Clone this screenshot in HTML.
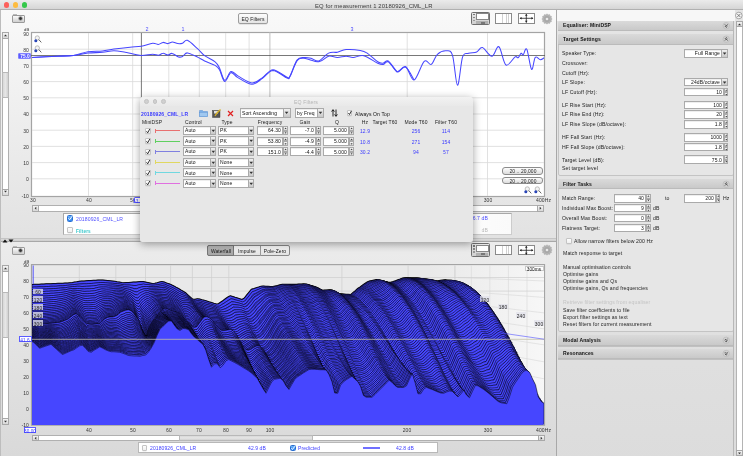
<!DOCTYPE html><html><head><meta charset="utf-8"><style>
*{margin:0;padding:0;box-sizing:border-box}
html,body{width:743px;height:456px;overflow:hidden;background:#e4e4e4;font-family:"Liberation Sans", sans-serif;position:relative}
.a{position:absolute}
.t{position:absolute;white-space:pre;line-height:1;font-family:"Liberation Sans", sans-serif;letter-spacing:0.1px;will-change:transform}
</style></head><body>
<div class="a" style="left:0.0px;top:10.0px;width:557.0px;height:228.0px;background:linear-gradient(#f9f9f9,#e2e2e2)"></div>
<div class="a" style="left:0.0px;top:241.0px;width:557.0px;height:215.0px;background:linear-gradient(#ececec,#d9d9d9)"></div>
<div class="a" style="left:0.0px;top:237.5px;width:557.0px;height:4.5px;background:linear-gradient(#dadada,#cdcdcd);border-top:0.5px solid #c4c4c4;border-bottom:1px solid #a8a8a8"></div>
<svg class="a" style="left:2px;top:238.5px" width="14" height="4"><path d="M0.5,3.6 L3,0.6 L5.5,3.6Z M6.5,0.6 L11.5,0.6 L9,3.6Z" fill="#111"/></svg>
<div class="a" style="left:0.0px;top:10.0px;width:1.0px;height:446.0px;background:#bdbdbd"></div>
<div class="a" style="left:0.0px;top:0.0px;width:743.0px;height:10.0px;background:linear-gradient(#ebebeb,#d5d5d5);border-bottom:1px solid #b0b0b0"></div>
<div class="a" style="left:3.7px;top:2.0px;width:5.6px;height:5.6px;border-radius:50%;background:#fc605b"></div>
<div class="a" style="left:12.7px;top:2.0px;width:5.6px;height:5.6px;border-radius:50%;background:#fdbc40"></div>
<div class="a" style="left:21.5px;top:2.0px;width:5.6px;height:5.6px;border-radius:50%;background:#34c84a"></div>
<div class="t" style="left:314.5px;top:4px;font-size:5.9px;color:#3a3a3a;">EQ for measurement 1 20180926_CML_LR</div>
<div class="a" style="left:12.0px;top:14.5px;width:13.0px;height:8.0px;background:linear-gradient(#fafafa,#d0d0d0);border:1px solid #9a9a9a;border-radius:1px"></div><div class="a" style="left:13.0px;top:13.5px;width:4.0px;height:1.5px;background:#bbb"></div><div class="a" style="left:17.5px;top:16.0px;width:5.0px;height:5.0px;border-radius:50%;background:radial-gradient(#333 25%,#888 45%,#ccc 70%)"></div>
<div class="a" style="left:238.3px;top:12.8px;width:29.4px;height:11.0px;background:linear-gradient(#fdfdfd,#e4e4e4);border:1px solid #9d9d9d;border-radius:2px;box-shadow:0 0.5px 0.5px rgba(0,0,0,.15)"></div><div class="t" style="left:253.0px;top:17px;font-size:5.0px;color:#1a1a1a;transform:translateX(-50%);">EQ Filters</div>
<div class="a" style="left:471.0px;top:11.5px;width:19.0px;height:13.5px;background:linear-gradient(#e8e8e8,#cfcfcf);border:1.3px solid #6e6e6e;border-radius:1.5px"></div><div class="a" style="left:475.5px;top:13.3px;width:13.0px;height:7.0px;background:#fff;border:0.6px solid #888"></div><div class="a" style="left:472.5px;top:13.5px;width:2.2px;height:1.6px;background:#777"></div><div class="a" style="left:472.5px;top:16.5px;width:2.2px;height:1.6px;background:#888"></div><div class="a" style="left:472.5px;top:19.5px;width:2.2px;height:1.6px;background:#999"></div><div class="a" style="left:476.0px;top:21.3px;width:12.0px;height:2.6px;background:#b0b0b0"></div><div class="a" style="left:480.5px;top:21.6px;width:4.0px;height:2.0px;background:#777"></div><div class="a" style="left:495.0px;top:12.9px;width:16.6px;height:10.8px;background:#fff;border:1px solid #8a8a8a"></div><div class="a" style="left:502.0px;top:13.9px;width:0.6px;height:8.8px;background:#d0d0d0"></div><div class="a" style="left:505.5px;top:13.9px;width:0.6px;height:8.8px;background:#d0d0d0"></div><div class="a" style="left:508.0px;top:13.9px;width:0.6px;height:8.8px;background:#d0d0d0"></div><div class="a" style="left:518.0px;top:12.9px;width:16.6px;height:10.8px;background:#fff;border:1px solid #8a8a8a"></div><svg class="a" style="left:518px;top:13.0px" width="17" height="11"><path d="M2,5.3 H15 M8.3,1 V9.6" stroke="#222" stroke-width="0.8"/><path d="M1.6,5.3 L3.6,4 L3.6,6.6Z M15.4,5.3 L13.4,4 L13.4,6.6Z M8.3,0.9 L7,2.8 L9.6,2.8Z M8.3,9.7 L7,7.8 L9.6,7.8Z" fill="#222"/></svg><svg class="a" style="left:541px;top:12.5px" width="12" height="12"><polygon points="11.20,6.00 10.06,7.09 10.50,8.60 8.97,8.97 8.60,10.50 7.09,10.06 6.00,11.20 4.91,10.06 3.40,10.50 3.03,8.97 1.50,8.60 1.94,7.09 0.80,6.00 1.94,4.91 1.50,3.40 3.03,3.03 3.40,1.50 4.91,1.94 6.00,0.80 7.09,1.94 8.60,1.50 8.97,3.03 10.50,3.40 10.06,4.91" fill="#b4b4b4" stroke="#9a9a9a" stroke-width="0.4"/><circle cx="6" cy="6" r="3" fill="#a8a8a8"/><circle cx="6" cy="6" r="1.3" fill="#e8e8e8"/></svg>
<svg class="a" style="left:0;top:0" width="743" height="456" viewBox="0 0 743 456">
<defs><clipPath id="upc"><rect x="32" y="33" width="512" height="163"/></clipPath></defs>
<rect x="31.5" y="32.5" width="513" height="164" fill="#fff" stroke="#a4a4a4" stroke-width="1.2"/>
<g clip-path="url(#upc)" stroke="#d9d9d9" stroke-width="0.8">
<line x1="31" y1="49.2" x2="545" y2="49.2"/>
<line x1="31" y1="65.4" x2="545" y2="65.4"/>
<line x1="31" y1="81.6" x2="545" y2="81.6"/>
<line x1="31" y1="97.8" x2="545" y2="97.8"/>
<line x1="31" y1="114.0" x2="545" y2="114.0"/>
<line x1="31" y1="130.2" x2="545" y2="130.2"/>
<line x1="31" y1="146.4" x2="545" y2="146.4"/>
<line x1="31" y1="162.6" x2="545" y2="162.6"/>
<line x1="31" y1="178.8" x2="545" y2="178.8"/>
<line x1="88.5" y1="32" x2="88.5" y2="197"/>
<line x1="132.7" y1="32" x2="132.7" y2="197"/>
<line x1="168.8" y1="32" x2="168.8" y2="197"/>
<line x1="199.3" y1="32" x2="199.3" y2="197"/>
<line x1="225.7" y1="32" x2="225.7" y2="197"/>
<line x1="249.1" y1="32" x2="249.1" y2="197"/>
<line x1="407.2" y1="32" x2="407.2" y2="197"/>
<line x1="487.5" y1="32" x2="487.5" y2="197"/>
</g>
<line x1="269.9" y1="32" x2="269.9" y2="197" stroke="#b8b8b8" stroke-width="0.9"/>
<line x1="141.4" y1="33" x2="141.4" y2="196" stroke="#6a6a6a" stroke-width="0.9"/>
<line x1="31" y1="55.5" x2="545" y2="55.5" stroke="#555" stroke-width="0.8"/>
<g clip-path="url(#upc)" fill="none" stroke="#4646ff" stroke-width="1.05" stroke-linejoin="round">
<path d="M31.1,57.5 C35.5,57.3 50.2,56.6 57.3,56.3 C64.4,56.0 68.4,56.0 73.5,55.5 C78.6,55.0 83.2,53.6 88.0,53.1 C92.8,52.6 98.2,52.7 102.5,52.3 C106.8,51.9 110.1,50.7 113.9,50.7 C117.7,50.7 122.5,51.9 125.2,52.3 C127.9,52.7 127.3,52.8 130.0,53.3 C132.7,53.8 137.5,55.4 141.3,55.5 C145.1,55.6 149.8,54.2 152.6,54.2 C155.4,54.2 156.6,55.4 158.3,55.3 C160.1,55.1 161.5,53.3 163.1,53.3 C164.7,53.2 166.5,55.0 168.0,55.0 C169.5,55.0 170.2,53.1 172.0,53.4 C173.8,53.7 176.8,56.4 178.5,56.9 C180.2,57.4 181.0,57.2 182.5,56.5 C184.0,55.8 184.9,52.8 187.4,52.9 C189.9,53.0 194.6,55.8 197.5,57.1 C200.4,58.5 201.7,59.6 204.6,61.0 C207.5,62.4 212.6,64.0 215.1,65.4 C217.6,66.9 217.9,67.0 219.5,69.7 C221.1,72.4 222.8,81.0 224.7,81.5 C226.6,82.0 228.7,73.4 230.9,72.7 C233.1,72.0 234.4,75.7 237.9,77.6 C241.4,79.5 247.8,84.2 251.9,84.3 C256.0,84.4 259.0,80.6 262.5,78.3 C266.0,76.0 268.9,70.5 273.0,70.4 C277.1,70.4 284.2,77.0 287.0,78.0 C289.8,79.0 288.3,79.4 290.0,76.6 C291.7,73.8 294.7,64.0 297.0,61.0 C299.3,58.0 300.4,58.2 304.0,58.3 C307.6,58.4 314.8,62.1 318.9,61.8 C323.0,61.4 325.5,56.9 328.6,56.2 C331.7,55.5 334.5,57.5 337.4,57.5 C340.3,57.5 343.5,56.2 346.1,56.2 C348.7,56.2 350.3,57.6 353.2,57.5 C356.1,57.4 359.6,54.8 363.7,55.7 C367.8,56.7 374.5,61.7 377.7,63.2 C380.9,64.7 381.2,64.7 383.0,64.5 C384.8,64.3 386.0,60.7 388.2,61.8 C390.4,62.9 394.3,69.6 396.1,71.2 C397.9,72.8 397.2,72.2 398.8,71.5 C400.4,70.8 403.2,65.8 405.8,67.2 C408.4,68.6 412.7,77.8 414.1,79.9"/>
<path d="M31.1,57.5 C35.5,57.3 50.2,56.6 57.3,56.3 C64.4,56.0 68.4,56.2 73.5,55.5 C78.6,54.8 83.2,52.5 88.0,51.8 C92.8,51.0 98.2,51.5 102.5,51.0 C106.8,50.5 109.3,49.7 113.9,49.1 C118.5,48.5 125.4,47.7 130.0,47.2 C134.6,46.7 137.5,46.9 141.3,46.2 C145.1,45.5 149.8,43.5 152.6,43.2 C155.4,42.9 156.6,44.5 158.3,44.4 C160.1,44.3 161.5,42.5 163.1,42.4 C164.7,42.3 166.4,43.7 168.0,43.6 C169.6,43.5 170.8,42.0 172.4,42.0 C174.0,42.0 176.0,43.4 177.7,43.6 C179.4,43.8 180.9,43.8 182.5,43.2 C184.1,42.7 184.9,39.4 187.4,40.3 C189.9,41.2 194.6,46.1 197.5,48.7 C200.4,51.3 201.7,53.5 204.6,55.7 C207.5,57.9 212.6,59.8 215.1,61.8 C217.6,63.8 217.9,64.9 219.5,68.0 C221.1,71.1 222.8,79.7 224.7,80.3 C226.6,80.9 228.7,72.2 230.9,71.5 C233.1,70.8 234.4,74.0 237.9,75.9 C241.4,77.8 247.8,82.6 251.9,82.9 C256.0,83.2 259.0,79.8 262.5,77.6 C266.0,75.4 268.9,69.8 273.0,69.7 C277.1,69.7 284.2,76.3 287.0,77.3 C289.8,78.3 288.3,78.8 290.0,75.9 C291.7,73.0 294.7,63.2 297.0,60.1 C299.3,57.0 301.7,57.8 304.0,57.5 C306.3,57.2 308.5,57.7 311.0,58.3 C313.5,58.9 316.0,61.9 318.9,61.0 C321.8,60.1 325.5,54.6 328.6,53.1 C331.7,51.6 334.5,52.8 337.4,52.2 C340.3,51.6 342.3,49.9 346.1,49.6 C349.9,49.3 356.7,49.8 360.2,50.4 C363.7,51.0 364.3,51.2 367.2,53.1 C370.1,55.0 375.1,60.1 377.7,61.8 C380.3,63.5 381.2,63.3 383.0,63.2 C384.8,63.1 386.0,59.8 388.2,61.0 C390.4,62.2 394.3,68.9 396.1,70.6 C397.9,72.3 397.2,71.6 398.8,71.0 C400.4,70.4 403.2,65.3 405.8,66.8 C408.4,68.3 411.0,80.8 414.1,79.9 C417.2,79.0 421.3,63.9 424.2,61.3 C427.1,58.7 429.1,65.6 431.3,64.4 C433.5,63.2 434.9,56.6 437.4,54.3 C439.9,52.0 443.9,50.6 446.4,50.8 C448.9,51.0 450.6,49.6 452.5,55.3 C454.4,61.0 455.8,84.9 457.5,85.2 C459.2,85.5 460.8,62.2 462.6,56.9 C464.5,51.6 466.2,54.1 468.6,53.3 C471.0,52.5 474.4,52.8 476.7,51.9 C479.0,51.0 479.9,46.9 482.4,47.6 C484.9,48.3 489.1,56.4 491.9,56.3 C494.6,56.2 496.5,45.3 498.9,46.8 C501.2,48.2 503.3,63.3 506.0,65.0 C508.7,66.7 513.1,58.1 515.1,56.9 C517.1,55.7 517.1,58.3 518.1,57.7 C519.1,57.1 520.2,53.8 521.1,53.3 C522.0,52.8 522.2,55.6 523.2,54.9 C524.2,54.2 525.4,46.8 526.8,49.2 C528.2,51.6 530.2,68.1 531.6,69.4 C533.0,70.8 533.8,58.9 535.3,57.3 C536.8,55.7 538.8,59.6 540.3,59.7 C541.8,59.8 543.7,58.0 544.4,57.7"/>
</g>
</svg>
<div class="t" style="left:29.3px;top:48px;font-size:5.0px;color:#333;transform:translateX(-100%);">80</div>
<div class="t" style="left:29.3px;top:64px;font-size:5.0px;color:#333;transform:translateX(-100%);">70</div>
<div class="t" style="left:29.3px;top:80px;font-size:5.0px;color:#333;transform:translateX(-100%);">60</div>
<div class="t" style="left:29.3px;top:96px;font-size:5.0px;color:#333;transform:translateX(-100%);">50</div>
<div class="t" style="left:29.3px;top:112px;font-size:5.0px;color:#333;transform:translateX(-100%);">40</div>
<div class="t" style="left:29.3px;top:129px;font-size:5.0px;color:#333;transform:translateX(-100%);">30</div>
<div class="t" style="left:29.3px;top:145px;font-size:5.0px;color:#333;transform:translateX(-100%);">20</div>
<div class="t" style="left:29.3px;top:161px;font-size:5.0px;color:#333;transform:translateX(-100%);">10</div>
<div class="t" style="left:29.3px;top:177px;font-size:5.0px;color:#333;transform:translateX(-100%);">0</div>
<div class="t" style="left:29.3px;top:194px;font-size:5.0px;color:#333;transform:translateX(-100%);">-10</div>
<div class="t" style="left:29.3px;top:32px;font-size:5.0px;color:#333;transform:translateX(-100%);">90</div>
<div class="t" style="left:24.0px;top:28px;font-size:4.2px;color:#333;">dB</div>
<div class="t" style="left:29.5px;top:198px;font-size:5.0px;color:#333;">30</div>
<div class="t" style="left:88.5px;top:198px;font-size:5.0px;color:#333;transform:translateX(-50%);">40</div>
<div class="t" style="left:132.7px;top:198px;font-size:5.0px;color:#333;transform:translateX(-50%);">50</div>
<div class="t" style="left:168.8px;top:198px;font-size:5.0px;color:#333;transform:translateX(-50%);">60</div>
<div class="t" style="left:199.3px;top:198px;font-size:5.0px;color:#333;transform:translateX(-50%);">70</div>
<div class="t" style="left:225.7px;top:198px;font-size:5.0px;color:#333;transform:translateX(-50%);">80</div>
<div class="t" style="left:249.1px;top:198px;font-size:5.0px;color:#333;transform:translateX(-50%);">90</div>
<div class="t" style="left:269.9px;top:198px;font-size:5.0px;color:#333;transform:translateX(-50%);">100</div>
<div class="t" style="left:407.2px;top:198px;font-size:5.0px;color:#333;transform:translateX(-50%);">200</div>
<div class="t" style="left:487.5px;top:198px;font-size:5.0px;color:#333;transform:translateX(-50%);">300</div>
<div class="t" style="left:551.0px;top:198px;font-size:5.0px;color:#333;transform:translateX(-100%);">400Hz</div>
<div class="a" style="left:133.5px;top:197.2px;width:10.0px;height:5.8px;background:#fff;border:0.6px solid #5b5bff;border-radius:1px"></div>
<div class="t" style="left:138.8px;top:200px;font-size:4.6px;color:#3a3aff;transform:translateX(-50%);">53.80</div>
<div class="a" style="left:18.2px;top:52.6px;width:13.2px;height:6.0px;background:#5b5bff;border:0.6px solid #8080ff;border-radius:1px"></div>
<div class="t" style="left:24.8px;top:55px;font-size:4.8px;color:#fff;font-weight:bold;transform:translateX(-50%);">75.0</div>
<div class="t" style="left:147.3px;top:27px;font-size:5.4px;color:#4a4aff;transform:translateX(-50%);">2</div>
<div class="t" style="left:182.5px;top:27px;font-size:5.4px;color:#4a4aff;transform:translateX(-50%);">1</div>
<div class="t" style="left:351.5px;top:27px;font-size:5.4px;color:#4a4aff;transform:translateX(-50%);">3</div>
<div class="a" style="left:2.0px;top:32.4px;width:7.0px;height:163.1px;background:#fff;border:1px solid #b0b0b0"></div><div class="a" style="left:2.0px;top:72.3px;width:7.0px;height:26.1px;background:linear-gradient(90deg,#d8d8d8,#e6e6e6,#d0d0d0);border:1px solid #b8b8b8"></div><div class="a" style="left:2.0px;top:32.4px;width:7.0px;height:7.0px;background:linear-gradient(#f4f4f4,#d8d8d8);border:1px solid #a8a8a8"></div><div class="a" style="left:2.0px;top:188.5px;width:7.0px;height:7.0px;background:linear-gradient(#f4f4f4,#d8d8d8);border:1px solid #a8a8a8"></div><svg class="a" style="left:2px;top:32.4px" width="7" height="163.1"><path d="M2.0,4.3 L5.0,4.3 L3.5,2.6Z M2.0,158.79999999999998 L5.0,158.79999999999998 L3.5,160.5Z" fill="#333"/></svg>
<div class="a" style="left:31.5px;top:205.2px;width:512.0px;height:6.6px;background:#fff;border:1px solid #b0b0b0"></div><div class="a" style="left:31.5px;top:205.2px;width:7.0px;height:6.6px;background:linear-gradient(#f4f4f4,#d8d8d8);border:1px solid #a8a8a8"></div><svg class="a" style="left:31.5px;top:205.2px" width="7" height="6.6"><path d="M4.3,1.7999999999999998 L4.3,4.8 L2.6,3.3Z" fill="#333"/></svg><div class="a" style="left:536.5px;top:205.2px;width:7.0px;height:6.6px;background:linear-gradient(#f4f4f4,#d8d8d8);border:1px solid #a8a8a8"></div><svg class="a" style="left:536.5px;top:205.2px" width="7" height="6.6"><path d="M2.7,1.7999999999999998 L2.7,4.8 L4.4,3.3Z" fill="#333"/></svg>
<div class="a" style="left:63.2px;top:212.9px;width:448.7px;height:22.3px;background:linear-gradient(90deg,#fff 0%,#fff 80%,#fafafa);border:1px solid #a8a8a8;border-right-color:#ccc;border-bottom-color:#ccc"></div>
<div class="a" style="left:67.1px;top:215.3px;width:6.3px;height:6.3px;background:linear-gradient(#6cb3fa,#2f86f0);border:0.5px solid #2a6fd0;border-radius:1.5px"></div><svg class="a" style="left:67.1px;top:215.3px" width="6.3" height="6.3"><path d="M1.386,3.276 L2.646,4.725 L5.04,1.386" fill="none" stroke="#fff" stroke-width="0.9"/></svg>
<div class="t" style="left:76.2px;top:217px;font-size:5.1px;color:#5050ff;">20180926_CML_LR</div>
<div class="a" style="left:67.1px;top:227.2px;width:5.8px;height:5.8px;background:linear-gradient(#fdfdfd,#f0f0f0);border:0.5px solid #c4c4c4;border-radius:1px;box-shadow:0 0.3px 0.6px rgba(0,0,0,.18)"></div>
<div class="t" style="left:76.2px;top:230px;font-size:4.7px;color:#3cc8cc;font-weight:bold;">Filters</div>
<div class="t" style="left:487.5px;top:216px;font-size:5.1px;color:#4a4aff;transform:translateX(-100%);">6.7 dB</div>
<div class="t" style="left:487.5px;top:228px;font-size:5.1px;color:#b8b8b8;transform:translateX(-100%);">dB</div>
<div class="a" style="left:502.3px;top:167.4px;width:40.3px;height:7.3px;background:linear-gradient(#fdfdfd,#dcdcdc);border:0.8px solid #8c8c8c;border-radius:3px"></div>
<div class="t" style="left:522.5px;top:170px;font-size:4.9px;color:#222;transform:translateX(-50%);">20 .. 20,000</div>
<div class="a" style="left:502.3px;top:177.0px;width:40.3px;height:7.3px;background:linear-gradient(#fdfdfd,#dcdcdc);border:0.8px solid #8c8c8c;border-radius:3px"></div>
<div class="t" style="left:522.5px;top:180px;font-size:4.9px;color:#222;transform:translateX(-50%);">20 .. 20,000</div>
<svg class="a" style="left:524.2px;top:186.0px" width="8" height="8"><circle cx="3.3" cy="3" r="2.2" fill="#f4f4f4" stroke="#999" stroke-width="0.6"/><path d="M4.8,4.6 L7.3,7.4" stroke="#555" stroke-width="0.9"/><circle cx="1.8" cy="5.8" r="1.5" fill="#2844b8"/></svg>
<svg class="a" style="left:533.9px;top:186.0px" width="8" height="8"><circle cx="3.3" cy="3" r="2.2" fill="#f4f4f4" stroke="#999" stroke-width="0.6"/><path d="M4.8,4.6 L7.3,7.4" stroke="#555" stroke-width="0.9"/><circle cx="1.8" cy="5.8" r="1.5" fill="#2844b8"/></svg>
<svg class="a" style="left:33.5px;top:35.3px" width="8" height="8"><circle cx="3.3" cy="3" r="2.2" fill="#f4f4f4" stroke="#999" stroke-width="0.6"/><path d="M4.8,4.6 L7.3,7.4" stroke="#555" stroke-width="0.9"/><circle cx="1.8" cy="5.8" r="1.5" fill="#2844b8"/></svg>
<svg class="a" style="left:33.5px;top:45.2px" width="8" height="8"><circle cx="3.3" cy="3" r="2.2" fill="#f4f4f4" stroke="#999" stroke-width="0.6"/><path d="M4.8,4.6 L7.3,7.4" stroke="#555" stroke-width="0.9"/><circle cx="1.8" cy="5.8" r="1.5" fill="#2844b8"/></svg>
<div class="a" style="left:12.0px;top:246.5px;width:13.0px;height:8.0px;background:linear-gradient(#fafafa,#d0d0d0);border:1px solid #9a9a9a;border-radius:1px"></div><div class="a" style="left:13.0px;top:245.5px;width:4.0px;height:1.5px;background:#bbb"></div><div class="a" style="left:17.5px;top:248.0px;width:5.0px;height:5.0px;border-radius:50%;background:radial-gradient(#333 25%,#888 45%,#ccc 70%)"></div>
<div class="a" style="left:207.0px;top:245.4px;width:83.0px;height:10.8px;background:linear-gradient(#fcfcfc,#e2e2e2);border:1px solid #8a8a8a;border-radius:2px"></div>
<div class="a" style="left:207.0px;top:245.4px;width:27.3px;height:10.8px;background:linear-gradient(#b9b9b9,#a6a6a6);border:1px solid #777;border-radius:2px 0 0 2px"></div>
<div class="a" style="left:260.3px;top:246.0px;width:0.7px;height:9.8px;background:#9a9a9a"></div>
<div class="t" style="left:220.7px;top:250px;font-size:4.9px;color:#111;transform:translateX(-50%);">Waterfall</div>
<div class="t" style="left:247.3px;top:250px;font-size:4.9px;color:#111;transform:translateX(-50%);">Impulse</div>
<div class="t" style="left:275.2px;top:250px;font-size:4.9px;color:#111;transform:translateX(-50%);">Pole-Zero</div>
<div class="a" style="left:471.0px;top:243.3px;width:19.0px;height:13.5px;background:linear-gradient(#e8e8e8,#cfcfcf);border:1.3px solid #6e6e6e;border-radius:1.5px"></div><div class="a" style="left:475.5px;top:245.1px;width:13.0px;height:7.0px;background:#fff;border:0.6px solid #888"></div><div class="a" style="left:472.5px;top:245.3px;width:2.2px;height:1.6px;background:#777"></div><div class="a" style="left:472.5px;top:248.3px;width:2.2px;height:1.6px;background:#888"></div><div class="a" style="left:472.5px;top:251.3px;width:2.2px;height:1.6px;background:#999"></div><div class="a" style="left:476.0px;top:253.1px;width:12.0px;height:2.6px;background:#b0b0b0"></div><div class="a" style="left:480.5px;top:253.4px;width:4.0px;height:2.0px;background:#777"></div><div class="a" style="left:495.0px;top:244.7px;width:16.6px;height:10.8px;background:#fff;border:1px solid #8a8a8a"></div><div class="a" style="left:502.0px;top:245.7px;width:0.6px;height:8.8px;background:#d0d0d0"></div><div class="a" style="left:505.5px;top:245.7px;width:0.6px;height:8.8px;background:#d0d0d0"></div><div class="a" style="left:508.0px;top:245.7px;width:0.6px;height:8.8px;background:#d0d0d0"></div><div class="a" style="left:518.0px;top:244.7px;width:16.6px;height:10.8px;background:#fff;border:1px solid #8a8a8a"></div><svg class="a" style="left:518px;top:244.8px" width="17" height="11"><path d="M2,5.3 H15 M8.3,1 V9.6" stroke="#222" stroke-width="0.8"/><path d="M1.6,5.3 L3.6,4 L3.6,6.6Z M15.4,5.3 L13.4,4 L13.4,6.6Z M8.3,0.9 L7,2.8 L9.6,2.8Z M8.3,9.7 L7,7.8 L9.6,7.8Z" fill="#222"/></svg><svg class="a" style="left:541px;top:244.3px" width="12" height="12"><polygon points="11.20,6.00 10.06,7.09 10.50,8.60 8.97,8.97 8.60,10.50 7.09,10.06 6.00,11.20 4.91,10.06 3.40,10.50 3.03,8.97 1.50,8.60 1.94,7.09 0.80,6.00 1.94,4.91 1.50,3.40 3.03,3.03 3.40,1.50 4.91,1.94 6.00,0.80 7.09,1.94 8.60,1.50 8.97,3.03 10.50,3.40 10.06,4.91" fill="#b4b4b4" stroke="#9a9a9a" stroke-width="0.4"/><circle cx="6" cy="6" r="3" fill="#a8a8a8"/><circle cx="6" cy="6" r="1.3" fill="#e8e8e8"/></svg>
<svg class="a" style="left:0;top:0" width="743" height="456" viewBox="0 0 743 456"><defs><clipPath id="wfc"><rect x="32" y="265.5" width="512" height="159"/></clipPath></defs><rect x="31.5" y="264.6" width="513" height="160.6" fill="#e9e9e9" stroke="#a4a4a4" stroke-width="1.2"/><g clip-path="url(#wfc)"><defs><linearGradient id="bgr" x1="0" x2="1" y1="0" y2="0"><stop offset="0" stop-color="#e9e9e9"/><stop offset="1" stop-color="#f7f7f7"/></linearGradient></defs>
<rect x="430" y="265" width="115" height="160" fill="url(#bgr)"/>
<g stroke="#d6d6d6" stroke-width="0.6" fill="none">
<line x1="454.7" y1="265" x2="454.7" y2="425"/>
<line x1="471.3" y1="265" x2="471.3" y2="425"/>
<line x1="489.8" y1="265" x2="489.8" y2="425"/>
<line x1="508.4" y1="265" x2="508.4" y2="425"/>
<line x1="527" y1="265" x2="527" y2="425"/>
<line x1="458" y1="277.6" x2="545" y2="281"/>
<line x1="458" y1="291" x2="545" y2="297.5"/>
<line x1="460" y1="303" x2="545" y2="313"/>
<line x1="470" y1="318" x2="545" y2="329"/>
<line x1="480" y1="335" x2="545" y2="345"/>
<line x1="490" y1="352" x2="545" y2="362"/>
<line x1="500" y1="370" x2="545" y2="379"/>
</g><g stroke="#cfcfcf" stroke-width="0.7" fill="none">
<line x1="79.3" y1="264" x2="79.3" y2="426"/>
<line x1="115.8" y1="264" x2="115.8" y2="426"/>
<line x1="145.5" y1="264" x2="145.5" y2="426"/>
<line x1="170.6" y1="264" x2="170.6" y2="426"/>
<line x1="192.4" y1="264" x2="192.4" y2="426"/>
<line x1="211.6" y1="264" x2="211.6" y2="426"/>
<line x1="228.8" y1="264" x2="228.8" y2="426"/>
<line x1="341.9" y1="264" x2="341.9" y2="426"/>
<line x1="408.1" y1="264" x2="408.1" y2="426"/>
<line x1="455.0" y1="264" x2="455.0" y2="426"/>
<line x1="31" y1="277.5" x2="545" y2="277.5"/>
<line x1="31" y1="291.1" x2="545" y2="291.1"/>
</g><g transform="scale(0.25)" fill="#4646ff" stroke="#000" stroke-width="2.0"><path d="M128,1139l9,-1 10,0 9,0 10,-1 9,0 10,-1 9,0 10,0 9,-1 9,0 10,-1 9,0 10,0 9,-1 10,0 9,-1 10,-1 9,-2 9,-1 10,-2 9,-1 10,0 9,-1 10,-1 9,0 10,-1 9,0 9,-1 10,0 9,0 10,1 9,1 10,1 9,1 10,1 9,2 9,1 10,2 9,1 10,-1 9,0 10,-1 9,-1 10,0 9,-1 9,-1 10,0 9,2 10,2 9,2 10,2 9,-1 10,-2 9,-3 9,-2 10,2 9,4 10,3 9,4 10,5 9,5 10,5 9,6 9,5 10,6 9,8 10,9 9,8 10,1 9,-2 10,1 9,3 9,2 10,3 9,3 10,3 9,3 10,3 9,-1 10,-7 9,-6 9,-7 10,-7 9,-5 10,3 9,3 10,3 9,3 9,3 10,-6 9,-12 10,-12 9,-11 10,-3 9,-3 10,-3 9,-3 9,-1 10,1 9,0 10,1 9,0 10,-2 9,-2 10,-3 9,-2 9,0 10,0 9,0 10,0 9,0 10,0 9,-1 10,0 9,-1 9,1 10,2 9,3 10,3 9,3 10,4 9,5 10,5 9,-1 9,0 10,-1 9,1 10,5 9,6 10,3 9,1 10,1 9,1 9,0 10,1 9,-8 10,-8 9,-8 10,-6 9,-7 10,-7 9,-6 9,-4 10,-2 9,-2 10,-2 9,2 10,3 9,2 10,2 9,2 9,0 10,-3 9,-3 10,-4 9,-3 10,-4 9,-1 10,0 9,0 9,0 10,0 9,0 10,1 9,2 10,2 9,1 10,2 9,3 9,3 10,0 9,-2 10,-2 9,-1 10,-1 9,3 10,2 9,3 9,4" fill="none" stroke-width="6.4"/><path d="M128,1139l9,-1 10,0 9,0 10,-1 9,0 10,-1 9,0 10,0 9,-1 9,0 10,-1 9,0 10,0 9,-1 10,0 9,-1 10,-1 9,-2 9,-1 10,-2 9,-1 10,0 9,-1 10,-1 9,0 10,-1 9,0 9,-1 10,0 9,0 10,1 9,1 10,1 9,1 10,1 9,2 9,1 10,2 9,1 10,-1 9,0 10,-1 9,-1 10,0 9,-1 9,-1 10,0 9,2 10,2 9,2 10,2 9,-1 10,-2 9,-3 9,-2 10,2 9,4 10,3 9,4 10,5 9,5 10,5 9,6 9,5 10,6 9,8 10,9 9,8 10,1 9,-2 10,1 9,3 9,2 10,3 9,3 10,3 9,3 10,3 9,-1 10,-7 9,-6 9,-7 10,-7 9,-5 10,3 9,3 10,3 9,3 9,3 10,-6 9,-12 10,-12 9,-11 10,-3 9,-3 10,-3 9,-3 9,-1 10,1 9,0 10,1 9,0 10,-2 9,-2 10,-3 9,-2 9,0 10,0 9,0 10,0 9,0 10,0 9,-1 10,0 9,-1 9,1 10,2 9,3 10,3 9,3 10,4 9,5 10,5 9,-1 9,0 10,-1 9,1 10,5 9,6 10,3 9,1 10,1 9,1 9,0 10,1 9,-8 10,-8 9,-8 10,-6 9,-7 10,-7 9,-6 9,-4 10,-2 9,-2 10,-2 9,2 10,3 9,2 10,2 9,2 9,0 10,-3 9,-3 10,-4 9,-3 10,-4 9,-1 10,0 9,0 9,0 10,0 9,0 10,1 9,2 10,2 9,1 10,2 9,3 9,3 10,0 9,-2 10,-2 9,-1 10,-1 9,3 10,2 9,3 9,4V1704H128Z"/><path d="M128,1149l9,-1 10,0 9,-1 10,0 9,0 10,-1 9,0 10,-1 9,0 10,0 9,-1 10,-1 9,0 10,-1 9,-1 10,-1 9,-1 10,-1 9,-1 10,-1 9,-1 10,0 9,0 9,-1 10,0 9,-1 10,-1 9,-1 10,-1 9,0 10,1 9,1 10,0 9,1 10,1 9,1 10,1 9,2 10,2 9,0 10,0 9,1 10,1 9,0 10,-2 9,-2 10,-1 9,1 10,1 9,1 9,1 10,-1 9,-2 10,-1 9,-2 10,2 9,4 10,4 9,4 10,5 9,5 10,5 9,5 10,5 9,5 10,7 9,8 10,8 9,2 10,-2 9,1 10,4 9,2 10,3 9,3 9,3 10,4 9,3 10,0 9,-6 10,-6 9,-6 10,-7 9,-5 10,2 9,3 10,3 9,3 9,3 10,-6 9,-12 10,-12 9,-12 10,-3 9,-4 10,-4 9,-4 9,-2 10,0 9,0 10,0 9,0 10,-3 9,-3 10,-2 9,-2 9,0 10,0 9,0 10,0 9,0 10,0 9,-1 10,-1 9,0 10,-1 9,3 10,3 9,3 10,3 9,4 10,5 9,5 9,-1 10,-1 9,-1 10,1 9,6 10,6 9,3 10,1 9,1 10,0 9,1 10,0 9,-8 10,-8 9,-7 10,-7 9,-6 9,-7 10,-6 9,-4 10,-2 9,-3 10,-2 9,2 10,3 9,2 10,3 9,2 10,0 9,-3 10,-4 9,-4 10,-3 9,-4 10,-1 9,1 9,0 10,0 9,0 10,0 9,1 10,1 9,1 10,2 9,2 10,3 9,4 10,-1 9,-2 10,-1 9,-2 10,-1 9,2 9,3 10,3 9,4V1704H128Z"/><path d="M128,1149l9,-1 10,0 9,-1 10,0 9,0 10,-1 9,0 10,-1 9,0 10,0 9,-1 10,-1 9,0 10,-1 9,-1 10,-1 9,-1 10,-1 9,-1 10,-1 9,0 9,-1 10,0 9,-1 10,0 9,-1 10,-1 9,-1 10,-1 9,0 10,1 9,1 10,1 9,0 10,1 9,1 10,1 9,2 10,1 9,1 10,0 9,1 10,1 9,0 10,-3 9,-1 10,-2 9,2 9,0 10,2 9,1 10,-1 9,-1 10,-2 9,-2 10,2 9,4 10,4 9,4 10,5 9,5 10,6 9,5 10,4 9,4 10,8 9,8 10,8 9,2 10,-2 9,2 10,3 9,3 9,2 10,3 9,3 10,3 9,4 10,0 9,-6 10,-6 9,-6 10,-6 9,-6 10,2 9,3 10,2 9,3 9,3 10,-5 9,-12 10,-12 9,-12 10,-3 9,-4 9,-4 10,-4 9,-2 10,0 9,0 10,0 9,0 10,-3 9,-3 9,-3 10,-2 9,0 10,0 9,1 10,0 9,0 10,0 9,-1 10,-1 9,-1 10,0 9,3 10,3 9,3 10,3 9,5 9,5 10,4 9,-1 10,-1 9,-1 10,1 9,6 10,6 9,3 10,2 9,0 10,1 9,0 10,0 9,-8 10,-8 9,-8 10,-6 9,-6 9,-6 10,-7 9,-3 10,-3 9,-3 10,-2 9,2 10,2 9,3 10,3 9,2 10,1 9,-4 10,-4 9,-4 10,-4 9,-3 9,-1 10,1 9,0 10,1 9,0 10,-1 9,1 10,1 9,1 10,1 9,3 10,3 9,4 10,0 9,-2 10,-2 9,-2 9,-1 10,2 9,2 10,4 9,4V1704H128Z"/><path d="M128,1158l9,0 10,-1 9,0 10,0 9,-1 10,0 10,-1 9,0 10,-1 9,0 10,-1 9,-1 10,-1 9,0 10,-2 9,-1 10,-2 9,0 10,-1 9,0 10,1 9,-1 10,0 9,-1 10,0 9,0 10,-2 9,-2 10,-1 9,0 10,1 9,0 10,0 9,0 10,1 10,1 9,1 10,2 9,2 10,1 9,1 10,3 9,2 10,1 9,-4 10,-3 9,-2 10,1 9,-1 10,0 9,1 10,-1 9,-1 10,-1 9,-1 10,2 9,4 10,5 9,4 10,5 9,5 10,6 9,4 10,4 10,3 9,6 10,8 9,8 10,2 9,-1 10,2 9,4 10,3 9,2 10,3 9,3 10,3 9,4 10,1 9,-4 10,-5 9,-6 10,-6 9,-6 10,2 9,2 9,2 10,3 9,3 10,-5 9,-12 10,-11 9,-13 10,-4 9,-5 9,-5 10,-5 9,-2 10,-1 9,0 10,0 9,-1 9,-4 10,-3 9,-3 10,-2 9,-1 10,0 9,1 10,0 9,1 10,0 9,-1 10,-1 9,-2 10,0 9,3 10,3 9,3 10,4 9,4 10,5 9,4 10,-1 9,-2 10,-1 9,1 10,6 9,6 10,4 9,1 10,1 9,0 10,0 9,0 10,-9 9,-8 10,-7 9,-6 10,-6 9,-6 10,-6 9,-4 10,-3 9,-3 10,-3 9,2 10,3 9,3 10,3 9,3 10,0 9,-4 10,-4 9,-4 10,-4 9,-4 10,-1 9,1 10,1 9,1 10,0 9,-1 10,0 9,1 10,1 9,2 10,2 9,4 10,4 9,-1 10,-1 9,-2 10,-3 9,-1 10,2 9,2 10,4 9,5V1704H128Z"/><path d="M128,1158l9,0 10,-1 9,0 10,0 9,-1 10,0 9,-1 10,0 10,-1 9,0 10,-1 9,-1 10,0 9,-1 10,-2 9,-1 10,-2 9,0 10,-1 9,0 10,1 9,0 10,-1 9,0 10,-1 9,-1 10,-1 9,-2 10,-1 9,0 10,1 9,1 10,0 9,-1 10,1 9,1 10,1 10,1 9,3 10,1 9,1 10,3 9,3 10,0 9,-4 10,-3 9,-2 10,0 9,0 10,0 9,1 10,0 9,-1 10,-2 9,-1 10,2 9,4 10,4 9,4 10,6 9,6 10,5 9,4 10,4 9,3 10,6 10,8 9,8 10,2 9,0 10,2 9,3 10,3 9,2 10,3 9,2 10,4 9,4 10,1 9,-4 10,-5 9,-5 10,-6 9,-6 10,1 10,2 9,2 10,3 9,4 10,-5 9,-11 10,-11 10,-12 9,-5 10,-5 9,-5 10,-5 9,-3 10,0 10,1 9,-1 10,0 9,-4 10,-3 9,-3 10,-2 9,-1 10,0 9,0 10,1 9,1 10,0 10,-1 9,-2 10,-1 9,-1 10,3 9,3 10,4 9,3 10,5 9,5 10,4 9,-2 10,-2 9,-2 10,1 9,6 10,7 9,4 10,1 10,1 9,0 10,0 9,-1 10,-8 9,-9 10,-7 9,-5 10,-6 9,-6 10,-6 9,-4 10,-4 9,-3 10,-3 9,2 10,3 10,3 9,3 10,3 9,1 10,-4 9,-5 10,-5 9,-4 10,-3 9,-1 10,1 9,1 10,1 9,0 10,-1 9,0 10,1 9,1 10,1 10,2 9,4 10,4 9,0 10,-1 9,-3 10,-2 9,-2 10,2 9,2 10,5 9,4V1704H128Z"/><path d="M128,1168l9,-1 10,0 9,0 10,-1 10,0 9,-1 10,0 9,-1 10,0 9,-1 10,-1 9,-1 10,-1 10,-1 9,-2 10,-2 9,-1 10,0 9,0 10,0 9,1 10,1 10,-1 9,0 10,-1 9,0 10,-3 9,-2 10,-1 9,0 10,0 10,1 9,-1 10,0 9,0 10,0 9,2 10,1 9,3 10,2 10,2 9,4 10,4 9,2 10,-6 9,-4 10,-3 9,0 10,-2 10,0 9,0 10,0 9,-1 10,-1 9,-1 10,2 9,5 10,5 10,4 9,5 10,6 9,6 10,4 9,2 10,3 9,5 10,7 9,8 10,2 10,1 9,2 10,4 9,3 10,2 9,3 10,2 9,4 10,4 10,2 9,-3 10,-4 9,-5 10,-6 9,-6 9,1 10,1 9,2 10,3 9,3 10,-4 9,-11 10,-12 9,-12 9,-6 10,-6 9,-6 10,-6 9,-3 10,-1 9,0 9,-1 10,-1 9,-5 10,-3 9,-4 10,-2 9,0 10,-1 9,1 10,1 9,1 10,0 9,-1 10,-2 10,-2 9,0 10,2 9,4 10,3 9,4 10,5 9,5 10,4 9,-2 10,-2 9,-2 10,1 9,6 10,7 9,4 10,2 10,0 9,0 10,0 9,-1 10,-9 9,-8 10,-7 9,-5 10,-6 9,-5 10,-7 9,-4 10,-3 9,-4 10,-3 9,2 10,3 9,3 10,4 10,3 9,0 10,-4 9,-5 10,-5 9,-4 10,-4 9,0 10,1 9,2 10,0 9,1 10,-1 9,-1 10,1 9,0 10,2 10,2 9,4 10,5 9,0 10,-2 9,-2 10,-3 9,-2 10,1 9,3 10,4 9,5V1704H128Z"/><path d="M128,1168l9,-1 10,0 9,0 10,-1 10,0 9,-1 10,0 9,-1 10,0 9,-1 10,-1 9,-1 10,-1 10,-1 9,-2 10,-2 9,-1 10,0 9,0 10,0 9,2 10,0 10,-1 9,0 10,-1 9,0 10,-3 9,-2 10,-1 9,0 10,0 10,1 9,0 10,-1 9,0 10,0 9,1 10,2 9,3 10,2 9,2 10,5 10,4 9,1 10,-6 9,-4 10,-3 9,0 10,-2 9,0 10,0 10,0 9,-1 10,-1 9,-1 10,2 9,4 10,5 9,5 10,6 10,6 9,5 10,4 9,2 10,3 9,4 10,7 9,8 10,3 10,1 9,2 10,4 9,3 10,2 9,2 10,3 9,3 10,5 10,2 9,-3 10,-3 9,-5 10,-6 9,-6 10,1 9,1 10,1 10,3 9,4 10,-4 9,-10 10,-11 9,-13 10,-6 10,-6 9,-6 10,-6 9,-3 10,0 9,0 10,0 9,-2 10,-5 10,-3 9,-3 10,-3 9,0 10,-1 9,1 10,2 9,1 10,-1 10,-1 9,-2 10,-2 9,0 10,2 9,3 10,4 10,4 9,5 10,5 9,4 10,-2 9,-3 10,-2 9,0 10,7 10,7 9,4 10,2 9,1 10,-1 9,0 10,-1 9,-9 10,-9 10,-7 9,-5 10,-5 9,-5 10,-6 9,-5 10,-4 9,-4 10,-3 10,2 9,3 10,4 9,4 10,3 9,0 10,-4 9,-5 10,-6 10,-4 9,-4 10,0 9,2 10,1 9,1 10,0 9,-1 10,0 10,0 9,0 10,1 9,3 10,4 9,5 10,0 9,-2 10,-2 10,-3 9,-3 10,2 9,2 10,5 9,5V1704H128Z"/><path d="M128,1177l9,-1 10,0 10,0 9,-1 10,0 9,0 10,-1 9,-1 10,0 10,-1 9,-1 10,-1 9,-1 10,-2 10,-2 9,-2 10,-2 9,0 10,1 10,1 9,2 10,0 9,0 10,0 10,-1 9,0 10,-3 9,-3 10,-2 9,0 10,1 10,0 9,-1 10,-1 9,0 10,0 10,1 9,2 10,3 9,3 10,3 10,6 9,5 10,2 9,-8 10,-4 10,-4 9,-1 10,-3 9,-1 10,0 9,0 10,-1 10,0 9,-1 10,3 9,4 10,5 10,5 9,6 10,6 9,6 10,3 10,2 9,1 10,4 9,6 10,8 10,3 9,1 10,3 9,5 10,3 9,2 10,2 10,2 9,4 10,5 9,2 10,-1 10,-3 9,-4 10,-5 9,-7 10,1 9,0 10,2 10,3 9,4 10,-4 9,-10 10,-11 9,-13 10,-6 9,-7 10,-7 10,-7 9,-4 10,0 9,-1 10,-1 9,-1 10,-6 9,-4 10,-3 10,-2 9,-1 10,0 9,1 10,1 10,1 9,0 10,-1 9,-2 10,-3 9,0 10,2 10,3 9,5 10,4 9,5 10,4 10,4 9,-3 10,-3 9,-2 10,1 10,6 9,7 10,5 9,2 10,0 9,-1 10,0 10,-1 9,-9 10,-9 9,-7 10,-4 10,-5 9,-5 10,-7 9,-4 10,-4 9,-5 10,-3 10,2 9,3 10,4 9,4 10,3 10,0 9,-4 10,-6 9,-5 10,-5 9,-4 10,0 10,2 9,2 10,1 9,0 10,-1 10,-1 9,0 10,0 9,1 10,3 9,4 10,5 10,0 9,-1 10,-3 9,-4 10,-2 10,1 9,3 10,5 9,5V1704H128Z"/><path d="M128,1177l9,-1 10,0 9,0 10,-1 10,0 9,0 10,-1 9,-1 10,0 10,-1 9,-1 10,-1 9,-1 10,-2 10,-2 9,-2 10,-2 9,0 10,1 10,1 9,2 10,1 9,-1 10,0 9,-1 10,-1 10,-2 9,-3 10,-2 9,0 10,1 10,0 9,-1 10,-1 9,0 10,0 10,1 9,1 10,4 9,3 10,3 10,6 9,6 10,1 9,-8 10,-5 9,-4 10,0 10,-3 9,0 10,-1 9,0 10,0 10,-1 9,-1 10,2 9,5 10,5 10,5 9,6 10,7 9,5 10,3 10,2 9,1 10,3 9,7 10,8 9,3 10,1 10,4 9,4 10,3 9,2 10,2 10,2 9,4 10,4 9,3 10,-1 10,-2 9,-4 10,-6 9,-6 10,0 9,0 10,1 9,3 10,5 10,-4 9,-9 10,-12 9,-13 10,-6 9,-8 10,-7 10,-6 9,-4 10,0 9,-1 10,0 9,-2 10,-6 9,-3 10,-4 10,-2 9,-1 10,-1 9,2 10,1 10,2 9,-1 10,-1 9,-2 10,-3 9,-1 10,3 10,3 9,5 10,4 9,5 10,5 10,3 9,-3 10,-3 9,-3 10,1 9,7 10,7 10,5 9,2 10,1 9,-1 10,-1 10,-1 9,-10 10,-8 9,-7 10,-5 9,-4 10,-5 10,-6 9,-5 10,-4 9,-5 10,-3 10,1 9,4 10,4 9,4 10,3 9,1 10,-5 10,-6 9,-6 10,-4 9,-4 10,0 10,2 9,2 10,2 9,0 10,-1 9,-2 10,0 10,0 9,1 10,3 9,4 10,5 10,1 9,-2 10,-3 9,-4 10,-2 10,1 9,3 10,4 9,6V1704H128Z"/><path d="M128,1186l9,-1 10,0 10,0 9,-1 10,0 9,0 10,-1 10,-1 9,0 10,-1 10,-1 9,-2 10,-1 9,-2 10,-2 10,-3 9,-2 10,1 10,1 9,2 10,2 9,1 10,0 10,-1 9,0 10,-1 10,-3 9,-3 10,-2 9,-1 10,1 10,0 9,-1 10,-2 10,-1 9,0 10,1 10,2 9,4 10,4 9,3 10,8 10,7 9,2 10,-9 10,-6 9,-5 10,-1 9,-4 10,-1 10,-1 9,0 10,0 10,0 9,-1 10,3 9,5 10,5 10,5 9,6 10,7 10,5 9,3 10,1 9,0 10,3 10,6 9,8 10,3 10,2 9,4 10,5 9,3 10,2 10,1 9,2 10,4 10,5 9,4 10,0 9,-2 10,-3 10,-6 9,-6 10,0 9,0 10,1 9,3 10,4 10,-3 9,-9 10,-12 9,-13 10,-7 9,-8 10,-8 9,-8 10,-4 10,-1 9,0 10,-1 9,-3 10,-6 9,-4 10,-4 10,-2 9,0 10,-1 9,1 10,2 10,1 9,0 10,-1 9,-3 10,-2 10,-1 9,2 10,4 10,4 9,5 10,5 9,4 10,3 10,-3 9,-4 10,-2 9,0 10,7 10,8 9,5 10,2 9,0 10,-1 10,-1 9,-1 10,-9 10,-9 9,-7 10,-4 9,-4 10,-5 10,-6 9,-5 10,-5 9,-5 10,-3 10,1 9,4 10,4 9,4 10,4 10,0 9,-4 10,-6 10,-7 9,-5 10,-4 9,1 10,2 10,2 9,2 10,0 9,-1 10,-2 10,-1 9,0 10,1 10,3 9,5 10,5 9,1 10,-2 10,-3 9,-4 10,-3 9,1 10,2 10,5 9,7V1704H128Z"/><path d="M128,1186l9,-1 10,0 10,0 9,-1 10,0 9,0 10,-1 10,-1 9,0 10,-1 10,-1 9,-2 10,-1 9,-2 10,-2 10,-3 9,-2 10,1 10,1 9,2 10,3 9,0 10,0 10,-1 9,0 10,-1 10,-3 9,-3 10,-2 9,-1 10,1 10,0 9,-1 10,-2 10,-1 9,0 10,1 9,2 10,4 10,4 9,4 10,8 10,6 9,3 10,-11 9,-5 10,-5 10,-1 9,-4 10,-1 10,-1 9,0 10,0 10,0 9,-1 10,2 9,5 10,6 10,5 9,6 10,7 10,6 9,3 10,0 9,0 10,2 10,6 9,8 10,4 10,2 9,4 10,5 9,3 10,2 10,1 9,2 10,4 10,5 9,4 10,0 9,-1 10,-3 10,-6 10,-6 9,-1 10,0 10,1 9,4 10,5 10,-3 9,-9 10,-11 10,-13 9,-7 10,-9 10,-8 9,-7 10,-4 10,-1 9,0 10,0 10,-3 10,-6 9,-4 10,-4 9,-1 10,-1 10,-1 9,1 10,2 10,1 9,0 10,-1 10,-3 9,-3 10,0 10,2 9,3 10,5 9,5 10,5 10,4 9,3 10,-4 10,-4 9,-3 10,1 10,7 9,7 10,6 9,2 10,0 10,-1 9,-1 10,-1 10,-10 9,-9 10,-6 10,-4 9,-4 10,-5 10,-6 9,-5 10,-5 9,-5 10,-4 10,1 9,4 10,5 10,4 9,4 10,0 10,-4 9,-7 10,-7 9,-5 10,-4 10,1 9,2 10,3 10,2 9,0 10,-2 10,-1 9,-2 10,0 10,1 9,2 10,5 9,6 10,0 10,-1 9,-4 10,-4 10,-3 9,1 10,3 10,5 9,6V1704H128Z"/><path d="M128,1195l9,-1 10,0 10,0 9,-1 10,0 10,-1 9,0 10,-1 10,-1 9,-1 10,-1 10,-1 9,-2 10,-2 10,-3 9,-3 10,-2 10,1 9,2 10,3 10,3 9,0 10,0 10,0 9,-1 10,0 10,-4 9,-4 10,-2 10,-1 9,1 10,-1 10,-1 9,-3 10,0 10,-1 9,1 10,2 9,5 10,4 10,5 9,9 10,8 10,3 9,-11 10,-7 10,-5 9,-2 10,-5 10,-2 9,-1 10,0 10,0 9,1 10,-1 10,3 9,5 10,5 10,6 9,6 10,7 10,6 9,2 10,0 10,-1 9,1 10,6 10,8 9,4 10,3 10,4 9,5 10,4 10,1 9,1 10,2 10,4 9,6 10,4 10,2 9,-1 10,-3 9,-5 10,-7 10,-1 9,0 10,0 9,3 10,5 9,-2 10,-9 10,-11 9,-13 10,-8 9,-10 10,-9 9,-8 10,-5 9,-1 10,0 9,-2 10,-3 10,-7 9,-4 10,-4 9,-2 10,-1 10,-1 9,2 10,2 10,2 9,-1 10,-1 10,-3 9,-3 10,-1 9,2 10,4 10,5 9,5 10,5 10,5 9,2 10,-3 10,-5 9,-3 10,1 10,6 9,8 10,6 9,3 10,0 10,-2 9,-1 10,-1 10,-10 9,-9 10,-7 10,-4 9,-3 10,-4 9,-7 10,-4 10,-6 9,-5 10,-5 10,2 9,4 10,5 10,4 9,4 10,1 10,-5 9,-7 10,-7 9,-6 10,-3 10,0 9,3 10,3 10,2 9,0 10,-1 10,-2 9,-2 10,-1 10,1 9,3 10,5 9,6 10,1 10,-2 9,-4 10,-4 10,-3 9,0 10,3 10,6 9,6V1704H128Z"/><path d="M128,1195l9,-1 10,0 10,0 9,-1 10,0 10,-1 9,0 10,-1 10,-1 9,-1 10,-1 10,-1 9,-2 10,-2 10,-3 9,-3 10,-2 10,1 9,2 10,3 10,3 9,1 10,0 9,-1 10,-1 10,0 9,-5 10,-3 10,-2 9,-1 10,1 10,0 9,-2 10,-2 10,-1 9,-1 10,1 10,2 9,4 10,5 10,5 9,9 10,9 10,2 9,-11 10,-7 10,-6 9,-2 10,-4 10,-2 9,-1 10,0 10,1 9,0 10,-1 10,2 9,5 10,6 10,5 9,8 10,7 10,5 9,3 10,-1 10,-1 9,1 10,6 10,7 9,5 10,3 10,4 9,6 10,3 10,1 9,1 10,2 10,4 9,5 10,5 10,2 9,0 10,-3 10,-5 9,-7 10,-1 10,-1 9,1 10,3 10,6 9,-2 10,-9 10,-10 10,-14 9,-8 10,-9 10,-9 9,-9 10,-4 10,-1 9,0 10,-1 10,-3 9,-7 10,-4 10,-4 9,-1 10,-2 10,-1 9,2 10,2 10,2 9,0 10,-2 10,-3 9,-3 10,-1 10,2 9,4 10,5 10,5 9,6 10,4 10,2 9,-4 10,-5 10,-3 9,0 10,7 10,8 9,7 10,2 10,0 9,-2 10,-1 10,-1 9,-11 10,-9 10,-6 9,-4 10,-3 10,-4 9,-6 10,-5 10,-6 9,-6 10,-4 10,2 9,3 10,6 10,4 9,4 10,1 10,-5 9,-7 10,-8 10,-6 9,-3 10,0 10,4 9,3 10,2 10,0 9,-2 10,-2 10,-2 9,-1 10,1 10,3 9,5 10,6 10,1 9,-2 10,-4 10,-4 9,-4 10,1 10,3 10,5 9,7V1704H128Z"/><path d="M128,1203l9,0 10,-1 10,0 9,0 10,-1 10,0 9,-1 10,-1 10,-1 10,0 9,-2 10,-1 10,-2 9,-2 10,-4 10,-3 9,-2 10,1 10,3 10,3 9,3 10,2 10,0 9,-1 10,-1 10,0 9,-5 10,-4 10,-2 10,-1 9,0 10,0 10,-2 9,-3 10,-1 10,-1 9,1 10,2 10,5 10,5 9,6 10,11 10,9 9,4 10,-14 10,-7 9,-6 10,-3 10,-5 10,-3 9,-2 10,1 10,0 9,1 10,0 10,2 9,6 10,5 10,6 10,7 9,7 10,6 10,2 9,-1 10,-2 10,0 9,5 10,8 10,5 10,3 9,5 10,6 10,3 9,2 10,0 10,2 9,4 10,6 10,5 10,3 9,1 10,-2 10,-5 9,-7 10,-1 10,-1 9,0 10,3 10,6 9,-2 10,-8 10,-11 9,-13 10,-8 10,-11 9,-10 10,-9 10,-4 10,-2 9,0 10,-1 10,-4 9,-7 10,-4 10,-4 9,-2 10,-1 10,-2 9,2 10,3 10,1 10,0 9,-1 10,-4 10,-3 9,-1 10,2 10,4 9,5 10,6 10,5 9,4 10,2 10,-5 10,-5 9,-3 10,1 10,7 9,8 10,6 10,3 9,-1 10,-2 10,-1 10,-1 9,-11 10,-9 10,-6 9,-3 10,-3 10,-4 9,-6 10,-5 10,-6 9,-7 10,-4 10,1 10,4 9,6 10,5 10,3 9,1 10,-5 10,-8 9,-7 10,-6 10,-4 10,1 9,3 10,4 10,2 9,0 10,-2 10,-2 9,-2 10,-1 10,0 9,3 10,5 10,6 10,1 9,-2 10,-4 10,-5 9,-3 10,0 10,3 9,6 10,7V1704H128Z"/><path d="M127,1203l10,0 10,-1 10,0 9,0 10,-1 10,0 9,-1 10,-1 10,-1 9,0 10,-2 10,-1 10,-2 9,-2 10,-4 10,-3 9,-2 10,1 10,3 10,3 9,4 10,1 10,0 9,-1 10,-1 10,0 9,-5 10,-4 10,-2 10,-1 9,1 10,-1 10,-2 9,-3 10,-1 10,-1 9,1 10,2 10,5 10,6 9,5 10,11 10,10 9,3 10,-14 10,-8 9,-6 10,-2 10,-6 10,-2 9,-2 10,1 10,1 9,0 10,0 10,2 9,5 10,6 10,6 10,7 9,8 10,5 10,2 9,-1 10,-2 10,0 9,5 10,7 10,5 10,4 9,5 10,6 10,3 9,2 10,0 10,2 9,3 10,7 10,5 10,3 9,1 10,-2 10,-5 9,-6 10,-2 10,-2 9,1 10,3 10,6 9,-1 10,-8 10,-11 9,-13 10,-9 10,-11 9,-10 10,-9 10,-5 9,-1 10,0 10,-1 10,-3 9,-8 10,-4 10,-5 9,-1 10,-2 10,-1 9,2 10,3 10,2 9,-1 10,-1 10,-4 10,-3 9,-1 10,2 10,4 9,5 10,6 10,5 9,5 10,1 10,-4 10,-6 9,-3 10,0 10,7 9,9 10,6 10,3 9,0 10,-3 10,-1 9,-2 10,-10 10,-10 10,-6 9,-3 10,-2 10,-4 9,-6 10,-5 10,-6 9,-7 10,-5 10,2 10,4 9,6 10,5 10,4 9,1 10,-5 10,-8 9,-9 10,-6 10,-3 9,1 10,3 10,4 10,2 9,1 10,-2 10,-3 9,-3 10,-1 10,0 9,3 10,6 10,6 10,1 9,-2 10,-4 10,-5 9,-4 10,1 10,3 9,6 10,7V1704H127Z"/><path d="M127,1211l10,0 10,0 10,-1 9,0 10,0 10,-1 10,-1 9,-1 10,-1 10,0 10,-2 9,-2 10,-2 10,-2 10,-4 9,-3 10,-3 10,2 9,3 10,4 10,4 10,1 9,1 10,-1 10,-1 10,0 9,-5 10,-5 10,-3 10,-1 9,1 10,-1 10,-2 10,-4 9,-1 10,-1 10,1 9,2 10,5 10,7 10,6 9,12 10,11 10,4 10,-15 9,-9 10,-7 10,-2 10,-7 9,-3 10,-2 10,0 10,1 9,1 10,0 10,3 9,5 10,6 10,6 10,8 9,7 10,6 10,2 10,-3 9,-3 10,0 10,4 10,8 9,5 10,4 10,6 10,6 9,3 10,2 10,0 10,1 9,4 10,7 10,6 9,4 10,2 10,-1 10,-5 9,-7 10,-2 10,-2 9,0 10,4 10,6 9,-1 10,-8 10,-10 9,-14 10,-9 10,-12 9,-10 10,-10 10,-5 9,-2 10,0 10,-2 9,-3 10,-9 10,-4 10,-4 9,-2 10,-1 10,-2 9,2 10,3 10,2 10,0 9,-2 10,-3 10,-4 9,0 10,1 10,4 10,6 9,5 10,6 10,4 10,1 9,-5 10,-6 10,-3 9,0 10,8 10,8 10,7 9,3 10,-1 10,-3 10,-1 9,-1 10,-11 10,-10 9,-5 10,-3 10,-2 10,-4 9,-6 10,-5 10,-7 9,-6 10,-6 10,2 10,4 9,6 10,5 10,4 10,1 9,-5 10,-8 10,-9 9,-6 10,-4 10,1 10,4 9,4 10,3 10,0 10,-2 9,-3 10,-3 10,-1 9,0 10,3 10,6 10,6 9,1 10,-2 10,-4 9,-6 10,-4 10,0 10,4 9,6 10,7V1704H127Z"/><path d="M127,1211l10,0 10,0 10,-1 9,0 10,0 10,-1 10,-1 9,-1 10,-1 10,0 10,-2 9,-2 10,-2 10,-2 9,-4 10,-3 10,-3 10,2 9,3 10,4 10,4 10,2 9,0 10,-1 10,-1 10,0 9,-6 10,-4 10,-3 10,0 9,0 10,0 10,-3 9,-3 10,-2 10,-1 10,0 9,2 10,6 10,7 10,6 9,13 10,10 10,4 10,-15 9,-9 10,-7 10,-3 10,-6 9,-3 10,-2 10,1 10,1 9,0 10,0 10,2 9,6 10,6 10,6 10,8 9,8 10,5 10,2 10,-2 9,-4 10,-1 10,5 10,7 9,6 10,5 10,5 10,6 9,4 10,1 10,0 9,1 10,4 10,7 10,6 9,4 10,2 10,0 10,-5 10,-7 9,-2 10,-2 10,0 10,4 10,6 9,0 10,-7 10,-10 10,-14 10,-9 9,-12 10,-11 10,-9 10,-5 10,-1 9,0 10,-1 10,-4 10,-8 10,-5 9,-4 10,-1 10,-1 10,-2 9,2 10,3 10,2 10,0 9,-2 10,-4 10,-3 10,-1 9,2 10,4 10,6 10,5 9,6 10,4 10,1 10,-6 9,-6 10,-4 10,1 10,7 9,9 10,7 10,3 10,-1 9,-3 10,-1 10,-2 10,-11 9,-9 10,-6 10,-3 10,-2 9,-3 10,-6 10,-5 10,-7 10,-7 9,-5 10,1 10,4 10,7 9,5 10,4 10,1 10,-5 9,-9 10,-9 10,-7 10,-3 9,1 10,4 10,5 10,2 9,1 10,-3 10,-3 10,-3 9,-2 10,0 10,3 10,6 9,6 10,1 10,-2 10,-4 9,-6 10,-4 10,0 10,4 9,6 10,8V1704H127Z"/><path d="M127,1219l10,0 10,0 10,-1 9,0 10,0 10,-1 10,-1 10,-1 9,-1 10,-1 10,-1 10,-2 9,-2 10,-3 10,-4 10,-4 10,-3 9,3 10,4 10,4 10,5 9,1 10,0 10,0 10,-1 10,-1 9,-5 10,-5 10,-3 10,-1 9,0 10,-1 10,-2 10,-4 9,-2 10,-1 10,0 10,2 10,6 9,7 10,8 10,13 10,12 9,5 10,-17 10,-9 10,-8 10,-3 9,-8 10,-4 10,-2 10,1 9,1 10,1 10,0 10,3 10,6 9,6 10,6 10,8 10,8 9,6 10,1 10,-3 10,-4 9,-2 10,4 10,8 10,5 10,6 9,6 10,6 10,4 10,1 9,0 10,1 10,4 10,7 10,7 9,5 10,3 10,-1 9,-4 10,-7 10,-3 9,-2 10,0 10,3 10,6 9,0 10,-7 10,-10 9,-14 10,-10 10,-12 9,-12 10,-11 10,-5 9,-2 10,0 10,-2 9,-4 10,-9 10,-4 9,-5 10,-1 10,-1 10,-3 9,3 10,3 10,2 10,0 9,-2 10,-4 10,-4 10,0 9,1 10,4 10,6 10,6 9,6 10,4 10,1 10,-6 9,-6 10,-4 10,0 10,8 9,9 10,7 10,3 10,-1 9,-3 10,-1 10,-2 10,-11 9,-10 10,-6 10,-2 10,-1 9,-4 10,-5 10,-6 10,-7 9,-7 10,-6 10,2 10,4 9,7 10,5 10,4 10,2 9,-6 10,-9 10,-9 10,-7 10,-4 9,2 10,4 10,5 10,3 9,0 10,-2 10,-4 10,-3 9,-2 10,0 10,3 10,6 9,7 10,1 10,-2 10,-5 9,-6 10,-4 10,0 10,3 9,7 10,8V1704H127Z"/><path d="M127,1219l10,0 10,0 10,-1 9,0 10,0 10,-1 10,-1 10,-1 9,-1 10,-1 10,-1 10,-2 9,-2 10,-3 10,-4 10,-4 10,-3 9,3 10,4 10,4 10,5 9,1 10,0 10,0 10,-1 9,-1 10,-5 10,-5 10,-3 10,-1 9,0 10,0 10,-3 10,-4 9,-2 10,-1 10,0 10,2 10,6 9,8 10,7 10,14 10,12 9,4 10,-17 10,-10 10,-7 10,-4 9,-7 10,-4 10,-2 10,1 9,1 10,2 10,-1 10,3 9,5 10,7 10,6 10,9 10,7 9,6 10,1 10,-3 10,-4 9,-2 10,4 10,7 10,6 10,6 9,6 10,6 10,4 10,1 9,0 10,1 10,4 10,7 10,7 9,5 10,3 10,0 10,-4 9,-7 10,-3 10,-2 10,-1 10,4 9,7 10,1 10,-7 10,-10 10,-14 9,-10 10,-13 10,-11 10,-11 10,-5 9,-1 10,0 10,-1 10,-4 10,-9 10,-5 9,-4 10,-1 10,-1 10,-3 9,2 10,4 10,2 10,0 10,-2 9,-4 10,-4 10,0 10,1 9,4 10,6 10,6 10,6 10,4 9,1 10,-7 10,-7 10,-4 9,1 10,8 10,9 10,7 10,3 9,-1 10,-3 10,-2 10,-1 9,-11 10,-10 10,-6 10,-2 10,-1 9,-3 10,-6 10,-6 10,-7 10,-7 9,-6 10,1 10,5 10,7 9,5 10,4 10,2 10,-6 10,-9 9,-10 10,-7 10,-4 10,2 9,5 10,4 10,4 10,0 10,-3 9,-3 10,-4 10,-2 10,0 9,2 10,7 10,6 10,2 10,-3 9,-4 10,-6 10,-5 10,0 9,4 10,6 10,9V1704H127Z"/><path d="M127,1227l10,0 10,-1 10,0 10,0 9,0 10,-1 10,-1 10,-1 10,-1 9,-1 10,-2 10,-2 10,-2 10,-3 9,-4 10,-5 10,-2 10,3 10,4 10,4 9,6 10,1 10,1 10,-1 10,-1 9,0 10,-6 10,-6 10,-3 10,-1 9,0 10,-1 10,-2 10,-5 10,-2 10,-2 9,0 10,3 10,6 10,8 10,8 9,15 10,14 10,4 10,-18 10,-10 9,-9 10,-3 10,-9 10,-4 10,-3 9,1 10,2 10,1 10,0 10,3 10,6 9,7 10,6 10,9 10,8 10,5 9,1 10,-4 10,-5 10,-3 10,4 9,7 10,7 10,6 10,6 10,7 10,4 9,0 10,0 10,1 10,4 10,8 9,8 10,6 10,4 10,0 10,-4 9,-7 10,-3 10,-3 10,0 10,4 9,6 10,2 10,-7 10,-10 10,-13 9,-11 10,-13 10,-13 10,-11 10,-6 9,-1 10,0 10,-2 10,-4 10,-10 9,-4 10,-4 10,-1 10,-1 10,-3 9,2 10,4 10,2 10,0 10,-2 9,-4 10,-4 10,0 10,1 10,4 10,7 9,5 10,6 10,4 10,0 10,-6 9,-8 10,-4 10,1 10,7 10,10 9,7 10,3 10,-1 10,-4 10,-1 9,-1 10,-12 10,-10 10,-5 10,-2 9,-1 10,-3 10,-5 10,-6 10,-7 10,-8 9,-6 10,1 10,5 10,7 10,5 9,5 10,1 10,-6 10,-10 10,-10 9,-7 10,-3 10,1 10,5 10,5 9,4 10,0 10,-3 10,-4 10,-3 10,-3 9,0 10,2 10,7 10,6 10,2 9,-3 10,-5 10,-6 10,-5 10,0 9,4 10,7 10,9V1704H127Z"/><path d="M127,1227l10,0 10,-1 10,0 10,0 9,0 10,-1 10,-1 10,-1 10,-1 9,-1 10,-2 10,-2 10,-2 10,-3 9,-4 10,-5 10,-3 10,4 10,4 9,4 10,6 10,1 10,1 10,-1 10,-1 9,-1 10,-6 10,-5 10,-3 10,-1 9,0 10,0 10,-3 10,-5 10,-2 9,-2 10,0 10,2 10,7 10,8 10,8 9,15 10,14 10,4 10,-18 10,-11 9,-8 10,-4 10,-8 10,-4 10,-3 9,1 10,2 10,1 10,0 10,3 9,5 10,7 10,7 10,9 10,8 10,6 9,0 10,-4 10,-5 10,-3 10,4 9,7 10,7 10,6 10,6 10,7 9,4 10,1 10,-1 10,1 10,4 10,7 9,8 10,7 10,4 10,0 10,-4 9,-7 10,-3 10,-3 10,-1 10,4 9,7 10,2 10,-6 10,-11 10,-13 9,-11 10,-13 10,-13 10,-11 10,-6 9,-1 10,0 10,-2 10,-4 10,-9 9,-5 10,-4 10,-1 10,-2 10,-2 9,2 10,4 10,3 10,-1 10,-2 9,-4 10,-4 10,-1 10,2 10,4 9,6 10,7 10,6 10,3 10,0 10,-6 9,-8 10,-4 10,0 10,8 10,10 9,7 10,4 10,-1 10,-5 10,-1 9,-1 10,-12 10,-10 10,-6 10,-1 9,-1 10,-2 10,-6 10,-6 10,-7 9,-9 10,-6 10,1 10,5 10,8 10,6 9,4 10,1 10,-5 10,-11 10,-10 9,-7 10,-4 10,2 10,5 10,6 9,3 10,1 10,-3 10,-5 10,-4 9,-2 10,-1 10,3 10,7 10,6 10,2 9,-2 10,-5 10,-7 10,-5 10,0 9,4 10,7 10,9V1704H127Z"/><path d="M127,1234l10,0 10,0 10,0 10,-1 9,0 10,-1 10,-1 10,-1 10,-1 10,-1 10,-2 9,-2 10,-2 10,-3 10,-5 10,-5 10,-3 9,4 10,4 10,6 10,5 10,2 10,1 10,-1 9,-1 10,0 10,-7 10,-5 10,-4 10,-1 10,0 9,-1 10,-3 10,-6 10,-2 10,-1 10,-1 9,3 10,7 10,9 10,8 10,17 10,14 10,5 9,-19 10,-12 10,-9 10,-4 10,-9 10,-5 9,-3 10,1 10,2 10,2 10,0 10,3 10,6 9,7 10,7 10,9 10,8 10,6 10,0 9,-5 10,-6 10,-4 10,4 10,7 10,7 10,6 9,7 10,8 10,3 10,1 10,0 10,0 10,4 9,8 10,9 10,7 10,5 10,1 9,-4 10,-7 10,-4 10,-3 10,0 9,4 10,7 10,2 10,-6 10,-10 9,-14 10,-11 10,-14 10,-13 10,-12 9,-6 10,-2 10,0 10,-2 10,-4 9,-11 10,-4 10,-4 10,-1 10,-1 10,-4 9,3 10,4 10,3 10,-1 10,-2 10,-4 9,-4 10,-1 10,2 10,4 10,7 10,6 9,6 10,3 10,0 10,-7 10,-8 10,-4 9,0 10,8 10,10 10,8 10,3 10,-1 9,-5 10,-1 10,-1 10,-12 10,-11 10,-5 10,-1 9,0 10,-3 10,-5 10,-6 10,-8 10,-8 9,-7 10,1 10,5 10,8 10,6 10,4 9,2 10,-6 10,-11 10,-11 10,-7 10,-3 9,2 10,5 10,6 10,3 10,1 10,-3 9,-5 10,-4 10,-2 10,-1 10,2 10,7 9,7 10,1 10,-2 10,-6 10,-6 10,-5 9,0 10,4 10,7 10,9V1704H127Z"/><path d="M127,1234l10,0 10,0 10,0 10,-1 9,0 10,-1 10,-1 10,-1 10,-1 10,-1 10,-2 9,-2 10,-2 10,-3 10,-5 10,-5 10,-3 9,4 10,4 10,6 10,6 10,1 10,1 10,-1 9,-1 10,0 10,-7 10,-6 10,-3 10,-1 9,0 10,-1 10,-3 10,-5 10,-3 10,-2 10,0 9,3 10,7 10,9 10,8 10,17 10,15 9,5 10,-20 10,-12 10,-9 10,-4 10,-9 10,-5 9,-3 10,1 10,2 10,2 10,0 10,3 10,6 9,7 10,7 10,9 10,8 10,6 10,0 9,-5 10,-6 10,-4 10,4 10,7 10,7 10,6 9,8 10,7 10,4 10,0 10,-1 10,1 9,4 10,8 10,9 10,7 10,6 10,1 10,-4 10,-7 10,-4 9,-3 10,0 10,4 10,7 10,3 10,-6 10,-9 10,-14 10,-11 10,-14 10,-13 10,-12 10,-6 10,-1 9,0 10,-1 10,-5 10,-10 10,-4 10,-4 10,0 10,-2 10,-3 9,2 10,4 10,3 10,-1 10,-1 10,-5 10,-4 9,0 10,1 10,4 10,7 10,6 10,6 10,3 10,0 9,-7 10,-9 10,-4 10,1 10,7 10,10 10,8 9,4 10,-2 10,-5 10,-1 10,-1 10,-12 10,-11 10,-5 9,-1 10,0 10,-2 10,-5 10,-6 10,-8 10,-9 9,-7 10,1 10,6 10,8 10,6 10,4 10,1 9,-5 10,-11 10,-12 10,-7 10,-4 10,3 10,5 10,6 9,4 10,0 10,-3 10,-4 10,-5 10,-3 10,-1 9,2 10,7 10,7 10,1 10,-2 10,-6 10,-7 9,-5 10,0 10,5 10,7 10,9V1704H127Z"/><path d="M127,1242l10,-1 10,0 10,0 10,0 10,-1 9,-1 10,-1 10,-1 10,-1 10,-1 10,-2 10,-2 10,-2 10,-4 9,-5 10,-5 10,-3 10,4 10,5 10,6 10,6 10,2 9,1 10,-1 10,-1 10,-1 10,-7 10,-5 10,-4 10,-2 10,1 9,-2 10,-3 10,-6 10,-2 10,-2 10,-1 10,3 10,7 10,10 9,9 10,18 10,16 10,5 10,-21 10,-12 10,-10 10,-4 9,-11 10,-5 10,-4 10,2 10,2 10,2 10,1 10,3 10,6 9,7 10,7 10,9 10,9 10,6 10,0 10,-6 10,-7 10,-5 9,3 10,7 10,8 10,7 10,8 10,7 10,4 10,0 9,0 10,0 10,4 10,8 10,10 10,8 10,6 10,2 9,-4 10,-7 10,-4 10,-4 10,-1 9,4 10,8 10,2 10,-5 10,-10 9,-14 10,-12 10,-14 10,-14 10,-13 9,-6 10,-2 10,0 10,-2 9,-5 10,-10 10,-5 10,-4 10,0 10,-2 10,-4 9,3 10,4 10,3 10,0 10,-2 10,-5 10,-4 9,-1 10,2 10,4 10,7 10,7 10,6 10,3 10,-1 9,-7 10,-9 10,-5 10,1 10,8 10,10 10,8 9,4 10,-2 10,-5 10,-1 10,-1 10,-12 10,-11 9,-5 10,-1 10,0 10,-2 10,-5 10,-6 10,-8 10,-9 9,-7 10,1 10,5 10,8 10,7 10,4 10,2 9,-6 10,-11 10,-12 10,-8 10,-3 10,2 10,6 9,6 10,4 10,1 10,-3 10,-5 10,-5 10,-3 10,-1 9,2 10,7 10,7 10,2 10,-3 10,-5 10,-8 9,-5 10,0 10,4 10,8 10,9V1704H127Z"/><path d="M127,1242l10,-1 10,0 10,0 10,0 10,-1 9,-1 10,-1 10,-1 10,-1 10,-1 10,-2 10,-2 10,-2 10,-4 9,-5 10,-5 10,-3 10,4 10,5 10,6 10,6 10,2 9,1 10,-1 10,-1 10,-1 10,-7 10,-6 10,-3 10,-2 10,1 9,-1 10,-4 10,-6 10,-2 10,-3 10,0 10,3 10,7 9,10 10,9 10,18 10,16 10,5 10,-21 10,-12 10,-10 10,-5 9,-10 10,-5 10,-3 10,1 10,3 10,2 10,0 10,2 10,6 9,8 10,7 10,9 10,9 10,6 10,0 10,-6 10,-7 9,-5 10,3 10,7 10,8 10,7 10,8 10,7 10,4 10,0 9,0 10,0 10,4 10,8 10,10 10,8 10,7 10,2 10,-4 10,-7 9,-4 10,-4 10,-1 10,5 10,8 10,3 10,-5 10,-10 10,-13 10,-13 10,-14 10,-14 10,-13 9,-6 10,-1 10,0 10,-1 10,-5 10,-10 10,-5 10,-4 10,0 10,-2 10,-4 9,3 10,4 10,3 10,0 10,-2 10,-5 10,-4 10,0 10,1 9,5 10,7 10,6 10,6 10,3 10,-1 10,-8 10,-9 10,-4 9,0 10,9 10,9 10,9 10,4 10,-2 10,-6 10,-1 10,-1 10,-12 9,-11 10,-5 10,0 10,0 10,-1 10,-6 10,-6 10,-8 10,-10 9,-7 10,1 10,6 10,8 10,7 10,4 10,2 10,-6 10,-12 9,-12 10,-8 10,-3 10,2 10,6 10,7 10,4 10,1 10,-4 10,-5 9,-5 10,-3 10,-2 10,2 10,7 10,8 10,1 10,-3 10,-5 9,-8 10,-5 10,0 10,5 10,7 10,10V1704H127Z"/><path d="M127,1249l10,-1 10,0 10,0 10,0 10,-1 10,-1 10,-1 9,-1 10,-1 10,-1 10,-2 10,-2 10,-3 10,-3 10,-6 10,-5 10,-3 10,4 10,5 10,6 9,7 10,3 10,0 10,-1 10,0 10,-1 10,-7 10,-7 10,-4 10,-1 10,0 10,-1 9,-4 10,-7 10,-2 10,-2 10,-1 10,3 10,7 10,11 10,10 10,19 10,17 10,6 10,-23 9,-13 10,-10 10,-5 10,-11 10,-6 10,-4 10,2 10,2 10,3 10,0 10,3 10,6 10,8 9,7 10,10 10,8 10,6 10,0 10,-6 10,-8 10,-6 10,3 10,7 10,7 10,8 9,8 10,8 10,4 10,1 10,-2 10,1 10,4 10,8 10,11 10,9 10,7 10,3 10,-3 9,-7 10,-5 10,-4 10,-1 10,4 10,9 10,3 10,-4 10,-10 10,-13 10,-13 10,-15 9,-15 10,-13 10,-6 10,-2 10,0 10,-1 10,-6 10,-10 10,-5 10,-4 10,1 10,-2 10,-4 9,2 10,5 10,3 10,-1 10,-2 10,-5 10,-4 10,1 10,1 10,4 10,7 10,7 9,6 10,3 10,-1 10,-9 10,-9 10,-5 10,1 10,8 10,10 10,9 10,3 10,-2 10,-6 9,-1 10,0 10,-13 10,-11 10,-5 10,0 10,1 10,-1 10,-5 10,-7 10,-8 10,-10 10,-7 9,1 10,6 10,8 10,6 10,5 10,2 10,-6 10,-12 10,-13 10,-8 10,-3 10,3 9,6 10,6 10,5 10,1 10,-4 10,-5 10,-5 10,-4 10,-2 10,2 10,7 10,7 10,2 9,-3 10,-6 10,-7 10,-6 10,0 10,5 10,8 10,10V1704H127Z"/><path d="M127,1249l10,-1 10,0 10,0 10,0 10,-1 10,-1 9,-1 10,-1 10,-1 10,-1 10,-2 10,-2 10,-3 10,-3 10,-6 10,-5 10,-4 10,5 10,5 9,6 10,7 10,3 10,0 10,-1 10,0 10,-1 10,-8 10,-6 10,-4 10,-1 10,0 10,-1 9,-4 10,-6 10,-3 10,-3 10,0 10,3 10,7 10,11 10,10 10,19 10,17 10,6 10,-23 9,-13 10,-10 10,-6 10,-11 10,-5 10,-4 10,2 10,3 10,2 10,0 10,3 10,6 9,8 10,7 10,10 10,9 10,6 10,-1 10,-6 10,-8 10,-6 10,3 10,6 10,8 10,8 9,9 10,8 10,3 10,1 10,-2 10,0 10,5 10,8 10,11 10,9 10,7 10,3 10,-3 9,-7 10,-5 10,-4 10,-1 10,4 10,8 10,4 10,-4 10,-9 10,-14 10,-13 10,-16 9,-14 10,-13 10,-7 10,-1 10,0 10,-1 10,-5 10,-11 10,-5 10,-4 10,1 10,-2 9,-5 10,3 10,5 10,3 10,0 10,-2 10,-5 10,-5 10,0 10,2 10,4 10,7 10,7 9,6 10,3 10,-1 10,-9 10,-9 10,-5 10,0 10,9 10,10 10,9 10,4 10,-2 9,-7 10,-1 10,-1 10,-12 10,-11 10,-5 10,0 10,1 10,-1 10,-5 10,-6 10,-9 10,-10 9,-7 10,0 10,6 10,9 10,7 10,4 10,2 10,-6 10,-12 10,-13 10,-8 10,-3 10,2 9,7 10,7 10,4 10,1 10,-3 10,-6 10,-6 10,-3 10,-2 10,2 10,7 10,7 9,2 10,-3 10,-6 10,-7 10,-6 10,0 10,5 10,8 10,10V1704H127Z"/><path d="M127,1255l10,0 10,0 10,-1 10,0 10,0 10,-1 10,-1 10,-1 10,-1 10,-2 10,-2 10,-2 9,-3 10,-4 10,-5 10,-6 10,-3 10,4 10,6 10,7 10,7 10,3 10,0 10,0 10,-1 10,-1 10,-8 10,-6 10,-5 10,-1 10,0 10,-2 10,-4 10,-6 10,-3 9,-3 10,0 10,2 10,9 10,10 10,11 10,20 10,18 10,7 10,-24 10,-14 10,-11 10,-5 10,-12 10,-6 10,-5 10,2 10,3 10,3 10,0 10,3 10,7 10,8 10,7 9,10 10,9 10,6 10,-1 10,-7 10,-9 10,-6 10,2 10,7 10,8 10,9 10,8 10,8 10,4 10,0 10,-1 10,0 10,4 10,9 10,11 10,11 10,8 9,3 10,-3 10,-7 10,-6 10,-4 10,-1 10,5 10,8 10,5 10,-5 10,-9 10,-14 10,-13 9,-16 10,-15 10,-14 10,-6 10,-2 10,0 10,-1 10,-6 10,-11 10,-5 10,-4 10,1 10,-2 9,-4 10,2 10,5 10,4 10,-1 10,-2 10,-5 10,-5 10,1 10,1 10,5 10,7 10,7 10,6 10,3 10,-2 10,-9 10,-10 10,-5 10,1 9,8 10,11 10,9 10,4 10,-3 10,-6 10,-1 10,-1 10,-12 10,-12 10,-4 10,0 10,1 10,-1 10,-5 10,-6 10,-9 10,-10 10,-8 9,1 10,6 10,9 10,7 10,4 10,2 10,-6 10,-13 10,-13 10,-8 10,-3 10,3 10,6 10,8 10,4 10,1 10,-3 10,-6 10,-6 10,-3 9,-3 10,2 10,7 10,7 10,2 10,-3 10,-6 10,-8 10,-5 10,-1 10,6 10,8 10,10V1704H127Z"/><path d="M127,1255l10,0 10,0 10,-1 10,0 10,0 10,-1 10,-1 10,-1 10,-1 10,-2 10,-2 9,-2 10,-3 10,-3 10,-6 10,-6 10,-3 10,4 10,6 10,7 10,7 10,3 10,1 10,-1 10,-1 10,-1 10,-8 10,-6 10,-5 10,-1 10,0 10,-1 10,-4 10,-7 10,-3 9,-3 10,-1 10,3 10,8 10,11 10,11 10,21 10,18 10,6 10,-24 10,-14 10,-11 10,-6 10,-11 10,-6 10,-5 10,2 10,3 10,3 10,0 10,3 10,6 10,8 9,8 10,10 10,9 10,6 10,-1 10,-7 10,-9 10,-6 10,2 10,7 10,8 10,9 10,8 10,9 10,4 10,0 10,-2 10,0 10,4 10,9 10,11 10,11 10,8 9,3 10,-3 10,-7 10,-6 10,-4 10,-1 10,4 10,9 10,5 10,-4 10,-9 10,-14 9,-14 10,-16 10,-15 10,-14 10,-6 10,-2 10,0 10,-1 10,-5 10,-12 10,-5 10,-4 10,1 9,-2 10,-4 10,2 10,5 10,4 10,-1 10,-2 10,-5 10,-5 10,1 10,1 10,4 10,8 10,7 10,6 10,3 10,-2 10,-9 10,-10 10,-5 9,1 10,8 10,11 10,9 10,4 10,-2 10,-7 10,-1 10,-1 10,-12 10,-12 10,-5 10,1 10,1 10,0 10,-5 10,-7 10,-9 10,-10 9,-8 10,1 10,6 10,9 10,7 10,4 10,3 10,-6 10,-13 10,-14 10,-8 10,-4 10,4 10,6 10,8 10,5 10,0 10,-3 10,-6 10,-6 9,-4 10,-2 10,2 10,7 10,7 10,2 10,-3 10,-6 10,-8 10,-6 10,0 10,5 10,9 10,10V1704H127Z"/><path d="M127,1262l10,-1 10,0 10,0 10,0 10,-1 10,-1 10,-1 10,-1 10,-1 10,-1 10,-3 10,-2 10,-3 10,-4 10,-6 10,-6 10,-3 10,5 10,6 10,7 10,8 10,3 10,0 10,0 10,-1 10,-1 10,-8 10,-7 10,-5 10,-1 10,0 10,-2 10,-4 10,-7 10,-3 10,-3 10,-1 10,3 10,8 10,12 10,11 10,22 10,19 10,6 10,-25 10,-15 10,-11 10,-6 10,-12 10,-7 10,-5 10,2 10,4 10,3 10,0 10,3 10,7 10,8 10,8 10,10 10,9 10,6 10,-1 10,-8 10,-9 10,-8 10,2 10,7 10,9 10,9 10,9 10,8 10,4 10,0 10,-1 10,-1 10,5 10,9 10,12 10,11 9,9 10,4 10,-3 10,-7 10,-6 10,-5 10,-1 10,5 10,9 10,5 10,-4 10,-9 9,-14 10,-14 10,-16 10,-16 10,-14 10,-7 10,-1 10,-1 10,-1 10,-6 10,-12 10,-4 10,-4 9,1 10,-2 10,-5 10,3 10,5 10,3 10,0 10,-2 10,-5 10,-5 10,1 10,1 10,4 10,8 10,7 10,6 10,3 10,-2 10,-10 10,-10 10,-6 10,1 10,9 10,11 10,9 10,4 10,-3 10,-7 10,-1 10,0 10,-13 10,-11 10,-5 10,1 10,2 10,-1 10,-5 10,-6 10,-9 10,-11 10,-8 10,1 10,6 9,9 10,7 10,4 10,3 10,-6 10,-14 10,-13 10,-9 10,-3 10,3 10,7 10,8 10,5 10,1 10,-4 10,-6 10,-6 10,-4 10,-3 10,2 10,7 10,7 10,2 10,-3 10,-7 10,-8 10,-5 10,-1 10,6 10,9 10,10V1704H127Z"/><path d="M127,1262l10,-1 10,0 10,0 10,0 10,-1 10,-1 10,-1 10,-1 10,-1 10,-1 10,-3 10,-2 10,-3 10,-4 10,-6 10,-6 10,-3 10,5 10,6 10,7 10,8 10,3 10,0 10,0 10,-1 10,-1 10,-8 10,-7 10,-5 10,-1 10,0 10,-2 10,-4 10,-7 10,-4 10,-2 10,-1 10,3 10,8 10,12 10,11 10,22 10,19 10,6 10,-25 10,-15 10,-11 10,-6 10,-13 10,-6 10,-4 10,2 10,3 10,3 10,0 10,3 10,7 10,8 10,8 10,10 10,9 10,6 10,-1 10,-8 10,-9 10,-8 10,2 10,7 10,8 10,10 10,9 10,9 10,3 10,0 9,-1 10,-1 10,5 10,9 10,11 10,12 11,9 10,4 10,-2 10,-7 10,-6 10,-5 10,-1 10,5 10,10 10,5 10,-3 10,-9 10,-14 10,-13 10,-17 10,-16 10,-14 10,-6 10,-1 10,0 10,-2 10,-5 10,-12 10,-4 10,-4 10,2 10,-2 10,-5 10,2 10,5 10,4 10,-1 10,-2 10,-5 10,-5 10,2 10,1 10,4 10,8 10,7 10,6 10,2 10,-2 11,-10 10,-11 10,-5 10,1 10,9 10,11 10,9 10,4 10,-3 10,-8 10,0 10,0 10,-13 10,-12 10,-4 10,1 10,2 10,0 10,-5 10,-6 10,-10 10,-11 10,-8 10,1 10,6 10,10 10,7 10,4 10,3 10,-6 10,-14 10,-15 10,-8 10,-3 10,3 10,7 10,8 10,5 10,1 10,-3 10,-6 10,-7 10,-4 10,-3 10,1 10,7 10,8 10,1 10,-3 10,-7 10,-8 10,-5 10,-1 10,7 10,8 10,11V1704H127Z"/><path d="M127,1268l10,-1 10,0 10,0 10,0 10,-1 10,-1 10,-1 10,-1 10,-1 10,-1 10,-3 10,-2 10,-3 10,-4 10,-6 10,-7 10,-3 10,5 10,6 10,8 11,8 10,3 10,1 10,-1 10,-1 10,-1 10,-8 10,-7 10,-5 10,-2 10,0 10,-1 10,-5 10,-8 10,-3 10,-3 10,-1 10,3 10,9 10,12 10,12 10,23 10,19 10,7 10,-26 10,-15 10,-12 10,-6 10,-14 10,-7 10,-5 10,3 11,3 10,3 10,1 10,3 10,7 10,8 10,8 10,10 10,10 10,6 10,-2 10,-8 10,-10 10,-8 10,1 10,7 10,9 10,10 10,9 10,9 10,4 10,0 10,-2 10,-1 10,5 10,9 10,13 10,12 10,10 10,4 10,-2 10,-8 10,-6 10,-5 10,-1 10,4 10,10 10,6 10,-4 9,-8 10,-14 10,-15 10,-17 10,-16 10,-15 10,-7 10,-1 10,-1 10,-1 9,-6 10,-12 10,-5 10,-4 10,2 10,-2 10,-6 10,3 10,6 10,3 10,0 10,-2 10,-6 10,-5 10,1 10,2 10,4 10,8 10,7 10,6 10,3 10,-3 10,-10 10,-11 10,-5 10,1 10,9 10,11 10,9 11,4 10,-3 10,-7 10,-1 10,0 10,-13 10,-12 10,-4 10,1 10,2 10,0 10,-5 10,-6 10,-10 10,-11 10,-8 10,0 10,7 10,10 10,7 10,4 10,3 10,-6 10,-14 10,-15 10,-8 10,-4 10,4 10,7 10,8 10,6 10,1 10,-4 10,-6 10,-7 10,-4 10,-3 10,1 10,7 10,8 10,1 10,-3 10,-7 10,-8 10,-6 10,0 10,6 10,9 10,11V1704H127Z"/><path d="M127,1268l10,-1 10,0 10,0 10,0 10,-1 10,-1 10,-1 10,-1 10,-1 10,-1 10,-3 10,-2 10,-3 10,-4 10,-6 10,-7 10,-3 10,5 10,6 10,8 10,8 11,3 10,1 10,-1 10,-1 10,-1 10,-8 10,-7 10,-5 10,-2 10,0 10,-1 10,-5 10,-8 10,-3 10,-3 10,-1 10,3 10,9 10,12 10,12 10,23 10,20 10,7 10,-27 10,-15 10,-12 10,-7 10,-13 10,-7 10,-5 10,3 10,3 11,3 10,1 10,3 10,7 10,8 10,8 10,11 10,9 10,6 10,-1 10,-9 10,-10 10,-9 10,2 10,7 10,9 10,10 10,9 10,9 10,4 10,0 10,-2 10,-1 10,5 10,9 10,13 10,12 10,10 10,5 10,-2 10,-8 11,-6 10,-5 10,-1 10,5 10,10 10,6 10,-3 10,-8 10,-14 10,-14 10,-18 10,-16 10,-15 10,-6 10,-1 10,0 10,-2 10,-5 10,-12 10,-5 10,-3 10,2 10,-2 10,-6 10,3 10,5 10,4 11,-1 10,-2 10,-5 10,-5 10,1 10,2 10,4 10,8 10,7 10,6 10,3 10,-3 10,-10 10,-12 10,-5 10,1 10,9 10,11 10,9 10,5 10,-4 10,-8 10,0 10,0 10,-13 10,-12 10,-4 10,1 10,3 10,0 11,-5 10,-6 10,-10 10,-11 10,-9 10,1 10,7 10,10 10,6 10,5 10,3 10,-6 10,-15 10,-15 10,-9 10,-3 10,4 10,8 10,8 10,5 10,1 10,-3 10,-7 10,-7 10,-4 10,-3 10,0 10,8 10,7 10,2 10,-4 11,-7 10,-8 10,-6 10,0 10,7 10,9 10,11V1704H127Z"/><path d="M127,1273l10,0 10,0 10,0 10,-1 10,0 10,-1 10,-1 10,-1 10,-2 10,-1 11,-2 10,-3 10,-3 10,-4 10,-7 10,-6 10,-4 10,6 10,7 10,8 10,8 10,3 10,1 10,-1 10,0 11,-1 10,-9 10,-8 10,-5 10,-2 10,0 10,-1 10,-5 10,-8 10,-4 10,-3 10,-1 10,3 10,9 11,13 10,13 10,23 10,21 10,7 10,-27 10,-16 10,-12 10,-7 10,-14 10,-8 10,-5 10,2 10,4 10,3 11,2 10,2 10,7 10,9 10,8 10,11 10,9 10,6 10,-1 10,-9 10,-11 10,-9 10,1 10,7 10,9 11,10 10,10 10,9 10,4 10,0 10,-2 10,-1 10,5 10,10 10,12 10,14 10,10 10,6 10,-2 10,-7 10,-7 10,-5 11,-1 10,5 10,10 10,7 10,-3 10,-8 10,-14 10,-15 10,-17 10,-17 10,-15 10,-7 10,-1 10,0 10,-2 10,-6 10,-12 10,-4 10,-4 10,3 10,-2 10,-6 10,3 10,5 11,4 10,-1 10,-2 10,-5 10,-5 10,2 10,1 10,4 10,9 10,7 10,6 10,1 10,-2 10,-11 10,-12 10,-5 11,1 10,9 10,11 10,10 10,4 10,-4 10,-8 10,-1 10,1 10,-13 10,-12 10,-4 10,2 10,2 10,1 10,-5 11,-6 10,-10 10,-12 10,-8 10,0 10,7 10,10 10,7 10,4 10,3 10,-5 10,-16 10,-15 10,-9 10,-3 10,4 10,8 11,8 10,6 10,1 10,-3 10,-7 10,-7 10,-4 10,-4 10,0 10,7 10,8 10,1 10,-4 10,-7 10,-8 10,-6 11,0 10,7 10,10 10,11V1704H127Z"/><path d="M127,1273l10,0 10,0 10,0 10,-1 10,0 10,-1 10,-1 10,-1 10,-2 10,-1 11,-2 10,-3 10,-3 10,-4 10,-7 10,-6 10,-4 10,6 10,7 10,8 10,8 10,3 10,1 10,-1 10,0 11,-1 10,-9 10,-8 10,-5 10,-2 10,0 10,-1 10,-5 10,-8 10,-4 10,-3 10,-1 10,3 10,9 10,13 11,13 10,23 10,21 10,7 10,-27 10,-16 10,-13 10,-6 10,-14 10,-8 10,-5 10,3 10,3 10,4 10,1 11,2 10,7 10,9 10,8 10,11 10,10 10,6 10,-2 10,-9 10,-11 10,-9 10,1 10,7 10,9 11,10 10,10 10,9 10,4 10,0 10,-2 10,-1 10,5 10,9 10,13 10,14 10,10 10,6 10,-2 10,-7 10,-7 10,-5 10,-2 11,6 10,10 10,7 10,-3 10,-8 10,-14 10,-14 10,-19 10,-16 10,-16 10,-6 10,-1 10,0 10,-2 10,-5 10,-13 10,-4 10,-4 10,3 10,-2 10,-6 10,3 10,5 11,4 10,-1 10,-2 10,-5 10,-5 10,1 10,2 10,4 10,9 10,7 10,6 10,2 10,-3 10,-11 10,-12 10,-6 10,2 11,9 10,11 10,10 10,4 10,-4 10,-8 10,-1 10,1 10,-13 10,-12 10,-4 10,2 10,3 10,0 10,-4 10,-7 11,-10 10,-12 10,-8 10,0 10,7 10,10 10,7 10,5 10,3 10,-6 10,-16 10,-15 10,-9 10,-3 10,4 10,8 11,9 10,6 10,1 10,-4 10,-7 10,-7 10,-5 10,-3 10,0 10,7 10,8 10,1 10,-3 10,-7 10,-9 10,-6 10,0 11,7 10,10 10,11V1704H127Z"/><path d="M127,1279l10,0 10,-1 10,0 10,0 10,0 10,-1 10,-2 11,-1 10,-1 10,-2 10,-2 10,-3 10,-3 10,-4 10,-7 10,-7 10,-4 11,6 10,8 10,8 10,9 10,3 10,1 10,-1 10,-1 10,-1 11,-9 10,-8 10,-5 10,-2 10,0 10,-2 10,-5 10,-8 10,-4 10,-3 11,-1 10,3 10,9 10,14 10,13 10,24 10,22 10,8 10,-29 11,-17 10,-12 10,-7 10,-15 10,-8 10,-6 10,3 10,4 10,4 10,1 11,3 10,7 10,9 10,8 10,11 10,10 10,5 10,-1 10,-10 11,-12 10,-9 10,1 10,6 10,10 10,11 10,10 10,9 10,4 10,0 11,-2 10,-1 10,5 10,10 10,13 10,14 10,11 10,6 10,-1 10,-7 10,-7 10,-6 10,-1 10,5 10,11 11,7 10,-2 10,-8 10,-14 10,-15 10,-18 10,-18 10,-15 10,-7 10,-1 10,0 10,-2 10,-6 10,-12 10,-5 10,-3 10,4 10,-3 10,-6 10,2 11,6 10,4 10,-1 10,-2 10,-6 10,-4 10,2 10,1 10,5 10,8 10,7 10,6 11,2 10,-4 10,-11 10,-12 10,-6 10,2 10,9 10,11 10,10 10,4 10,-4 11,-9 10,0 10,1 10,-13 10,-12 10,-4 10,2 10,3 10,1 10,-4 10,-7 11,-10 10,-12 10,-9 10,0 10,8 10,10 10,7 10,4 10,4 10,-6 10,-16 11,-16 10,-9 10,-3 10,4 10,9 10,8 10,7 10,1 10,-4 10,-7 10,-7 10,-5 11,-4 10,0 10,7 10,7 10,2 10,-4 10,-7 10,-9 10,-5 10,-1 10,8 11,10 10,11V1704H127Z"/><path d="M127,1279l10,0 10,-1 10,0 10,0 10,0 10,-1 10,-2 11,-1 10,-1 10,-2 10,-2 10,-3 10,-3 10,-4 10,-7 10,-7 10,-4 11,6 10,8 10,8 10,9 10,3 10,1 10,-1 10,-1 10,-1 11,-9 10,-8 10,-5 10,-2 10,0 10,-1 10,-6 10,-8 10,-4 10,-3 11,-1 10,3 10,9 10,14 10,13 10,24 10,22 10,8 10,-29 11,-17 10,-13 10,-7 10,-14 10,-8 10,-5 10,2 10,4 10,4 10,1 11,3 10,7 10,9 10,8 10,11 10,10 10,6 10,-2 10,-10 10,-12 11,-9 10,1 10,6 10,10 10,11 10,10 10,9 10,5 10,-1 11,-2 10,-1 10,4 10,10 10,14 10,14 10,12 10,6 11,-1 10,-7 10,-7 10,-5 10,-2 10,6 10,11 11,8 10,-2 10,-8 10,-14 10,-15 10,-18 11,-17 10,-16 10,-6 10,-1 10,0 10,-1 11,-6 10,-12 10,-4 10,-3 10,4 10,-3 10,-7 10,3 11,6 10,3 10,0 10,-2 10,-6 10,-4 10,2 10,1 10,5 11,9 10,7 10,5 10,2 10,-4 10,-11 10,-13 10,-5 11,1 10,9 10,11 10,11 10,4 10,-4 10,-10 10,0 10,2 11,-13 10,-13 10,-4 10,3 10,3 10,1 10,-4 10,-7 11,-10 10,-12 10,-9 10,0 10,8 10,11 10,6 10,4 10,4 11,-6 10,-16 10,-17 10,-9 10,-2 10,4 10,8 10,9 11,7 10,1 10,-4 10,-7 10,-7 10,-5 10,-5 10,0 10,7 11,7 10,1 10,-3 10,-8 10,-8 10,-6 10,0 10,8 11,10 10,12V1704H127Z"/><path d="M127,1284l10,0 10,-1 10,0 10,0 10,0 10,-1 11,-2 10,-1 10,-1 10,-2 10,-2 10,-3 10,-3 11,-5 10,-7 10,-7 10,-4 10,7 10,7 10,9 11,9 10,4 10,1 10,-1 10,-1 10,-1 10,-10 11,-8 10,-5 10,-2 10,0 10,-2 10,-5 10,-9 11,-4 10,-3 10,-1 10,3 10,9 10,14 10,14 11,25 10,22 10,8 10,-29 10,-17 10,-13 10,-8 11,-15 10,-8 10,-6 10,2 10,5 10,3 10,2 11,3 10,7 10,9 10,9 10,11 10,9 10,6 11,-2 10,-10 10,-12 10,-10 10,1 10,6 10,10 11,11 10,11 10,9 10,4 10,0 10,-3 10,0 11,4 10,10 10,14 10,15 10,12 10,6 10,-1 10,-7 10,-7 10,-5 10,-2 10,5 10,11 10,8 10,-2 10,-8 11,-14 10,-15 10,-19 10,-17 10,-16 10,-7 10,-2 10,1 10,-2 10,-6 10,-13 10,-4 10,-3 10,4 10,-3 10,-7 10,3 11,6 10,4 10,-1 10,-2 10,-6 10,-4 10,2 10,1 10,5 11,9 10,7 10,6 10,1 10,-4 10,-11 10,-13 10,-6 11,2 10,9 10,11 10,11 10,4 10,-4 10,-10 10,0 10,2 11,-13 10,-13 10,-4 10,3 10,3 10,1 10,-4 10,-6 11,-11 10,-12 10,-9 10,0 10,7 10,12 10,7 10,3 10,4 11,-6 10,-16 10,-17 10,-9 10,-3 10,5 10,8 10,10 10,6 11,1 10,-4 10,-7 10,-8 10,-4 10,-5 10,0 10,7 11,7 10,2 10,-4 10,-8 10,-8 10,-6 10,0 10,8 10,10 11,12V1704H127Z"/><path d="M127,1284l10,0 10,-1 10,0 10,0 10,0 10,-1 11,-2 10,-1 10,-1 10,-2 10,-2 10,-3 10,-3 11,-5 10,-7 10,-7 10,-4 10,6 10,8 10,9 11,9 10,4 10,1 10,-1 10,-1 10,-1 10,-10 11,-8 10,-5 10,-2 10,0 10,-2 10,-5 10,-9 11,-4 10,-4 10,-1 10,3 10,10 10,14 10,14 11,25 10,23 10,8 10,-30 10,-17 10,-14 10,-7 11,-15 10,-8 10,-6 10,3 10,4 10,4 10,1 11,3 10,7 10,9 10,9 10,11 10,10 10,6 11,-3 10,-10 10,-12 10,-10 10,0 10,7 10,10 11,11 10,11 10,9 10,4 10,0 10,-3 10,-1 11,5 10,10 10,14 10,15 10,13 10,6 10,-1 11,-7 10,-7 10,-5 10,-2 10,6 10,11 10,9 11,-2 10,-8 10,-13 10,-15 10,-19 10,-18 11,-16 10,-6 10,-1 10,0 10,-1 10,-6 11,-13 10,-4 10,-2 10,4 10,-2 10,-8 10,3 11,6 10,4 10,-1 10,-2 10,-6 10,-4 10,3 11,1 10,4 10,9 10,7 10,6 10,1 10,-4 11,-12 10,-13 10,-5 10,1 10,10 10,11 10,10 11,5 10,-5 10,-10 10,1 10,1 10,-13 10,-13 11,-4 10,4 10,3 10,2 10,-4 10,-7 11,-11 10,-12 10,-9 10,0 10,8 10,11 10,7 11,4 10,3 10,-5 10,-17 10,-17 10,-9 10,-3 11,4 10,9 10,10 10,6 10,2 10,-4 10,-7 11,-8 10,-5 10,-5 10,-1 10,7 10,7 10,1 11,-4 10,-7 10,-9 10,-5 10,0 10,8 10,10 11,12V1704H127Z"/><path d="M127,1289l10,-1 10,0 10,0 10,0 10,0 11,-1 10,-2 10,-1 10,-2 10,-1 11,-3 10,-3 10,-3 10,-5 10,-7 10,-7 11,-4 10,7 10,7 10,10 10,9 10,4 11,1 10,-1 10,-1 10,-1 10,-10 11,-8 10,-5 10,-3 10,0 10,-2 10,-5 11,-9 10,-4 10,-4 10,-1 10,3 11,10 10,14 10,14 10,26 10,24 10,8 11,-31 10,-17 10,-14 10,-8 10,-15 10,-9 11,-6 10,3 10,4 10,4 10,2 11,3 10,7 10,9 10,9 10,11 10,10 11,6 10,-2 10,-11 10,-13 10,-11 11,1 10,6 10,10 10,12 10,11 10,10 11,4 10,-1 10,-2 10,-1 10,5 10,10 11,14 10,16 10,13 10,7 10,-1 10,-7 11,-7 10,-5 10,-2 10,6 10,11 10,9 11,-1 10,-8 10,-13 10,-15 10,-19 10,-18 10,-17 11,-6 10,-1 10,0 10,-1 10,-6 10,-13 11,-4 10,-2 10,5 10,-3 10,-8 10,3 11,6 10,3 10,0 10,-2 10,-6 10,-4 11,3 10,1 10,5 10,9 10,7 11,5 10,2 10,-5 10,-12 10,-13 10,-6 11,2 10,9 10,12 10,10 10,4 10,-5 11,-10 10,1 10,2 10,-13 10,-13 10,-4 11,3 10,4 10,2 10,-4 10,-6 11,-11 10,-13 10,-9 10,0 10,8 10,11 11,7 10,4 10,4 10,-6 10,-17 10,-17 11,-10 10,-2 10,4 10,10 10,9 10,7 11,1 10,-3 10,-8 10,-8 10,-5 10,-5 11,-2 10,7 10,7 10,1 10,-4 11,-7 10,-9 10,-6 10,1 10,9 10,10 11,12V1704H127Z"/><path d="M127,1289l10,-1 10,0 10,0 10,0 10,0 11,-1 10,-2 10,-1 10,-2 10,-1 10,-3 11,-3 10,-3 10,-5 10,-7 10,-7 11,-4 10,6 10,8 10,10 10,9 10,4 11,1 10,-1 10,-1 10,-1 10,-10 11,-8 10,-5 10,-3 10,0 10,-2 10,-5 11,-9 10,-4 10,-4 10,-1 10,3 10,10 11,14 10,14 10,27 10,23 10,8 11,-31 10,-17 10,-14 10,-8 10,-16 10,-8 11,-6 10,3 10,4 10,4 10,2 11,2 10,8 10,9 10,9 10,11 10,10 11,6 10,-2 10,-11 10,-13 10,-11 10,1 11,6 10,10 10,12 10,11 10,10 11,4 10,-1 10,-2 10,-1 10,4 10,11 11,14 10,16 10,13 10,7 10,-1 10,-7 11,-7 10,-6 10,-1 10,6 10,11 10,9 11,-1 10,-7 10,-14 10,-15 10,-20 10,-18 10,-16 11,-7 10,0 10,0 10,-1 10,-6 10,-13 11,-4 10,-2 10,5 10,-3 10,-8 10,3 11,6 10,4 10,-1 10,-2 10,-6 10,-4 11,3 10,1 10,5 10,9 10,7 10,6 11,1 10,-5 10,-12 10,-13 10,-6 11,2 10,9 10,12 10,10 10,4 10,-5 11,-10 10,1 10,2 10,-13 10,-13 10,-4 11,3 10,5 10,1 10,-4 10,-6 10,-11 11,-13 10,-9 10,0 10,8 10,11 11,7 10,4 10,4 10,-6 10,-17 10,-18 11,-9 10,-2 10,4 10,9 10,10 10,7 11,2 10,-4 10,-8 10,-8 10,-5 10,-5 11,-2 10,7 10,7 10,2 10,-5 10,-7 11,-9 10,-6 10,0 10,10 10,10 11,12V1704H127Z"/><path d="M126,1293l11,0 10,0 10,-1 10,0 11,0 10,-1 10,-1 10,-2 10,-1 11,-2 10,-2 10,-4 10,-3 11,-5 10,-7 10,-7 10,-4 10,6 11,8 10,10 10,10 10,3 10,2 11,-1 10,-1 10,-1 10,-10 11,-9 10,-5 10,-3 10,0 10,-2 11,-6 10,-9 10,-4 10,-4 10,-1 11,3 10,10 10,15 10,14 11,27 10,24 10,9 10,-32 10,-18 11,-14 10,-8 10,-16 10,-9 10,-6 11,3 10,4 10,4 10,2 11,3 10,8 10,9 10,9 10,11 11,10 10,6 10,-2 10,-12 10,-13 11,-11 10,0 10,6 10,11 11,12 10,11 10,10 10,4 10,0 11,-3 10,-1 10,5 10,10 10,15 11,16 10,14 10,7 10,0 10,-7 11,-7 10,-6 10,-2 10,6 10,12 10,10 10,-1 11,-8 10,-13 10,-16 10,-19 10,-18 10,-17 11,-7 10,-1 10,1 10,-1 10,-7 10,-13 10,-3 11,-2 10,5 10,-2 10,-9 10,3 11,6 10,4 10,-1 10,-2 10,-5 11,-5 10,4 10,1 10,5 10,9 11,7 10,5 10,1 10,-5 10,-12 11,-14 10,-6 10,2 10,10 10,11 11,11 10,4 10,-5 10,-11 10,1 11,3 10,-13 10,-14 10,-3 10,3 11,5 10,2 10,-4 10,-7 10,-10 11,-13 10,-10 10,0 10,8 10,12 11,7 10,3 10,5 10,-6 10,-18 11,-18 10,-9 10,-2 10,4 10,10 11,10 10,7 10,1 10,-3 11,-8 10,-8 10,-5 10,-6 10,-2 11,7 10,7 10,1 10,-5 10,-7 11,-9 10,-6 10,1 10,9 10,11 11,12V1704H126Z"/><path d="M126,1293l11,0 10,0 10,-1 10,0 11,0 10,-1 10,-1 10,-2 10,-1 11,-2 10,-2 10,-3 10,-4 10,-5 11,-7 10,-7 10,-4 10,6 11,8 10,10 10,10 10,3 10,2 11,-1 10,-1 10,-1 10,-10 10,-9 11,-5 10,-3 10,0 10,-2 11,-6 10,-9 10,-4 10,-4 10,-1 11,3 10,10 10,15 10,15 10,27 11,23 10,9 10,-32 10,-18 11,-14 10,-8 10,-16 10,-9 10,-6 11,3 10,4 10,4 10,2 10,3 11,7 10,10 10,9 10,11 11,10 10,6 10,-2 10,-11 10,-14 11,-11 10,0 10,6 10,11 11,12 10,11 10,10 10,4 10,0 11,-3 10,-1 10,4 10,11 10,15 11,16 10,14 10,8 10,0 11,-7 10,-7 10,-6 11,-1 10,6 10,12 10,10 11,0 10,-8 10,-13 10,-15 11,-20 10,-18 10,-16 11,-7 10,0 10,1 10,-1 11,-6 10,-13 10,-4 11,-1 10,6 10,-3 10,-8 10,2 11,6 10,4 10,-1 10,-2 11,-5 10,-4 10,4 10,1 11,5 10,9 10,7 10,5 10,0 11,-5 10,-12 10,-14 10,-6 11,2 10,10 10,11 10,11 10,4 11,-6 10,-11 10,1 10,4 11,-13 10,-14 10,-3 10,3 11,5 10,2 10,-3 10,-7 10,-11 11,-13 10,-10 10,0 10,9 11,12 10,6 10,4 10,4 11,-5 10,-18 10,-19 10,-9 10,-2 11,5 10,9 10,10 10,8 11,1 10,-3 10,-8 10,-8 11,-6 10,-6 10,-2 10,6 10,7 11,1 10,-5 10,-8 10,-8 11,-6 10,1 10,10 10,11 11,13V1704H126Z"/><path d="M126,1297l11,0 10,0 10,-1 10,0 11,0 10,-1 10,-2 10,-1 11,-1 10,-2 10,-3 10,-3 11,-3 10,-5 10,-7 10,-8 11,-4 10,7 10,8 10,10 11,10 10,4 10,1 10,-1 11,-1 10,-1 10,-10 10,-9 11,-5 10,-3 10,0 10,-3 11,-5 10,-10 10,-4 10,-4 11,-1 10,3 10,10 10,15 11,15 10,28 10,24 10,9 11,-32 10,-18 10,-15 11,-8 10,-17 10,-9 10,-7 11,3 10,5 10,4 10,2 11,3 10,8 10,9 10,9 11,12 10,10 10,6 10,-3 11,-11 10,-14 10,-12 10,0 11,6 10,11 10,12 10,12 11,10 10,4 10,-1 10,-2 11,-1 10,4 10,11 10,15 11,17 10,14 10,8 10,0 10,-7 10,-7 11,-6 10,-2 10,7 10,12 10,10 10,-1 11,-7 10,-13 10,-16 10,-20 10,-18 10,-17 10,-7 11,-1 10,1 10,-2 10,-6 10,-13 10,-4 10,-1 11,6 10,-3 10,-8 10,2 11,6 10,4 10,-1 10,-2 11,-5 10,-4 10,4 10,1 10,5 11,9 10,7 10,5 10,1 11,-6 10,-12 10,-15 10,-5 11,2 10,10 10,11 10,11 10,4 11,-6 10,-11 10,1 10,4 11,-13 10,-14 10,-4 10,4 11,5 10,2 10,-3 10,-7 10,-11 11,-13 10,-10 10,0 10,9 11,12 10,6 10,4 10,5 11,-6 10,-18 10,-19 10,-9 10,-3 11,5 10,10 10,10 10,8 11,2 10,-4 10,-8 10,-8 10,-6 11,-6 10,-2 10,6 10,7 11,1 10,-4 10,-8 10,-9 11,-6 10,1 10,10 10,11 10,13V1704H126Z"/><path d="M126,1297l11,0 10,0 10,-1 10,0 11,0 10,-1 10,-2 10,-1 11,-1 10,-2 10,-2 10,-4 11,-3 10,-5 10,-7 10,-8 11,-4 10,7 10,8 10,10 11,10 10,4 10,1 10,-1 11,-1 10,-1 10,-10 10,-9 11,-5 10,-3 10,0 10,-2 11,-6 10,-10 10,-4 10,-4 11,-1 10,3 10,10 10,15 11,15 10,28 10,25 10,8 11,-32 10,-19 10,-14 10,-8 11,-17 10,-9 10,-7 10,3 11,5 10,4 10,2 10,3 11,8 10,9 10,9 10,12 11,10 10,6 10,-3 10,-11 11,-14 10,-12 10,0 11,6 10,11 10,12 10,12 11,10 10,4 10,0 10,-3 11,-2 10,5 10,11 10,15 11,17 10,15 10,8 10,0 11,-7 10,-7 10,-6 10,-1 11,6 10,13 10,11 11,-1 10,-7 10,-13 10,-16 11,-19 10,-19 10,-16 10,-7 11,-1 10,1 10,-1 11,-6 10,-13 10,-3 10,-1 11,7 10,-3 10,-9 10,2 11,6 10,4 10,-1 10,-1 11,-6 10,-4 10,4 10,2 11,4 10,10 10,6 11,6 10,0 10,-5 10,-13 11,-15 10,-6 10,3 10,9 11,12 10,11 10,4 10,-6 11,-12 10,2 10,4 10,-13 11,-14 10,-4 10,5 10,5 11,2 10,-3 10,-7 10,-11 11,-13 10,-10 10,0 10,8 11,13 10,6 10,3 11,5 10,-5 10,-19 10,-19 11,-9 10,-2 10,5 10,10 11,10 10,8 10,2 10,-4 11,-8 10,-8 10,-6 10,-7 11,-2 10,6 10,7 10,0 11,-4 10,-8 10,-9 10,-5 11,0 10,11 10,12 10,12V1704H126Z"/><path d="M126,1301l11,-1 10,0 10,0 11,0 10,0 10,-2 10,-1 11,-1 10,-2 10,-1 11,-3 10,-3 10,-4 10,-5 11,-7 10,-8 10,-4 11,7 10,8 10,10 10,11 11,3 10,2 10,-1 11,-1 10,-1 10,-10 10,-9 11,-6 10,-3 10,0 11,-2 10,-6 10,-10 10,-4 11,-4 10,-2 10,3 11,11 10,15 10,16 10,28 11,25 10,9 10,-33 11,-19 10,-14 10,-9 10,-17 11,-10 10,-7 10,4 11,5 10,4 10,2 11,3 10,8 10,10 10,9 11,11 10,10 10,6 11,-3 10,-11 10,-15 10,-12 11,0 10,6 10,11 11,13 10,11 10,10 10,5 11,-1 10,-3 10,-1 11,5 10,11 10,15 10,18 11,15 10,8 10,1 11,-7 10,-7 10,-6 10,-1 11,6 10,13 10,11 10,0 11,-7 10,-13 10,-15 11,-20 10,-19 10,-17 10,-7 11,0 10,1 10,-1 10,-6 11,-13 10,-3 10,-1 11,8 10,-3 10,-10 10,2 11,6 10,4 10,-1 11,-1 10,-6 10,-4 10,5 11,2 10,4 10,10 11,6 10,5 10,0 10,-5 11,-14 10,-14 10,-6 11,3 10,9 10,12 10,11 11,4 10,-7 10,-12 11,2 10,5 10,-13 10,-14 11,-4 10,5 10,5 11,3 10,-3 10,-7 10,-11 11,-13 10,-10 10,0 11,8 10,13 10,6 10,3 11,5 10,-5 10,-19 11,-19 10,-10 10,-2 10,6 11,10 10,10 10,8 11,2 10,-4 10,-8 10,-8 11,-6 10,-7 10,-3 11,6 10,6 10,1 10,-5 11,-8 10,-9 10,-5 11,1 10,12 10,11 10,13V1704H126Z"/><path d="M126,1301l11,-1 10,0 10,0 10,0 11,0 10,-2 10,-1 11,-1 10,-2 10,-1 10,-3 11,-3 10,-4 10,-5 11,-7 10,-8 10,-4 11,7 10,8 10,10 10,11 11,3 10,2 10,-1 11,-1 10,-1 10,-10 10,-9 11,-6 10,-3 10,0 11,-2 10,-6 10,-10 10,-4 11,-5 10,-1 10,3 11,11 10,16 10,15 10,28 11,25 10,9 10,-33 11,-19 10,-14 10,-9 10,-17 11,-9 10,-7 10,3 11,5 10,4 10,2 10,3 11,8 10,9 10,10 11,11 10,10 10,6 10,-3 11,-11 10,-15 10,-12 11,0 10,6 10,11 11,13 10,11 10,11 10,4 11,-1 10,-3 10,-1 11,5 10,11 10,15 10,18 11,15 10,9 10,0 10,-7 11,-7 10,-6 10,-1 11,6 10,13 10,11 10,0 11,-7 10,-13 10,-15 11,-20 10,-19 10,-17 10,-7 11,0 10,1 10,-1 10,-6 11,-13 10,-3 10,-1 11,7 10,-2 10,-10 10,2 11,6 10,4 10,-1 11,-1 10,-6 10,-4 10,5 11,2 10,4 10,10 11,6 10,5 10,1 10,-6 11,-14 10,-14 10,-6 11,2 10,10 10,12 10,11 11,4 10,-7 10,-12 11,2 10,5 10,-13 10,-14 11,-4 10,5 10,5 11,3 10,-3 10,-7 10,-11 11,-13 10,-11 10,0 11,9 10,13 10,6 10,3 11,5 10,-5 10,-19 11,-19 10,-10 10,-2 10,5 11,11 10,10 10,8 11,2 10,-4 10,-8 10,-8 11,-6 10,-7 10,-3 11,6 10,6 10,1 10,-5 11,-8 10,-9 10,-5 11,1 10,12 10,11 10,13V1704H126Z"/><path d="M126,1304l11,-1 10,0 10,0 11,0 10,0 10,-1 11,-2 10,-1 10,-2 11,-1 10,-3 10,-3 11,-4 10,-5 10,-8 10,-8 11,-4 10,7 10,9 11,10 10,11 10,4 11,1 10,-1 10,-1 11,0 10,-11 10,-9 11,-6 10,-3 10,0 11,-3 10,-6 10,-10 11,-4 10,-4 10,-2 11,4 10,11 10,15 11,16 10,28 10,26 11,9 10,-33 10,-19 11,-15 10,-9 10,-18 11,-9 10,-8 10,4 11,5 10,4 10,2 10,4 11,8 10,9 10,9 11,12 10,10 10,6 11,-3 10,-12 10,-14 11,-13 10,0 10,6 11,11 10,13 10,11 11,11 10,4 10,-1 11,-2 10,-2 10,5 11,11 10,16 10,18 11,15 10,9 10,1 10,-6 11,-8 10,-6 10,-1 11,7 10,13 10,12 10,0 11,-7 10,-13 10,-16 10,-20 11,-18 10,-17 10,-7 11,-1 10,2 10,-1 10,-6 11,-14 10,-2 10,-1 11,8 10,-2 10,-11 10,3 11,5 10,4 10,-1 11,-1 10,-6 10,-3 11,5 10,2 10,4 11,10 10,6 10,5 11,0 10,-6 10,-14 10,-15 11,-5 10,2 10,10 11,12 10,11 10,4 11,-7 10,-13 10,3 11,5 10,-13 10,-14 11,-4 10,5 10,6 10,3 11,-3 10,-7 10,-11 11,-13 10,-11 10,0 11,9 10,13 10,6 11,3 10,6 10,-5 11,-20 10,-20 10,-9 10,-2 11,5 10,11 10,10 11,8 10,3 10,-4 11,-8 10,-9 10,-5 11,-8 10,-4 10,6 11,6 10,1 10,-6 11,-8 10,-9 10,-4 10,1 11,12 10,12 10,13V1704H126Z"/><path d="M126,1304l11,-1 10,0 10,0 11,0 10,0 10,-1 11,-2 10,-1 10,-2 10,-1 11,-3 10,-3 10,-4 11,-5 10,-8 10,-8 11,-4 10,7 10,9 11,10 10,11 10,4 11,1 10,-1 10,-1 11,0 10,-11 10,-9 11,-6 10,-3 10,0 11,-3 10,-6 10,-10 11,-4 10,-4 10,-2 11,4 10,11 10,15 11,16 10,28 10,26 11,9 10,-33 10,-19 11,-15 10,-9 10,-18 10,-9 11,-8 10,4 10,5 11,4 10,2 10,4 11,7 10,10 10,9 11,12 10,10 10,6 11,-3 10,-12 10,-14 11,-13 10,0 10,6 11,11 10,13 10,11 11,11 10,4 10,-1 11,-2 10,-2 10,5 11,11 10,16 10,18 11,16 10,9 10,1 11,-6 10,-8 11,-5 10,-1 10,7 11,13 10,12 11,1 10,-7 10,-13 11,-15 10,-20 11,-19 10,-16 10,-7 11,0 10,1 11,0 10,-6 10,-13 11,-3 10,0 10,9 11,-2 10,-11 10,2 11,6 10,3 10,-1 11,-1 10,-5 11,-3 10,6 10,1 11,5 10,9 10,6 11,5 10,0 10,-7 11,-14 10,-15 10,-5 11,3 10,9 10,12 11,11 10,4 10,-7 11,-14 10,4 10,5 11,-12 10,-15 10,-3 11,5 10,6 10,2 11,-2 10,-7 10,-11 11,-13 10,-11 10,0 11,9 10,13 10,6 11,3 10,6 10,-5 11,-20 10,-20 11,-10 10,-2 10,6 11,11 10,11 10,8 11,2 10,-3 10,-8 11,-9 10,-6 10,-8 11,-5 10,6 10,6 11,0 10,-5 10,-8 11,-9 10,-4 10,1 11,13 10,12 10,13V1704H126Z"/><path d="M126,1306l11,0 10,0 10,0 11,0 10,0 10,-2 11,-1 10,-2 10,-1 11,-2 10,-3 11,-3 10,-4 10,-5 11,-7 10,-9 10,-4 11,8 10,9 10,10 11,11 10,4 11,1 10,-1 10,-1 11,-1 10,-10 10,-10 11,-6 10,-2 10,-1 11,-2 10,-7 11,-10 10,-4 10,-4 11,-2 10,4 10,11 11,15 10,16 10,29 11,26 10,10 10,-34 11,-19 10,-16 11,-8 10,-19 10,-9 11,-8 10,3 10,6 11,4 10,2 10,4 11,8 10,10 11,9 10,11 10,11 11,6 10,-4 10,-12 11,-15 10,-13 10,0 11,6 10,11 11,13 10,12 10,11 11,4 10,-1 10,-3 11,-1 10,5 10,11 11,16 10,18 10,16 11,10 10,1 10,-7 11,-7 10,-6 10,-1 10,7 11,13 10,12 10,1 11,-7 10,-12 10,-16 10,-20 11,-19 10,-17 10,-7 10,0 11,1 10,-1 10,-6 10,-13 11,-3 10,0 10,9 11,-2 10,-11 10,2 11,6 10,3 10,-1 11,-1 10,-5 10,-4 11,7 10,1 11,5 10,9 10,6 11,5 10,0 10,-7 11,-14 10,-15 10,-5 11,2 10,10 10,12 11,11 10,4 10,-7 11,-14 10,4 10,5 11,-13 10,-14 10,-3 11,5 10,6 10,3 11,-3 10,-6 10,-12 11,-13 10,-11 10,0 11,9 10,13 10,6 11,3 10,6 10,-5 11,-20 10,-20 10,-10 11,-2 10,6 11,11 10,11 10,8 11,2 10,-3 10,-8 11,-9 10,-6 10,-8 11,-5 10,6 10,6 11,0 10,-5 10,-8 11,-9 10,-4 10,1 11,13 10,12 10,13V1704H126Z"/><path d="M126,1306l11,0 10,0 10,0 11,0 10,0 10,-2 11,-1 10,-2 10,-1 11,-2 10,-3 11,-3 10,-4 10,-5 11,-7 10,-9 10,-4 11,8 10,9 10,10 11,11 10,4 10,1 11,-1 10,-1 11,-1 10,-10 10,-10 11,-6 10,-2 10,-1 11,-2 10,-7 10,-10 11,-4 10,-4 11,-2 10,4 10,11 11,15 10,16 10,29 11,26 10,10 10,-34 11,-20 10,-15 11,-9 10,-18 10,-9 11,-8 10,3 10,6 11,4 10,2 10,4 11,8 10,10 11,9 10,11 10,11 11,6 10,-3 10,-13 11,-15 10,-13 10,0 11,6 10,11 10,13 11,12 10,11 11,4 10,-1 10,-3 11,-1 10,5 10,11 11,16 10,18 11,17 10,9 10,1 11,-6 10,-7 10,-5 11,-2 10,8 11,14 10,12 10,1 11,-7 10,-12 11,-16 10,-20 10,-18 11,-17 10,-7 11,0 10,2 10,-1 11,-6 10,-13 11,-2 10,1 10,9 11,-2 10,-12 10,2 11,6 10,3 11,-1 10,-1 10,-5 11,-3 10,7 10,1 11,5 10,9 11,6 10,5 10,-1 11,-6 10,-14 10,-16 11,-5 10,3 10,10 11,11 10,11 11,4 10,-8 10,-13 11,3 10,7 10,-13 11,-15 10,-3 11,5 10,6 10,4 11,-3 10,-6 10,-11 11,-14 10,-11 10,0 11,9 10,14 11,6 10,2 10,6 11,-5 10,-20 10,-21 11,-9 10,-2 11,6 10,11 10,11 11,8 10,3 10,-4 11,-7 10,-9 11,-6 10,-9 10,-5 11,5 10,6 10,0 11,-5 10,-9 10,-8 11,-4 10,1 11,14 10,12 10,13V1704H126Z"/><path d="M126,1308l11,0 10,0 10,0 11,0 10,0 11,-2 10,-1 10,-2 11,-1 10,-2 11,-3 10,-3 10,-4 11,-5 10,-8 11,-8 10,-4 10,7 11,9 10,11 11,11 10,4 10,1 11,-1 10,0 10,-1 11,-11 10,-10 11,-6 10,-3 10,0 11,-3 10,-6 11,-10 10,-5 10,-4 11,-1 10,3 11,11 10,16 10,16 11,30 10,26 11,10 10,-35 10,-19 11,-15 10,-10 11,-18 10,-10 10,-8 11,4 10,5 11,5 10,2 10,4 11,8 10,9 11,10 10,11 10,11 11,6 10,-4 11,-12 10,-15 10,-13 11,-1 10,6 11,11 10,14 10,12 11,10 10,5 11,-1 10,-3 10,-1 11,5 10,11 11,16 10,19 10,16 11,10 10,1 11,-5 10,-8 10,-5 11,-1 10,7 11,15 10,12 10,1 11,-6 10,-12 11,-16 10,-20 10,-18 11,-17 10,-7 11,0 10,2 10,-1 11,-5 10,-13 10,-2 11,1 10,10 11,-2 10,-12 10,1 11,6 10,4 11,-2 10,0 10,-5 11,-3 10,7 11,2 10,4 10,9 11,7 10,4 11,-1 10,-7 10,-14 11,-16 10,-5 11,3 10,10 10,11 11,11 10,4 11,-8 10,-14 10,4 11,7 10,-12 11,-15 10,-4 10,6 11,6 10,4 11,-3 10,-6 10,-11 11,-14 10,-10 11,-1 10,10 10,13 11,6 10,2 11,6 10,-4 10,-21 11,-21 10,-9 11,-2 10,6 10,11 11,12 10,8 11,3 10,-4 10,-7 11,-9 10,-6 11,-9 10,-6 10,5 11,6 10,-1 11,-6 10,-8 10,-9 11,-3 10,2 11,14 10,13 10,13V1704H126Z"/><path d="M126,1308l10,0 11,0 10,0 11,0 10,0 10,-2 11,-1 10,-2 11,-1 10,-2 10,-3 11,-3 10,-4 11,-5 10,-8 10,-8 11,-4 10,7 11,9 10,11 10,11 11,4 10,1 11,-1 10,0 10,-1 11,-11 10,-10 11,-6 10,-3 10,0 11,-3 10,-6 11,-10 10,-5 10,-4 11,-1 10,3 11,11 10,16 10,16 11,30 10,26 11,10 10,-35 10,-19 11,-16 10,-9 11,-18 10,-10 10,-8 11,4 10,5 11,5 10,2 10,4 11,7 10,10 11,10 10,11 10,11 11,6 10,-4 11,-12 10,-15 10,-13 11,-1 10,6 11,11 10,14 10,12 11,10 10,5 11,-1 10,-3 10,-1 11,5 10,11 11,16 10,19 10,16 11,10 10,1 11,-5 10,-8 10,-5 11,-1 10,7 11,15 10,12 10,1 11,-6 10,-12 11,-16 10,-20 10,-18 11,-17 10,-7 10,0 11,2 10,0 11,-6 10,-13 10,-2 11,1 10,10 11,-2 10,-12 10,1 11,6 10,4 11,-2 10,0 10,-5 11,-3 10,7 11,1 10,5 10,9 11,7 10,4 11,-1 10,-7 10,-14 11,-16 10,-5 11,3 10,10 10,11 11,11 10,4 11,-8 10,-14 10,4 11,7 10,-12 11,-15 10,-4 10,6 11,6 10,4 11,-3 10,-6 10,-11 11,-14 10,-10 11,-1 10,10 10,13 11,6 10,2 11,6 10,-4 10,-21 11,-21 10,-9 11,-2 10,6 10,11 11,12 10,8 11,3 10,-4 10,-7 11,-10 10,-5 10,-9 11,-6 10,5 11,6 10,-1 10,-5 11,-9 10,-9 11,-3 10,2 10,14 11,13 10,13V1704H126Z"/><path d="M126,1310l10,0 11,-1 10,0 11,0 10,0 11,-1 10,-2 11,-1 10,-2 10,-1 11,-3 10,-4 11,-4 10,-5 11,-8 10,-8 10,-4 11,7 10,10 11,10 10,11 11,4 10,2 11,-1 10,-1 10,-1 11,-11 10,-9 11,-6 10,-3 11,-1 10,-2 10,-7 11,-10 10,-5 11,-4 10,-1 11,3 10,11 10,16 11,16 10,30 11,27 10,9 11,-34 10,-20 11,-15 10,-9 10,-19 11,-10 10,-8 11,3 10,6 11,5 10,2 10,4 11,8 10,10 11,9 10,12 11,10 10,6 10,-4 11,-12 10,-15 11,-14 10,0 11,6 10,11 11,13 10,12 10,11 11,5 10,-1 11,-3 10,-1 11,5 10,11 10,16 11,19 10,17 11,10 10,2 10,-6 11,-7 10,-5 11,-1 10,8 10,14 11,13 10,1 11,-6 10,-12 10,-15 11,-20 10,-19 11,-17 10,-6 10,0 11,2 10,0 11,-6 10,-13 10,-1 11,1 10,11 11,-2 10,-13 10,2 11,5 10,4 11,-2 10,0 11,-5 10,-2 10,7 11,2 10,4 11,10 10,6 11,4 10,-1 10,-8 11,-14 10,-16 11,-5 10,3 11,10 10,11 10,11 11,4 10,-8 11,-15 10,5 11,8 10,-13 10,-15 11,-3 10,6 11,6 10,4 11,-2 10,-6 10,-12 11,-13 10,-11 11,0 10,9 10,14 11,5 10,2 11,7 10,-4 11,-21 10,-22 10,-9 11,-2 10,7 11,11 10,11 11,9 10,3 10,-3 11,-8 10,-9 11,-6 10,-10 11,-6 10,5 10,5 11,-1 10,-6 11,-8 10,-9 11,-3 10,3 10,15 11,12 10,13V1704H126Z"/><path d="M126,1310l10,0 11,-1 10,0 11,0 10,0 11,-1 10,-2 11,-1 10,-2 10,-1 11,-3 10,-4 11,-4 10,-5 11,-8 10,-8 10,-4 11,7 10,10 11,10 10,11 11,4 10,2 10,-1 11,-1 10,-1 11,-11 10,-9 11,-6 10,-3 11,-1 10,-2 10,-7 11,-10 10,-5 11,-4 10,-1 11,3 10,11 10,16 11,16 10,30 11,27 10,9 11,-34 10,-20 10,-15 11,-9 10,-19 11,-10 10,-8 11,3 10,6 11,5 10,2 10,4 11,8 10,10 11,9 10,12 11,10 10,6 10,-4 11,-12 10,-15 11,-14 10,0 11,6 10,11 10,13 11,12 10,11 11,5 10,-1 11,-3 10,-2 11,6 10,11 10,16 11,19 10,17 11,11 10,1 11,-5 10,-7 11,-5 10,-1 11,8 10,15 11,14 10,1 11,-6 10,-12 11,-15 11,-20 10,-18 11,-17 10,-6 11,1 10,2 11,0 10,-6 11,-12 10,-1 11,2 10,11 11,-2 10,-13 10,1 11,6 10,3 11,-2 10,0 11,-5 10,-2 11,9 10,1 11,5 10,9 10,6 11,4 10,-2 11,-7 10,-15 11,-16 10,-5 11,3 10,11 11,11 10,11 10,3 11,-9 10,-15 11,6 10,8 11,-12 10,-15 11,-3 10,6 11,6 10,4 10,-2 11,-6 10,-11 11,-14 10,-11 11,0 10,10 11,14 10,5 11,1 10,7 10,-3 11,-22 10,-22 11,-9 10,-1 11,6 10,11 11,12 10,9 11,3 10,-3 10,-8 11,-9 10,-6 11,-10 10,-7 11,4 10,5 11,-1 10,-6 11,-8 10,-9 10,-2 11,2 10,16 11,13 10,13V1704H126Z"/><path d="M126,1297l10,0 11,0 10,1 11,-1 10,0 11,-1 10,-2 11,-1 10,-1 11,-1 10,-2 11,-4 10,-4 11,-5 10,-8 11,-8 10,-5 10,8 11,9 10,11 11,11 10,3 11,1 10,-1 11,-1 10,0 11,-11 10,-9 11,-6 10,-2 11,0 10,-3 11,-6 10,-10 11,-4 10,-4 10,-2 11,4 10,10 11,16 10,15 11,28 10,25 11,8 10,-35 11,-19 10,-16 11,-9 10,-17 11,-9 10,-7 11,4 10,5 10,4 11,2 10,4 11,8 10,10 11,10 10,12 11,11 10,7 11,-2 10,-13 11,-15 10,-12 11,-1 10,5 11,11 10,13 11,12 10,11 10,4 11,-1 10,-2 11,-2 10,5 11,12 10,16 11,19 10,18 11,12 10,1 10,-6 11,-7 10,-5 11,-1 10,9 10,15 11,15 10,1 11,-6 10,-12 10,-14 11,-20 10,-18 10,-15 11,-6 10,1 11,3 10,0 10,-4 11,-12 10,-1 11,2 10,11 11,-2 10,-13 10,1 11,6 10,3 11,-2 10,0 11,-5 10,-2 11,9 10,1 11,5 10,9 10,6 11,4 10,-2 11,-7 10,-15 11,-16 10,-5 11,3 10,11 11,11 10,11 10,3 11,-9 10,-15 11,6 10,8 11,-12 10,-15 11,-3 10,6 11,6 10,4 10,-2 11,-6 10,-11 11,-14 10,-11 11,0 10,10 11,14 10,5 10,1 11,7 10,-3 11,-22 10,-22 11,-9 10,-1 11,6 10,11 11,12 10,9 10,3 11,-3 10,-8 11,-9 10,-6 11,-10 10,-7 11,4 10,5 11,-1 10,-6 10,-8 11,-9 10,-2 11,2 10,16 11,13 10,13V1704H126Z"/><path d="M126,1297l10,0 11,0 10,1 11,-1 10,0 11,-1 10,-2 11,-1 10,-1 11,-1 10,-2 11,-4 10,-4 11,-5 10,-8 10,-8 11,-5 10,8 11,9 10,11 11,11 10,3 11,1 10,-1 11,-1 10,0 11,-11 10,-9 11,-6 10,-2 11,0 10,-3 11,-6 10,-10 10,-4 11,-4 10,-2 11,4 10,10 11,16 10,15 11,28 10,25 11,8 10,-35 11,-19 10,-16 11,-9 10,-17 11,-9 10,-7 10,4 11,5 10,4 11,2 10,4 11,8 10,10 11,10 10,12 11,11 10,7 11,-2 10,-13 11,-15 10,-12 11,-1 10,5 11,11 10,13 10,12 11,11 10,4 11,-1 10,-2 11,-2 10,5 11,12 10,16 11,19 10,18 11,12 10,1 11,-5 10,-7 11,-5 10,0 11,9 10,16 11,14 10,2 11,-6 10,-11 11,-15 10,-19 11,-18 10,-15 11,-6 10,2 11,3 11,0 10,-4 11,-12 10,0 11,2 10,13 10,-3 11,-13 10,1 11,5 10,3 11,-2 10,1 11,-5 10,-2 11,9 10,2 11,4 10,10 11,5 10,3 11,-1 10,-8 11,-15 10,-16 11,-5 10,4 11,10 10,11 11,11 10,4 11,-10 10,-15 11,6 10,9 10,-12 11,-15 10,-4 11,6 10,7 11,4 10,-1 11,-6 10,-11 11,-14 10,-11 11,0 10,10 11,14 10,4 11,2 10,7 11,-4 10,-21 11,-23 10,-9 11,-1 10,7 11,11 10,12 11,9 10,3 10,-3 11,-8 10,-9 11,-5 10,-11 11,-8 10,4 11,5 10,-1 11,-7 10,-8 11,-8 10,-3 11,3 10,17 11,13 10,13V1704H126Z"/><path d="M126,1301l10,0 11,1 10,1 11,0 10,-1 11,-1 10,-2 11,0 10,-1 11,0 11,-2 10,-3 11,-4 10,-5 11,-8 10,-8 11,-5 10,6 11,10 10,11 11,11 10,3 11,0 10,-1 11,-1 10,-1 11,-9 10,-9 11,-5 10,-2 11,0 10,-1 11,-6 10,-9 11,-4 10,-5 11,-1 10,3 11,10 10,15 11,14 10,26 11,22 10,5 11,-34 10,-20 11,-15 10,-10 11,-16 10,-7 11,-4 10,4 11,4 10,4 11,1 10,4 11,8 10,10 11,10 10,13 11,12 10,10 11,-1 10,-13 11,-15 10,-11 11,-2 11,4 10,10 11,14 10,12 11,11 10,4 11,0 10,-3 11,-2 10,5 11,12 10,17 11,19 10,19 11,12 10,-1 11,-7 10,-8 11,-5 10,-1 11,9 10,17 11,15 10,0 11,-6 10,-12 11,-15 10,-19 11,-18 10,-15 11,-5 10,1 11,3 10,1 11,-4 10,-11 11,-1 10,3 11,14 10,-3 11,-14 10,1 11,5 11,3 10,-2 11,1 10,-5 11,-1 10,10 11,1 10,5 11,9 10,5 11,3 10,-1 11,-8 10,-15 11,-17 10,-5 11,4 10,11 11,11 10,10 11,4 10,-10 11,-16 10,7 11,10 10,-12 11,-16 10,-3 11,6 10,7 11,5 10,-2 11,-6 10,-11 11,-14 10,-10 11,-1 10,10 11,14 10,5 11,1 10,8 11,-4 10,-22 11,-22 10,-10 11,0 10,6 11,12 10,12 11,9 11,3 10,-2 11,-8 10,-9 11,-6 10,-11 11,-8 10,3 11,5 10,-2 11,-6 10,-9 11,-8 10,-2 11,4 10,17 11,13 10,14V1704H126Z"/><path d="M126,1301l10,0 11,1 10,1 11,0 10,-1 11,-1 10,-2 11,0 10,-1 11,0 10,-2 11,-3 10,-4 11,-5 11,-8 10,-8 11,-5 10,6 11,10 10,11 11,11 10,3 11,0 10,-1 11,-1 10,-1 11,-9 10,-8 11,-6 10,-2 11,0 10,-1 11,-6 10,-9 11,-4 10,-5 11,-1 10,3 11,10 10,15 11,14 10,26 11,22 10,5 11,-34 10,-20 11,-15 10,-10 11,-16 10,-7 11,-4 10,4 11,4 10,4 11,1 10,4 11,8 10,10 11,10 10,13 11,12 10,10 11,-1 10,-13 11,-15 10,-11 11,-2 10,4 11,10 10,14 11,12 11,11 10,4 11,0 10,-3 11,-2 10,6 11,11 10,17 11,19 10,19 11,12 10,-1 11,-7 10,-8 11,-5 10,-1 11,9 10,17 11,15 10,0 11,-7 10,-11 11,-15 10,-19 11,-18 10,-15 11,-5 10,1 11,3 10,1 11,-4 10,-11 11,-1 10,3 11,14 10,-3 11,-14 10,1 11,5 10,3 11,-2 10,1 11,-5 11,-1 10,10 11,1 10,5 11,9 10,5 11,3 10,-1 11,-8 10,-15 11,-17 10,-5 11,4 10,11 11,11 10,10 11,4 10,-10 11,-16 10,7 11,10 10,-12 11,-16 10,-3 11,6 10,7 11,5 10,-2 11,-6 10,-11 11,-14 10,-10 11,-1 10,10 11,14 10,5 11,1 10,8 11,-4 10,-22 11,-22 10,-9 11,-1 10,6 11,12 10,12 11,9 10,3 11,-2 10,-8 11,-9 11,-6 10,-11 11,-8 10,3 11,4 10,-1 11,-7 10,-8 11,-8 10,-2 11,4 10,17 11,13 10,14V1704H126Z"/><path d="M126,1304l10,1 11,2 10,1 11,-1 11,0 10,-2 11,-2 10,0 11,1 10,0 11,-1 10,-4 11,-4 10,-5 11,-7 11,-9 10,-5 11,6 10,10 11,12 10,10 11,2 10,0 11,-2 10,0 11,-1 11,-9 10,-7 11,-5 10,-1 11,0 10,-1 11,-5 10,-9 11,-4 10,-5 11,-1 11,3 10,9 11,15 10,13 11,24 10,19 11,3 10,-34 11,-20 10,-15 11,-9 11,-15 10,-5 11,-3 10,4 11,3 10,4 11,1 10,4 11,8 10,10 11,11 11,12 10,14 11,11 10,1 11,-14 10,-14 11,-10 10,-2 11,2 10,10 11,14 11,12 10,11 11,4 10,-1 11,-2 10,-2 11,5 10,12 11,17 10,20 11,19 11,12 10,-2 11,-8 10,-9 11,-5 10,-1 11,8 10,17 11,15 10,0 11,-7 10,-12 11,-15 10,-19 11,-18 10,-15 11,-5 10,2 11,3 10,1 11,-4 10,-11 11,0 10,4 11,14 10,-2 11,-15 10,1 11,5 11,3 10,-2 11,0 10,-4 11,-1 10,10 11,2 10,5 11,9 10,5 11,2 10,-2 11,-8 11,-15 10,-17 11,-4 10,4 11,10 10,11 11,11 10,3 11,-10 10,-16 11,7 10,11 11,-12 11,-16 10,-3 11,6 10,8 11,4 10,-1 11,-6 10,-11 11,-14 10,-11 11,0 10,10 11,15 11,4 10,1 11,8 10,-3 11,-23 10,-23 11,-9 10,-1 11,7 10,12 11,12 10,9 11,4 11,-3 10,-7 11,-9 10,-6 11,-12 10,-9 11,3 10,4 11,-2 10,-6 11,-9 10,-8 11,-1 11,4 10,18 11,14 10,13V1704H126Z"/><path d="M126,1304l10,1 11,2 10,1 11,-1 11,0 10,-2 11,-2 10,0 11,1 10,0 11,-1 10,-4 11,-4 10,-5 11,-7 11,-9 10,-5 11,6 10,10 11,12 10,10 11,2 10,0 11,-2 10,0 11,0 11,-9 10,-8 11,-5 10,-1 11,0 10,-1 11,-5 10,-9 11,-4 10,-5 11,-1 11,3 10,9 11,15 10,13 11,24 10,19 11,3 10,-34 11,-20 10,-15 11,-9 11,-15 10,-5 11,-3 10,4 11,3 10,4 11,1 10,4 11,8 10,10 11,11 11,12 10,14 11,11 10,1 11,-14 10,-14 11,-10 10,-2 11,2 10,10 11,14 11,12 10,10 11,5 10,-1 11,-2 10,-2 11,6 10,11 11,17 10,20 11,19 11,13 10,-2 11,-8 11,-9 10,-5 11,-1 10,9 11,17 11,16 10,0 11,-7 11,-12 10,-15 11,-19 11,-17 10,-15 11,-5 10,2 11,4 11,1 10,-3 11,-11 11,0 10,4 11,15 10,-2 11,-15 10,0 11,5 11,3 10,-2 11,0 10,-4 11,0 10,11 11,2 11,4 10,9 11,5 10,2 11,-2 10,-8 11,-16 11,-17 10,-4 11,5 10,10 11,11 10,10 11,3 11,-10 10,-17 11,8 10,12 11,-12 10,-16 11,-3 10,6 11,8 11,4 10,-1 11,-5 10,-11 11,-14 10,-11 11,0 11,10 10,15 11,4 10,0 11,8 10,-2 11,-23 11,-24 10,-8 11,-1 10,7 11,12 10,12 11,10 10,3 11,-2 11,-7 10,-9 11,-6 10,-12 11,-10 10,3 11,3 11,-2 10,-7 11,-9 10,-7 11,-1 10,4 11,19 11,14 10,14V1704H126Z"/><path d="M126,1307l10,1 11,3 11,2 10,-1 11,-1 10,-2 11,-2 10,1 11,1 11,1 10,-1 11,-3 10,-4 11,-6 10,-7 11,-9 11,-5 10,6 11,10 10,11 11,10 11,2 10,0 11,-2 10,0 11,-1 10,-8 11,-7 11,-5 10,-1 11,1 10,-1 11,-4 11,-9 10,-4 11,-4 10,-2 11,3 10,9 11,14 11,12 10,22 11,17 10,1 11,-34 11,-20 10,-15 11,-9 10,-14 11,-3 10,-2 11,5 11,2 10,3 11,1 10,4 11,9 11,10 10,11 11,13 10,14 11,13 10,2 11,-14 11,-14 10,-9 11,-3 10,2 11,9 11,14 10,12 11,11 10,4 11,0 10,-3 11,-1 11,5 10,11 11,17 10,21 11,19 10,13 11,-3 10,-10 11,-9 10,-6 11,-2 10,9 11,17 11,16 10,-1 11,-8 10,-12 11,-15 10,-19 11,-18 10,-15 11,-5 10,2 11,4 10,1 11,-4 10,-10 11,0 10,4 11,15 10,-2 11,-15 10,0 11,5 11,3 10,-2 11,0 10,-4 11,0 10,11 11,2 11,4 10,9 11,5 10,2 11,-2 10,-9 11,-15 11,-17 10,-4 11,5 10,10 11,11 10,10 11,3 10,-10 11,-17 11,8 10,12 11,-12 10,-16 11,-3 10,6 11,8 11,4 10,-1 11,-5 10,-11 11,-14 10,-11 11,0 11,10 10,15 11,4 10,0 11,8 10,-2 11,-23 10,-24 11,-8 11,-1 10,7 11,12 10,12 11,9 10,4 11,-2 11,-7 10,-9 11,-6 10,-12 11,-10 10,3 11,3 11,-2 10,-7 11,-9 10,-7 11,-1 10,5 11,18 11,14 10,14V1704H126Z"/><path d="M126,1307l10,1 11,3 10,2 11,-1 11,-1 10,-2 11,-2 10,1 11,1 11,1 10,-1 11,-4 10,-4 11,-5 10,-7 11,-9 11,-5 10,6 11,10 10,11 11,10 11,2 10,0 11,-2 10,0 11,-1 10,-8 11,-7 11,-5 10,-1 11,1 10,-1 11,-4 11,-9 10,-4 11,-4 10,-2 11,3 10,9 11,14 11,12 10,22 11,17 10,1 11,-34 11,-20 10,-15 11,-9 10,-14 11,-3 10,-2 11,4 11,3 10,3 11,1 10,4 11,9 10,10 11,11 11,13 10,14 11,13 10,2 11,-14 11,-14 10,-9 11,-3 10,2 11,9 10,14 11,12 11,11 10,4 11,0 10,-3 11,-1 11,5 10,11 11,17 10,21 11,19 11,13 10,-3 11,-9 10,-9 11,-6 11,-1 10,9 11,18 11,16 10,-2 11,-7 10,-12 11,-15 11,-19 10,-17 11,-15 11,-4 10,2 11,4 11,1 10,-3 11,-11 11,1 10,5 11,16 10,-3 11,-15 10,0 11,4 11,3 10,-2 11,1 10,-4 11,0 11,11 10,3 11,4 10,9 11,4 11,2 10,-2 11,-9 10,-16 11,-16 11,-4 10,4 11,11 10,10 11,11 11,3 10,-12 11,-17 10,9 11,13 11,-12 10,-16 11,-3 10,7 11,7 10,5 11,-1 11,-5 10,-11 11,-14 10,-11 11,0 11,11 10,14 11,4 10,0 11,8 11,-2 10,-23 11,-24 10,-9 11,0 11,7 10,12 11,12 10,10 11,4 11,-2 10,-7 11,-9 10,-6 11,-13 11,-10 10,2 11,3 10,-2 11,-8 10,-8 11,-7 11,-1 10,5 11,20 10,14 11,13V1704H126Z"/><path d="M126,1310l10,2 11,2 11,3 10,-1 11,-1 10,-2 11,-2 11,1 10,2 11,1 10,0 11,-4 11,-4 10,-5 11,-7 11,-9 10,-5 11,5 10,10 11,12 11,10 10,1 11,-1 11,-2 10,0 11,0 10,-8 11,-7 11,-4 10,-1 11,1 10,0 11,-4 11,-8 10,-4 11,-5 11,-1 10,3 11,9 10,13 11,11 11,20 10,15 11,-1 11,-34 10,-19 11,-15 10,-10 11,-13 11,-2 10,0 11,5 10,2 11,2 11,1 10,5 11,8 11,10 10,11 11,14 10,15 11,14 11,4 10,-14 11,-14 11,-8 10,-4 11,1 10,9 11,14 11,12 10,10 11,5 10,-1 11,-2 11,-1 10,5 11,11 11,17 10,21 11,20 10,14 11,-5 11,-11 10,-9 11,-6 11,-1 10,9 11,18 11,16 10,-2 11,-8 10,-12 11,-15 11,-19 10,-17 11,-15 11,-4 10,2 11,4 10,2 11,-3 11,-10 10,1 11,5 11,17 10,-2 11,-16 10,-1 11,5 11,2 10,-2 11,1 11,-3 10,0 11,12 10,2 11,4 11,9 10,4 11,2 11,-3 10,-9 11,-15 10,-17 11,-4 11,5 10,10 11,11 11,10 10,3 11,-12 10,-17 11,9 11,14 10,-12 11,-16 11,-3 10,7 11,7 10,5 11,0 11,-5 10,-11 11,-14 11,-11 10,0 11,11 10,14 11,4 11,-1 10,9 11,-2 10,-23 11,-24 11,-9 10,0 11,7 11,12 10,13 11,9 10,4 11,-1 11,-7 10,-9 11,-6 11,-13 10,-11 11,2 10,2 11,-3 11,-7 10,-9 11,-7 11,1 10,5 11,20 10,15 11,13V1704H126Z"/><path d="M126,1310l10,2 11,2 11,3 10,-1 11,-1 10,-2 11,-2 11,1 10,2 11,1 10,0 11,-4 11,-4 10,-5 11,-7 11,-9 10,-5 11,5 10,10 11,12 11,10 10,1 11,-1 11,-2 10,0 11,0 10,-8 11,-7 11,-4 10,-1 11,1 10,0 11,-4 11,-8 10,-4 11,-5 11,-1 10,3 11,9 10,13 11,11 11,20 10,15 11,-1 11,-34 10,-19 11,-15 10,-10 11,-12 11,-3 10,0 11,5 10,2 11,2 11,1 10,5 11,8 11,11 10,10 11,14 10,14 11,15 11,4 10,-14 11,-14 11,-8 10,-4 11,1 10,9 11,14 11,12 10,10 11,5 10,-1 11,-2 11,-1 10,5 11,12 11,16 10,21 11,20 10,13 11,-4 11,-11 10,-9 11,-6 11,-1 10,9 11,18 10,16 11,-2 11,-8 10,-12 11,-15 11,-19 10,-17 11,-15 11,-4 10,2 11,4 10,2 11,-3 11,-10 10,1 11,5 11,17 10,-2 11,-16 10,-1 11,5 11,2 10,-2 11,1 11,-3 10,0 11,12 10,2 11,5 11,8 10,4 11,2 11,-3 10,-9 11,-15 10,-17 11,-4 11,5 10,11 11,10 11,10 10,3 11,-12 10,-17 11,9 11,14 10,-11 11,-17 10,-3 11,7 11,7 10,5 11,-1 11,-5 10,-10 11,-14 10,-10 11,-1 11,11 10,14 11,4 11,-1 10,9 11,-2 10,-23 11,-24 11,-9 10,0 11,8 11,11 10,13 11,9 10,4 11,-1 11,-7 10,-9 11,-5 11,-14 10,-11 11,2 10,2 11,-3 11,-7 10,-9 11,-7 11,1 10,5 11,21 10,14 11,13V1704H126Z"/><path d="M126,1313l10,2 11,3 11,3 10,-1 11,-2 11,-2 10,-2 11,2 11,2 10,2 11,1 10,-4 11,-4 11,-5 10,-8 11,-8 11,-6 10,5 11,10 11,12 10,10 11,1 11,-1 10,-3 11,0 11,0 10,-7 11,-6 11,-4 10,0 11,1 11,0 10,-4 11,-7 11,-5 10,-4 11,-2 11,3 10,9 11,12 10,10 11,19 11,13 10,-2 11,-35 11,-19 10,-15 11,-9 11,-12 10,-1 11,1 11,5 10,1 11,3 11,0 10,5 11,9 11,10 10,11 11,13 11,16 10,16 11,5 11,-14 10,-14 11,-7 11,-4 10,0 11,9 11,13 10,12 11,10 10,5 11,0 11,-3 10,-1 11,6 11,11 10,17 11,22 11,20 10,13 11,-5 11,-12 10,-10 11,-6 11,-2 10,10 11,18 10,16 11,-2 11,-9 10,-13 11,-15 11,-18 10,-17 11,-15 10,-3 11,2 11,4 10,2 11,-3 11,-10 10,2 11,6 11,17 10,-2 11,-17 10,0 11,4 11,2 10,-2 11,1 11,-3 10,1 11,13 11,2 10,4 11,9 11,4 10,1 11,-3 11,-9 10,-16 11,-17 11,-3 10,5 11,10 10,10 11,10 11,3 10,-12 11,-18 11,10 10,15 11,-11 11,-17 10,-3 11,7 11,8 10,5 11,-1 11,-5 10,-10 11,-14 11,-10 10,-1 11,11 10,15 11,3 11,-1 10,9 11,-1 11,-24 10,-24 11,-9 11,1 10,7 11,12 11,12 10,10 11,4 11,-1 10,-7 11,-9 11,-5 10,-14 11,-12 10,1 11,2 11,-3 10,-8 11,-8 11,-7 10,1 11,6 11,21 10,15 11,13V1704H126Z"/><path d="M126,1313l10,2 11,3 11,3 10,-1 11,-2 11,-2 10,-2 11,2 10,2 11,2 11,1 10,-4 11,-4 11,-5 10,-8 11,-8 11,-6 10,5 11,10 11,12 10,10 11,1 11,-1 10,-3 11,0 11,0 10,-7 11,-6 11,-4 10,-1 11,2 11,0 10,-4 11,-7 11,-5 10,-4 11,-2 10,3 11,9 11,12 10,10 11,19 11,13 10,-3 11,-34 11,-19 10,-15 11,-9 11,-12 10,-1 11,1 11,5 10,1 11,2 11,1 10,5 11,9 11,10 10,11 11,13 11,16 10,16 11,5 11,-14 10,-13 11,-8 11,-4 10,0 11,9 10,13 11,12 11,10 10,5 11,0 11,-3 10,0 11,5 11,11 10,17 11,22 11,20 11,14 10,-6 11,-11 11,-10 10,-6 11,-1 11,10 11,18 10,17 11,-3 11,-9 11,-12 11,-14 10,-18 11,-17 11,-14 11,-4 10,2 11,5 11,2 11,-3 10,-10 11,2 11,7 10,18 11,-2 11,-17 10,-1 11,4 11,2 11,-2 10,1 11,-2 11,1 10,13 11,3 11,4 10,8 11,4 11,1 10,-3 11,-10 11,-15 10,-17 11,-4 11,6 10,10 11,10 11,10 10,2 11,-12 11,-18 10,10 11,16 11,-11 10,-17 11,-3 11,7 11,8 10,5 11,0 11,-5 10,-10 11,-14 11,-10 10,0 11,10 11,15 10,3 11,-1 11,9 10,-1 11,-24 11,-25 10,-8 11,1 11,7 10,12 11,13 11,10 10,4 11,-1 11,-7 10,-8 11,-6 11,-14 11,-13 10,1 11,1 11,-3 10,-8 11,-8 11,-7 10,2 11,6 11,22 10,15 11,13V1704H126Z"/><path d="M126,1316l10,2 11,3 11,4 10,-1 11,-2 11,-2 10,-2 11,2 11,2 10,3 11,1 11,-4 11,-4 10,-5 11,-7 11,-9 10,-6 11,5 11,10 10,12 11,9 11,1 10,-1 11,-3 11,0 11,0 10,-6 11,-6 11,-3 10,-1 11,2 11,0 10,-3 11,-7 11,-4 10,-5 11,-1 11,2 11,8 10,13 11,9 11,16 10,11 11,-3 11,-34 10,-20 11,-15 11,-9 10,-11 11,1 11,2 11,5 10,1 11,2 11,0 10,5 11,9 11,10 10,11 11,14 11,16 10,17 11,7 11,-15 11,-12 10,-7 11,-4 11,-1 10,8 11,13 11,12 10,10 11,5 11,0 10,-2 11,-1 11,5 11,12 10,17 11,21 11,21 10,14 11,-7 10,-13 11,-10 11,-6 10,-2 11,9 11,19 10,16 11,-3 11,-10 10,-12 11,-15 10,-18 11,-17 11,-14 10,-4 11,3 11,4 10,2 11,-3 10,-10 11,2 11,7 10,19 11,-2 11,-18 10,-1 11,4 11,2 10,-3 11,2 11,-2 11,1 10,14 11,2 11,4 10,8 11,4 11,1 10,-3 11,-10 11,-15 10,-17 11,-4 11,6 10,10 11,10 11,10 10,2 11,-12 11,-18 10,10 11,16 11,-11 10,-16 11,-4 11,7 10,8 11,5 11,0 11,-5 10,-10 11,-13 11,-11 10,0 11,11 11,14 10,3 11,-1 11,9 10,-1 11,-24 11,-24 10,-9 11,1 11,7 10,12 11,13 11,9 10,5 11,-1 11,-7 10,-8 11,-5 11,-15 10,-13 11,1 11,1 11,-3 10,-8 11,-9 11,-6 10,2 11,6 11,22 10,15 11,13V1704H126Z"/><path d="M126,1316l10,2 11,3 11,4 10,-1 11,-2 11,-2 10,-2 11,2 11,2 10,3 11,1 11,-4 11,-4 10,-5 11,-7 11,-9 10,-6 11,5 11,10 10,12 11,9 11,1 10,-1 11,-3 11,0 11,0 10,-6 11,-6 11,-3 10,-1 11,2 11,0 10,-3 11,-7 11,-4 10,-5 11,-1 11,2 11,8 10,13 11,9 11,16 10,11 11,-4 11,-33 10,-19 11,-15 11,-10 10,-11 11,1 11,1 11,6 10,1 11,1 11,1 10,5 11,9 11,10 10,11 11,14 11,16 10,17 11,7 11,-15 11,-12 10,-7 11,-4 11,-1 10,8 11,13 11,12 10,10 11,5 11,0 10,-2 11,-1 11,6 11,11 10,17 11,21 11,21 10,14 11,-7 11,-12 11,-10 10,-6 11,-1 11,9 11,19 10,17 11,-4 11,-9 11,-12 10,-15 11,-17 11,-17 11,-14 10,-4 11,3 11,4 11,2 10,-2 11,-9 11,2 11,7 10,20 11,-2 11,-18 10,-1 11,3 11,2 11,-3 10,2 11,-2 11,2 10,14 11,3 11,4 11,8 10,3 11,1 11,-4 10,-9 11,-16 11,-17 10,-3 11,6 11,10 11,10 10,9 11,3 11,-13 10,-19 11,12 11,16 11,-10 10,-17 11,-3 11,7 10,7 11,6 11,0 10,-5 11,-10 11,-13 11,-11 10,0 11,11 11,15 10,2 11,-2 11,10 11,-1 10,-24 11,-25 11,-7 10,0 11,8 11,12 11,12 10,10 11,5 11,-1 10,-6 11,-9 11,-5 10,-15 11,-14 11,1 11,1 10,-4 11,-8 11,-9 10,-6 11,3 11,6 11,23 10,16 11,13V1704H126Z"/><path d="M125,1319l11,2 11,4 11,4 10,-2 11,-1 11,-3 11,-2 10,3 11,3 11,2 10,2 11,-4 11,-4 11,-5 10,-7 11,-9 11,-6 11,4 10,11 11,12 11,9 11,0 10,-1 11,-4 11,1 10,0 11,-6 11,-5 11,-3 10,0 11,1 11,1 11,-3 10,-6 11,-4 11,-5 10,-1 11,2 11,8 11,12 10,8 11,15 11,9 11,-5 10,-34 11,-19 11,-15 10,-9 11,-11 11,2 11,3 10,5 11,1 11,1 11,1 10,5 11,9 11,10 10,12 11,13 11,17 11,19 10,8 11,-15 11,-12 11,-6 10,-5 11,-2 11,8 11,13 10,12 11,10 11,5 10,0 11,-2 11,-1 11,6 10,11 11,17 11,22 11,21 10,14 11,-7 11,-14 11,-10 10,-6 11,-2 11,10 11,19 10,17 11,-4 11,-10 11,-12 10,-15 11,-18 11,-16 11,-14 10,-3 11,3 11,4 11,2 10,-2 11,-9 11,3 11,8 10,20 11,-2 11,-18 11,-2 10,4 11,1 11,-3 10,3 11,-2 11,2 11,15 10,3 11,4 11,8 11,3 10,0 11,-4 11,-10 11,-16 10,-17 11,-2 11,5 10,11 11,9 11,10 11,2 10,-14 11,-18 11,12 11,17 10,-10 11,-17 11,-3 11,7 10,8 11,5 11,0 10,-4 11,-9 11,-14 11,-10 10,-1 11,11 11,15 11,2 10,-2 11,11 11,-1 11,-25 10,-25 11,-7 11,1 10,7 11,12 11,13 11,10 10,5 11,-1 11,-6 11,-8 10,-5 11,-16 11,-14 11,-1 10,1 11,-4 11,-9 10,-8 11,-5 11,2 11,8 10,24 11,15 11,13V1704H125Z"/><path d="M125,1319l11,2 11,4 11,4 10,-2 11,-1 11,-3 11,-2 10,3 11,3 11,2 10,2 11,-4 11,-4 11,-5 10,-7 11,-9 11,-6 11,4 10,11 11,12 11,9 10,0 11,-1 11,-4 11,1 10,0 11,-6 11,-5 11,-3 10,0 11,1 11,1 10,-3 11,-6 11,-4 11,-4 10,-2 11,2 11,8 11,12 10,8 11,15 11,9 11,-6 10,-33 11,-19 11,-15 10,-9 11,-11 11,2 11,3 10,5 11,1 11,1 11,1 10,5 11,9 11,11 10,11 11,13 11,17 11,19 10,8 11,-15 11,-12 11,-6 10,-5 11,-1 11,7 10,13 11,12 11,10 11,5 10,0 11,-2 11,-1 11,6 10,12 11,16 11,22 11,21 10,14 11,-8 11,-13 11,-10 10,-6 11,-2 11,10 11,19 10,17 11,-4 11,-10 11,-13 10,-14 11,-18 11,-16 11,-14 10,-3 11,3 11,4 11,2 10,-3 11,-8 11,3 11,8 10,20 11,-2 11,-18 10,-2 11,4 11,1 11,-3 10,3 11,-2 11,2 11,15 10,3 11,4 11,8 11,3 10,0 11,-4 11,-10 10,-16 11,-17 11,-2 11,6 10,10 11,9 11,10 11,2 10,-14 11,-19 11,13 11,17 10,-10 11,-17 11,-3 10,7 11,8 11,5 11,0 10,-4 11,-9 11,-14 11,-10 10,0 11,11 11,14 11,2 10,-2 11,10 11,0 11,-25 10,-24 11,-8 11,1 10,7 11,12 11,13 11,10 10,5 11,-1 11,-6 11,-8 10,-5 11,-16 11,-14 11,-1 10,1 11,-5 11,-8 10,-8 11,-5 11,2 11,8 10,24 11,15 11,13V1704H125Z"/><path d="M125,1321l11,3 11,4 11,4 10,-1 11,-2 11,-2 11,-3 11,4 10,3 11,3 11,2 11,-4 10,-4 11,-5 11,-7 11,-9 10,-6 11,4 11,11 11,12 10,9 11,0 11,-3 11,-3 11,1 10,0 11,-5 11,-5 11,-3 10,0 11,2 11,1 11,-2 10,-6 11,-4 11,-5 11,-1 10,2 11,7 11,12 11,7 11,13 10,7 11,-6 11,-34 11,-19 10,-15 11,-9 11,-9 11,2 10,4 11,6 11,0 11,1 11,0 10,6 11,9 11,11 11,11 10,14 11,17 11,20 11,9 10,-15 11,-12 11,-4 11,-6 10,-2 11,7 11,13 11,12 11,10 10,5 11,0 11,-2 11,0 10,5 11,12 11,16 11,23 10,21 11,14 11,-9 11,-14 10,-11 11,-6 11,-2 11,10 10,19 11,18 11,-5 11,-11 10,-12 11,-14 11,-18 11,-16 10,-14 11,-3 11,3 11,4 10,3 11,-3 11,-8 11,4 10,8 11,22 11,-2 11,-19 10,-2 11,3 11,1 11,-3 11,3 10,-2 11,3 11,16 11,3 10,4 11,7 11,3 11,0 10,-5 11,-10 11,-15 11,-17 10,-3 11,7 11,10 11,9 10,9 11,2 11,-14 11,-19 11,13 10,18 11,-9 11,-17 11,-4 10,7 11,8 11,6 11,0 10,-4 11,-9 11,-14 11,-10 10,0 11,11 11,15 11,1 11,-2 10,11 11,-1 11,-24 11,-25 10,-8 11,1 11,8 11,12 10,13 11,10 11,5 11,-1 10,-5 11,-8 11,-5 11,-16 10,-16 11,-1 11,0 11,-4 11,-9 10,-8 11,-5 11,3 11,8 10,25 11,16 11,13V1704H125Z"/><path d="M125,1321l11,3 11,4 11,4 10,-1 11,-2 11,-2 11,-3 10,4 11,3 11,3 11,2 11,-4 10,-4 11,-5 11,-7 11,-9 10,-6 11,4 11,11 11,12 10,9 11,-1 11,-2 11,-3 11,1 10,0 11,-5 11,-5 11,-3 10,0 11,2 11,1 11,-3 10,-5 11,-4 11,-4 11,-2 10,2 11,8 11,11 11,7 11,13 10,7 11,-7 11,-33 11,-19 10,-14 11,-10 11,-9 11,2 10,4 11,6 11,0 11,1 10,1 11,5 11,9 11,11 11,11 10,14 11,17 11,20 11,9 10,-15 11,-12 11,-4 11,-5 10,-3 11,7 11,13 11,12 11,10 10,4 11,1 11,-2 11,0 10,5 11,12 11,17 11,22 10,21 11,14 11,-8 11,-14 11,-10 11,-6 11,-2 11,10 10,20 11,17 11,-5 11,-10 11,-12 11,-14 11,-17 11,-16 10,-13 11,-3 11,3 11,4 11,2 11,-2 11,-8 11,4 10,10 11,22 11,-2 11,-19 11,-3 10,3 11,1 11,-3 11,3 10,-1 11,3 11,17 11,3 11,3 10,8 11,2 11,0 11,-5 11,-10 10,-16 11,-17 11,-2 11,6 11,11 10,9 11,9 11,1 11,-14 10,-20 11,14 11,20 11,-10 11,-17 10,-4 11,8 11,8 11,5 11,1 10,-4 11,-9 11,-13 11,-10 11,0 10,11 11,14 11,1 11,-2 10,11 11,0 11,-25 11,-25 11,-8 10,2 11,8 11,12 11,12 11,11 10,5 11,0 11,-6 11,-7 11,-5 10,-17 11,-16 11,-2 11,0 11,-5 10,-9 11,-8 11,-5 11,4 10,9 11,26 11,15 11,13V1704H125Z"/><path d="M125,1324l11,2 11,5 11,5 11,-2 10,-2 11,-2 11,-3 11,4 11,4 10,4 11,2 11,-4 11,-4 11,-5 10,-7 11,-9 11,-6 11,3 11,11 10,13 11,8 11,0 11,-3 11,-4 10,1 11,1 11,-5 11,-4 11,-3 10,1 11,1 11,1 11,-1 11,-6 10,-4 11,-4 11,-1 11,2 11,7 10,10 11,7 11,11 11,6 11,-9 10,-33 11,-18 11,-15 11,-9 11,-9 10,4 11,5 11,5 11,0 11,1 10,0 11,6 11,9 11,11 11,11 10,14 11,18 11,21 11,10 11,-15 10,-11 11,-4 11,-5 11,-4 11,7 11,13 10,11 11,10 11,5 11,0 11,-1 10,0 11,5 11,12 11,17 11,22 10,21 11,15 11,-10 11,-15 10,-11 11,-6 11,-2 11,10 10,19 11,17 11,-5 11,-11 10,-13 11,-14 11,-17 11,-16 10,-13 11,-3 11,3 11,4 10,2 11,-2 11,-8 11,4 10,10 11,22 11,-2 11,-19 10,-3 11,3 11,1 11,-3 11,3 10,-2 11,4 11,17 11,3 11,3 10,8 11,2 11,0 11,-5 11,-10 10,-16 11,-17 11,-2 11,7 10,10 11,9 11,9 11,1 11,-14 10,-20 11,14 11,20 11,-10 11,-17 10,-3 11,7 11,8 11,5 11,1 10,-4 11,-9 11,-13 11,-10 11,0 10,11 11,15 11,0 11,-2 10,11 11,0 11,-25 11,-25 11,-7 10,1 11,8 11,12 11,12 11,10 10,6 11,0 11,-6 11,-7 11,-5 10,-17 11,-16 11,-2 11,0 10,-6 11,-8 11,-8 11,-5 11,4 10,9 11,26 11,15 11,13V1704H125Z"/><path d="M125,1324l11,2 11,5 11,5 10,-2 11,-2 11,-2 11,-3 11,4 11,4 10,4 11,2 11,-4 11,-4 11,-5 10,-7 11,-9 11,-6 11,3 11,11 10,13 11,8 11,-1 11,-2 11,-4 10,1 11,1 11,-5 11,-4 11,-2 10,0 11,1 11,1 11,-1 11,-6 10,-4 11,-4 11,-1 11,2 11,7 10,10 11,6 11,12 11,6 11,-9 10,-33 11,-18 11,-15 11,-9 11,-9 10,4 11,5 11,5 11,-1 11,2 10,0 11,6 11,10 11,10 11,12 10,13 11,18 11,21 11,10 11,-15 10,-11 11,-4 11,-5 11,-4 11,7 10,13 11,11 11,10 11,5 11,0 10,-1 11,0 11,6 11,11 11,17 10,22 11,21 11,15 11,-9 11,-15 11,-11 11,-5 11,-2 10,10 11,19 11,18 11,-6 11,-11 11,-12 11,-14 11,-16 10,-16 11,-13 11,-3 11,3 11,4 11,3 11,-2 11,-8 10,5 11,10 11,23 11,-1 11,-20 10,-3 11,2 11,1 11,-3 11,3 11,-1 10,4 11,18 11,3 11,3 11,8 10,1 11,-1 11,-5 11,-10 11,-16 11,-16 10,-2 11,7 11,10 11,9 11,8 11,1 10,-14 11,-20 11,14 11,21 11,-9 10,-18 11,-3 11,7 11,8 11,6 11,0 10,-3 11,-9 11,-13 11,-10 11,0 10,11 11,15 11,1 11,-3 11,11 11,0 10,-25 11,-25 11,-7 11,2 11,7 10,13 11,12 11,10 11,6 11,0 11,-5 10,-7 11,-5 11,-17 11,-18 11,-2 10,-1 11,-5 11,-9 11,-8 11,-4 11,5 10,9 11,26 11,16 11,13V1704H125Z"/><path d="M125,1326l11,3 11,5 11,5 11,-1 10,-3 11,-2 11,-2 11,4 11,4 11,4 10,3 11,-4 11,-4 11,-5 11,-7 11,-9 11,-6 10,3 11,11 11,12 11,8 11,-1 11,-2 10,-4 11,1 11,1 11,-5 11,-4 11,-1 10,0 11,2 11,1 11,-1 11,-5 11,-4 10,-4 11,-2 11,3 11,6 11,10 11,5 11,10 10,4 11,-10 11,-33 11,-18 11,-14 11,-10 10,-8 11,5 11,6 11,6 11,-2 11,1 10,1 11,6 11,10 11,10 11,12 11,13 10,19 11,22 11,11 11,-15 11,-11 11,-2 10,-6 11,-4 11,5 11,13 11,12 11,9 11,5 10,1 11,-1 11,0 11,6 11,11 11,17 10,22 11,21 11,16 11,-11 11,-15 11,-11 11,-6 10,-2 11,10 11,20 11,17 11,-6 11,-11 11,-12 11,-14 10,-17 11,-15 11,-13 11,-3 11,4 11,4 11,3 11,-2 10,-7 11,5 11,10 11,25 11,-2 11,-21 11,-3 10,2 11,1 11,-3 11,3 11,-1 11,5 10,18 11,3 11,4 11,7 11,1 11,-1 11,-5 10,-10 11,-16 11,-17 11,-1 11,6 11,11 10,8 11,9 11,1 11,-16 11,-20 11,16 11,21 10,-9 11,-17 11,-4 11,8 11,8 11,5 10,1 11,-3 11,-8 11,-13 11,-10 11,0 11,11 10,15 11,0 11,-4 11,12 11,1 11,-25 10,-26 11,-7 11,2 11,8 11,12 11,13 11,10 10,6 11,1 11,-5 11,-7 11,-5 11,-18 10,-18 11,-2 11,-2 11,-6 11,-9 11,-8 11,-4 10,6 11,9 11,28 11,16 11,13V1704H125Z"/><path d="M125,1326l11,3 11,5 11,5 11,-1 10,-3 11,-2 11,-2 11,4 11,4 11,4 10,3 11,-4 11,-4 11,-6 11,-6 11,-9 10,-6 11,3 11,11 11,12 11,8 11,-1 11,-2 10,-4 11,1 11,1 11,-4 11,-4 11,-2 10,0 11,2 11,1 11,-2 11,-4 11,-4 10,-4 11,-1 11,2 11,6 11,10 11,5 10,10 11,4 11,-10 11,-33 11,-18 11,-14 10,-10 11,-8 11,5 11,6 11,5 11,-1 11,1 10,1 11,6 11,10 11,10 11,12 11,13 10,19 11,22 11,11 11,-15 11,-11 11,-2 10,-6 11,-4 11,6 11,12 11,12 11,9 10,5 11,1 11,-1 11,0 11,6 11,11 11,17 10,22 11,21 11,15 11,-10 11,-15 11,-11 11,-6 10,-2 11,10 11,20 11,17 11,-6 11,-11 11,-12 11,-14 10,-17 11,-15 11,-13 11,-2 11,3 11,4 11,2 11,-1 10,-8 11,6 11,11 11,24 11,-2 11,-20 10,-4 11,2 11,1 11,-4 11,4 11,-1 11,5 10,18 11,4 11,3 11,7 11,1 11,-1 10,-5 11,-11 11,-15 11,-17 11,-1 11,7 11,10 10,8 11,9 11,0 11,-15 11,-20 11,16 10,21 11,-8 11,-18 11,-4 11,8 11,8 11,5 10,1 11,-3 11,-9 11,-12 11,-10 11,0 10,11 11,15 11,0 11,-4 11,12 11,1 11,-25 10,-26 11,-6 11,2 11,7 11,12 11,13 10,10 11,6 11,0 11,-4 11,-7 11,-5 11,-17 10,-19 11,-2 11,-2 11,-6 11,-10 11,-7 11,-4 10,6 11,10 11,27 11,16 11,13V1704H125Z"/><path d="M125,1329l11,3 11,5 11,6 11,-2 11,-2 10,-3 11,-2 11,4 11,5 11,4 11,4 11,-4 11,-5 10,-5 11,-7 11,-8 11,-7 11,3 11,11 11,13 11,7 10,-1 11,-3 11,-4 11,1 11,1 11,-3 11,-4 11,-2 10,1 11,2 11,1 11,-1 11,-4 11,-4 11,-3 11,-2 10,2 11,6 11,9 11,5 11,8 11,2 11,-11 11,-32 10,-18 11,-15 11,-9 11,-8 11,6 11,7 11,6 11,-2 10,1 11,0 11,7 11,10 11,10 11,12 11,14 11,18 10,24 11,12 11,-15 11,-10 11,-2 11,-6 11,-5 11,5 10,13 11,11 11,9 11,5 11,1 11,-1 11,1 11,6 11,11 10,17 11,22 11,22 11,15 11,-11 11,-17 11,-11 10,-6 11,-2 11,10 11,20 11,18 11,-7 11,-12 11,-12 10,-14 11,-16 11,-15 11,-12 11,-3 11,3 11,4 11,3 10,-2 11,-7 11,6 11,12 11,25 11,-1 11,-22 11,-3 10,1 11,0 11,-3 11,4 11,0 11,5 11,19 10,4 11,3 11,7 11,1 11,-2 11,-6 11,-10 11,-16 10,-17 11,-1 11,8 11,10 11,8 11,8 11,1 11,-16 10,-21 11,17 11,22 11,-8 11,-18 11,-3 11,7 11,8 10,6 11,1 11,-3 11,-8 11,-13 11,-9 11,0 11,11 10,15 11,-1 11,-4 11,12 11,2 11,-26 11,-25 11,-7 10,2 11,8 11,12 11,13 11,10 11,6 11,1 11,-4 10,-7 11,-4 11,-19 11,-19 11,-3 11,-3 11,-6 11,-10 10,-7 11,-3 11,6 11,10 11,29 11,16 11,13V1704H125Z"/><path d="M125,1329l11,3 11,5 11,6 11,-2 11,-2 10,-3 11,-2 11,4 11,5 11,4 11,4 11,-4 11,-5 10,-5 11,-7 11,-8 11,-7 11,3 11,11 11,13 11,7 10,-1 11,-3 11,-4 11,1 11,1 11,-3 11,-4 11,-1 10,0 11,2 11,1 11,-1 11,-4 11,-4 11,-3 11,-2 10,3 11,5 11,9 11,5 11,8 11,2 11,-11 11,-32 10,-18 11,-14 11,-10 11,-7 11,5 11,7 11,5 11,-1 10,1 11,0 11,8 11,9 11,10 11,12 11,13 11,19 10,23 11,13 11,-15 11,-10 11,-2 11,-6 11,-5 11,5 10,13 11,11 11,9 11,5 11,1 11,-1 11,1 11,6 10,11 11,17 11,22 11,22 11,15 11,-11 11,-16 11,-11 11,-5 11,-2 11,10 11,21 11,17 11,-6 11,-12 11,-12 11,-13 11,-16 11,-15 11,-12 11,-3 11,3 11,5 11,2 11,-1 11,-6 11,6 11,12 11,26 11,-1 11,-22 11,-4 10,2 11,-1 11,-3 11,4 11,0 11,6 11,20 11,3 11,4 11,6 10,1 11,-2 11,-6 11,-11 11,-16 11,-16 11,-1 11,8 11,10 11,8 10,8 11,0 11,-16 11,-21 11,17 11,24 11,-8 11,-18 11,-4 11,7 11,8 10,6 11,1 11,-2 11,-8 11,-12 11,-10 11,0 11,12 11,14 11,-1 10,-4 11,12 11,2 11,-25 11,-26 11,-6 11,2 11,8 11,12 11,13 10,10 11,6 11,2 11,-5 11,-6 11,-4 11,-19 11,-20 11,-4 11,-3 10,-7 11,-9 11,-8 11,-3 11,7 11,11 11,30 11,16 11,13V1704H125Z"/><path d="M125,1331l11,3 11,6 11,6 11,-2 11,-2 11,-3 10,-2 11,5 11,4 11,5 11,4 11,-4 11,-4 11,-5 11,-7 11,-8 11,-7 11,2 10,11 11,13 11,8 11,-2 11,-3 11,-5 11,2 11,1 11,-3 11,-3 11,-2 10,1 11,2 11,2 11,-1 11,-4 11,-3 11,-4 11,-1 11,2 11,5 11,9 11,3 10,7 11,1 11,-13 11,-32 11,-18 11,-14 11,-9 11,-7 11,6 11,8 11,6 10,-2 11,0 11,1 11,7 11,10 11,10 11,12 11,14 11,19 11,24 11,14 11,-15 10,-10 11,-1 11,-6 11,-6 11,5 11,12 11,11 11,9 11,5 11,2 11,-1 10,1 11,6 11,11 11,16 11,23 11,21 11,16 11,-12 11,-17 10,-11 11,-6 11,-2 11,10 11,20 11,18 11,-8 11,-12 10,-13 11,-13 11,-16 11,-15 11,-12 11,-2 11,2 10,5 11,2 11,-1 11,-7 11,7 11,12 11,26 11,-1 11,-22 10,-4 11,1 11,0 11,-4 11,5 11,0 11,6 11,20 11,4 11,3 11,6 10,1 11,-2 11,-6 11,-11 11,-16 11,-16 11,-1 11,8 11,10 11,8 10,8 11,0 11,-17 11,-20 11,17 11,24 11,-8 11,-18 11,-4 11,7 10,8 11,6 11,1 11,-2 11,-8 11,-12 11,-10 11,0 11,12 11,14 10,-1 11,-4 11,12 11,2 11,-25 11,-26 11,-6 11,2 11,8 11,12 11,12 10,11 11,6 11,1 11,-4 11,-6 11,-4 11,-19 11,-20 11,-4 11,-3 10,-7 11,-10 11,-7 11,-3 11,7 11,12 11,29 11,17 11,12V1704H125Z"/><path d="M125,1331l11,3 11,6 11,6 11,-2 11,-2 11,-3 10,-2 11,5 11,4 11,5 11,4 11,-4 11,-4 11,-5 11,-7 11,-8 11,-7 10,2 11,12 11,12 11,8 11,-2 11,-3 11,-5 11,2 11,1 11,-3 11,-3 11,-2 10,1 11,2 11,1 11,0 11,-4 11,-3 11,-4 11,-1 11,2 11,5 11,9 10,3 11,7 11,0 11,-12 11,-32 11,-17 11,-15 11,-9 11,-7 11,6 11,8 11,5 10,-2 11,1 11,1 11,7 11,10 11,11 11,11 11,14 11,18 11,25 11,14 10,-15 11,-10 11,0 11,-7 11,-6 11,5 11,12 11,11 11,9 11,5 11,1 11,0 10,1 11,6 11,12 11,15 11,23 11,21 11,16 11,-12 11,-16 11,-11 11,-6 11,-2 11,11 11,20 11,18 11,-8 11,-12 11,-12 11,-13 11,-16 11,-14 11,-12 11,-2 11,3 11,4 11,3 11,-1 11,-7 11,7 11,14 11,27 11,-2 11,-22 11,-5 10,1 11,0 11,-4 11,4 11,1 11,7 11,21 11,3 11,3 11,7 11,0 11,-3 11,-6 11,-11 10,-15 11,-17 11,0 11,8 11,10 11,7 11,8 11,0 11,-17 11,-21 11,18 11,25 11,-8 11,-18 10,-3 11,7 11,8 11,5 11,2 11,-2 11,-8 11,-12 11,-9 11,0 11,12 11,14 11,-1 11,-5 11,12 10,3 11,-26 11,-26 11,-6 11,3 11,8 11,12 11,12 11,11 11,6 11,2 11,-4 11,-6 11,-4 10,-19 11,-21 11,-5 11,-3 11,-8 11,-10 11,-7 11,-2 11,8 11,11 11,31 11,17 11,12V1704H125Z"/><path d="M125,1334l11,3 11,6 11,7 11,-3 11,-2 11,-3 11,-3 11,6 11,5 11,6 10,4 11,-4 11,-5 11,-5 11,-6 11,-9 11,-7 11,2 11,12 11,12 11,8 11,-2 11,-4 11,-5 11,2 11,2 11,-3 11,-3 11,-1 11,1 10,2 11,2 11,0 11,-4 11,-3 11,-3 11,-2 11,2 11,5 11,8 11,2 11,6 11,-1 11,-14 11,-32 11,-17 11,-14 11,-10 11,-6 11,7 10,9 11,6 11,-3 11,1 11,0 11,8 11,10 11,11 11,11 11,14 11,19 11,26 11,15 11,-16 11,-9 11,0 11,-6 11,-7 11,4 10,12 11,11 11,9 11,5 11,2 11,0 11,1 11,6 11,11 11,16 11,23 11,22 11,15 11,-12 11,-18 11,-11 11,-5 11,-2 11,10 11,20 11,18 11,-8 11,-13 11,-12 11,-13 11,-15 11,-14 11,-12 11,-2 11,3 11,4 11,3 11,-1 11,-6 11,8 11,14 11,28 11,-1 11,-23 11,-5 10,0 11,0 11,-4 11,4 11,2 11,6 11,22 11,4 11,3 11,6 11,0 11,-3 11,-7 11,-11 11,-15 11,-17 11,1 11,8 11,10 11,7 11,7 11,0 11,-17 11,-22 10,19 11,26 11,-7 11,-18 11,-4 11,7 11,8 11,6 11,2 11,-2 11,-7 11,-12 11,-9 11,0 11,11 11,15 11,-2 11,-5 11,13 11,3 11,-26 11,-26 11,-6 11,3 11,8 10,12 11,12 11,11 11,6 11,3 11,-4 11,-6 11,-3 11,-20 11,-22 11,-5 11,-5 11,-8 11,-10 11,-7 11,-2 11,9 11,12 11,32 11,17 11,12V1704H125Z"/><path d="M125,1334l11,3 11,6 11,7 11,-3 11,-2 11,-3 11,-3 11,6 11,5 10,6 11,4 11,-4 11,-5 11,-5 11,-6 11,-9 11,-7 11,2 11,12 11,12 11,8 11,-2 11,-4 11,-5 11,2 11,2 11,-3 11,-2 11,-2 10,1 11,2 11,2 11,-1 11,-3 11,-3 11,-3 11,-1 11,2 11,4 11,8 11,2 11,5 11,-1 11,-13 11,-32 11,-17 11,-14 11,-10 11,-6 10,7 11,8 11,6 11,-2 11,1 11,0 11,8 11,10 11,11 11,11 11,14 11,19 11,25 11,15 11,-15 11,-9 11,1 11,-7 11,-7 11,4 10,12 11,11 11,9 11,5 11,2 11,0 11,1 11,6 11,12 11,15 11,23 11,21 11,16 11,-13 11,-17 11,-11 11,-5 11,-2 11,10 11,21 11,17 11,-8 11,-13 11,-12 11,-13 11,-15 11,-14 11,-12 11,-2 11,3 11,4 11,3 11,-1 11,-6 11,8 11,14 11,28 11,-1 11,-23 10,-5 11,0 11,-1 11,-4 11,5 11,1 11,8 11,22 11,3 11,3 11,6 11,0 11,-3 11,-7 11,-11 11,-15 11,-16 11,0 11,8 11,10 11,7 11,7 11,0 11,-17 10,-22 11,19 11,26 11,-7 11,-18 11,-4 11,7 11,8 11,6 11,1 11,-1 11,-7 11,-12 11,-9 11,0 11,12 11,14 11,-2 11,-6 11,13 11,3 11,-25 11,-26 11,-6 11,3 10,8 11,12 11,12 11,11 11,6 11,2 11,-3 11,-6 11,-3 11,-20 11,-22 11,-5 11,-5 11,-8 11,-10 11,-7 11,-2 11,9 11,13 11,31 11,17 11,12V1704H125Z"/><path d="M125,1336l11,3 11,7 11,7 11,-2 11,-3 11,-3 11,-3 11,6 11,6 11,6 11,4 11,-4 11,-4 11,-5 11,-7 11,-8 11,-7 11,1 11,12 11,13 11,7 11,-3 11,-4 11,-4 11,2 11,1 11,-2 11,-2 11,-1 11,1 11,2 11,2 11,0 10,-3 11,-3 11,-3 11,-1 11,2 11,4 11,7 11,2 11,3 11,-2 11,-15 11,-32 11,-17 11,-13 11,-10 11,-6 11,9 11,9 11,6 11,-3 11,0 11,1 11,8 11,10 11,11 11,11 11,14 11,19 11,27 11,16 11,-15 11,-9 11,2 11,-8 11,-7 11,4 11,11 11,11 11,9 11,5 11,2 11,0 11,2 11,6 11,11 11,16 11,22 11,22 11,16 11,-13 11,-18 11,-12 11,-5 11,-2 11,10 11,21 11,18 11,-9 11,-14 11,-12 11,-12 11,-15 11,-14 11,-12 11,-1 11,3 11,4 11,2 11,-1 11,-5 11,8 11,15 11,29 11,-1 11,-24 11,-5 10,0 11,-1 11,-4 11,5 11,2 11,7 11,23 11,4 11,3 11,6 11,-1 11,-4 11,-7 11,-11 11,-15 11,-16 11,0 11,9 11,10 11,7 11,7 11,-1 11,-18 11,-22 11,20 11,27 11,-6 11,-19 11,-4 11,8 11,7 11,6 11,2 11,-1 11,-7 11,-12 11,-9 11,1 11,11 11,15 11,-3 11,-6 11,14 11,3 11,-26 11,-26 11,-5 11,3 11,8 11,12 11,12 11,11 11,6 11,3 11,-3 11,-5 11,-4 11,-20 11,-23 11,-6 11,-5 11,-9 11,-10 11,-7 11,-1 11,10 11,13 11,32 11,17 11,12V1704H125Z"/><path d="M125,1336l11,3 11,7 11,7 11,-2 11,-3 11,-3 11,-3 11,6 11,6 11,6 11,4 11,-4 11,-4 11,-5 11,-7 11,-8 11,-7 11,1 11,12 11,13 11,7 11,-3 11,-4 11,-5 11,3 11,1 11,-1 11,-3 11,-1 11,1 10,2 11,2 11,0 11,-3 11,-3 11,-3 11,-1 11,2 11,4 11,7 11,1 11,4 11,-3 11,-14 11,-32 11,-16 11,-14 11,-10 11,-6 11,8 11,9 11,6 11,-3 11,1 11,1 11,8 11,11 11,10 11,11 11,13 11,20 11,27 11,16 11,-15 11,-9 11,2 11,-7 11,-8 11,4 11,11 11,11 11,8 11,6 11,2 11,0 11,2 11,6 11,11 11,16 11,22 11,22 11,16 11,-14 11,-17 11,-11 11,-6 11,-2 11,11 11,20 11,18 11,-10 11,-13 11,-12 11,-13 11,-14 11,-14 11,-11 11,-2 11,3 11,4 11,2 11,-1 11,-5 11,8 11,15 11,29 11,0 10,-24 11,-6 11,0 11,-1 11,-4 11,5 11,2 11,8 11,22 11,4 11,3 11,6 11,-1 11,-4 11,-7 11,-11 11,-15 11,-16 11,1 11,8 11,10 11,7 11,6 11,-1 11,-17 11,-22 11,20 11,28 11,-7 11,-18 11,-4 11,7 11,7 11,6 11,2 11,-2 11,-6 11,-11 11,-9 11,0 11,11 11,15 11,-3 11,-6 11,13 11,4 11,-26 11,-26 11,-5 11,3 11,8 11,12 11,12 11,10 11,7 11,3 11,-3 11,-5 11,-3 11,-21 11,-23 11,-6 11,-5 11,-9 11,-10 11,-7 11,-1 11,10 11,13 11,33 11,17 11,11V1704H125Z"/><path d="M125,1338l11,4 11,7 11,7 11,-2 11,-3 11,-3 11,-3 11,6 11,7 11,6 11,5 11,-4 11,-5 11,-5 11,-6 11,-9 11,-7 11,1 11,12 11,13 11,7 11,-3 11,-5 11,-4 11,2 11,2 12,-1 11,-2 11,-1 11,1 11,2 11,2 11,0 11,-2 11,-3 11,-3 11,-1 11,2 11,4 11,6 11,1 11,2 11,-4 11,-16 11,-31 11,-17 11,-14 11,-9 11,-5 11,9 11,9 11,6 11,-3 11,1 11,0 11,9 11,10 11,11 11,11 11,13 11,21 11,27 11,18 11,-16 11,-8 11,3 11,-8 11,-8 11,3 11,11 12,11 11,8 11,6 11,2 11,1 11,1 11,7 11,11 11,16 11,22 11,22 11,16 11,-14 11,-19 11,-11 11,-5 11,-3 11,11 11,20 11,18 11,-10 11,-14 11,-12 11,-12 11,-15 11,-13 11,-11 11,-2 10,3 11,4 11,2 11,0 11,-6 11,9 11,16 11,30 11,0 11,-25 11,-6 12,0 11,-2 11,-4 11,5 11,3 11,8 11,24 11,4 11,3 11,5 11,-2 11,-3 11,-8 11,-11 11,-15 11,-16 11,1 11,9 11,10 11,6 11,7 11,-2 11,-18 11,-21 11,20 11,29 11,-7 11,-18 11,-4 11,7 11,8 11,5 11,2 11,-1 11,-6 11,-11 11,-9 11,1 11,11 11,14 11,-3 11,-6 11,13 11,4 11,-25 11,-26 11,-5 11,3 11,8 11,12 11,12 11,10 11,7 11,3 11,-2 11,-5 11,-3 11,-21 11,-24 11,-7 11,-5 11,-10 11,-10 11,-7 11,0 11,10 11,14 12,34 11,17 11,11V1704H125Z"/><path d="M125,1338l11,4 11,7 11,7 11,-2 11,-3 11,-3 11,-3 11,6 11,7 11,6 11,5 11,-4 11,-5 11,-5 11,-6 11,-9 11,-7 11,2 11,11 11,13 11,6 11,-2 11,-5 11,-5 11,3 11,2 11,-1 11,-2 12,-1 11,1 11,1 11,3 11,0 11,-2 11,-3 11,-2 11,-1 11,1 11,4 11,6 11,1 11,2 11,-5 11,-15 11,-31 11,-17 11,-13 11,-10 11,-5 11,9 11,9 11,6 11,-3 11,0 11,1 11,9 11,11 11,10 11,11 11,13 11,20 11,28 11,17 11,-15 11,-8 11,3 11,-7 11,-9 11,3 11,11 11,10 11,9 12,5 11,3 11,1 11,2 11,6 11,11 11,16 11,22 11,22 11,16 11,-14 11,-18 11,-11 11,-5 11,-2 11,11 12,20 11,18 11,-10 11,-14 11,-11 11,-12 11,-14 11,-13 12,-11 11,-2 11,3 11,4 11,3 11,-1 11,-5 11,10 11,16 11,31 11,0 11,-25 12,-7 11,0 11,-2 11,-4 11,5 11,3 11,9 11,24 11,5 11,2 11,6 11,-3 11,-4 11,-7 11,-12 11,-15 11,-16 11,2 11,9 11,10 11,6 11,6 11,-2 12,-18 11,-22 11,22 11,29 11,-6 11,-19 11,-4 11,7 11,8 11,6 11,2 11,-1 11,-6 11,-11 11,-8 11,0 11,12 11,14 11,-4 11,-7 11,15 11,4 11,-26 11,-26 12,-5 11,4 11,8 11,12 11,12 11,10 11,8 11,3 11,-2 11,-5 11,-3 11,-21 11,-25 11,-7 11,-7 11,-9 11,-11 11,-7 11,0 11,12 11,14 11,35 11,17 12,12V1704H125Z"/><path d="M125,1341l11,3 11,8 11,7 11,-2 11,-3 11,-3 11,-3 11,7 11,6 11,7 11,5 12,-4 11,-5 11,-5 11,-6 11,-8 11,-8 11,1 11,12 11,13 11,6 11,-3 11,-4 11,-5 11,2 11,2 11,0 11,-2 12,-1 11,1 11,2 11,3 11,0 11,-1 11,-3 11,-2 11,-1 11,1 11,4 11,5 11,0 11,0 11,-5 11,-18 11,-30 12,-16 11,-14 11,-10 11,-4 11,10 11,10 11,6 11,-4 11,1 11,1 11,9 11,11 11,10 11,11 11,13 11,21 12,28 11,19 11,-15 11,-8 11,4 11,-8 11,-9 11,2 11,11 11,10 11,9 11,5 11,3 11,1 11,2 11,7 11,11 12,15 11,23 11,21 11,17 11,-16 11,-19 11,-11 11,-5 11,-2 11,10 11,21 11,17 11,-11 10,-14 11,-12 11,-12 11,-14 11,-13 11,-11 11,-2 11,3 11,4 11,2 11,0 11,-5 11,10 11,16 11,32 11,-1 11,-25 11,-7 12,0 11,-2 11,-5 11,6 11,3 11,9 11,25 11,4 11,2 11,6 11,-3 11,-4 11,-8 11,-11 11,-15 11,-16 11,2 11,9 11,10 11,6 11,6 11,-2 11,-18 12,-23 11,22 11,30 11,-6 11,-18 11,-5 11,7 11,8 11,5 11,3 11,-1 11,-6 11,-10 11,-9 11,0 11,12 11,14 11,-4 11,-7 11,14 11,5 11,-26 11,-26 11,-4 12,3 11,8 11,12 11,12 11,10 11,7 11,4 11,-2 11,-5 11,-2 11,-22 11,-25 11,-7 11,-7 11,-10 11,-10 11,-7 11,0 11,12 11,15 11,34 11,18 11,11V1704H125Z"/><path d="M125,1341l11,3 11,8 11,7 11,-2 11,-3 11,-3 11,-3 11,7 11,6 11,7 11,5 11,-4 12,-5 11,-5 11,-6 11,-8 11,-7 11,1 11,11 11,13 11,6 11,-3 11,-4 11,-5 11,2 11,3 11,-1 11,-2 12,0 11,0 11,2 11,2 11,1 11,-1 11,-3 11,-2 11,-1 11,2 11,3 11,5 11,0 11,0 11,-6 11,-17 11,-30 12,-16 11,-13 11,-10 11,-5 11,10 11,10 11,6 11,-4 11,1 11,1 11,9 11,11 11,10 11,12 11,12 11,20 11,29 12,19 11,-16 11,-7 11,4 11,-8 11,-9 11,2 11,11 11,10 11,8 11,6 11,3 11,1 11,2 11,7 11,11 11,15 12,22 11,22 11,17 11,-15 11,-19 11,-11 11,-5 11,-2 11,11 11,21 12,17 11,-10 11,-15 11,-12 11,-11 11,-14 11,-12 11,-11 11,-1 12,2 11,4 11,2 11,0 11,-4 11,10 11,17 11,32 11,0 11,-26 12,-7 11,-1 11,-2 11,-5 11,6 11,4 11,10 11,25 11,5 11,2 11,5 11,-3 11,-5 11,-8 11,-11 12,-15 11,-15 11,2 11,9 11,10 11,5 11,6 11,-2 11,-19 11,-22 11,22 11,31 11,-5 11,-19 12,-4 11,7 11,7 11,6 11,2 11,0 11,-6 11,-10 11,-9 11,1 11,12 11,14 11,-5 11,-7 12,14 11,5 11,-26 11,-26 11,-4 11,4 11,8 11,12 11,11 11,11 11,7 11,4 11,-1 11,-4 12,-3 11,-22 11,-26 11,-8 11,-7 11,-10 11,-11 11,-7 11,1 11,13 11,15 11,35 11,18 11,11V1704H125Z"/><path d="M125,1343l11,4 11,8 11,8 11,-3 11,-3 11,-3 11,-3 12,7 11,7 11,7 11,5 11,-4 11,-4 11,-6 11,-6 11,-8 11,-7 11,0 12,12 11,13 11,6 11,-3 11,-5 11,-5 11,2 11,3 11,0 11,-1 12,-1 11,1 11,2 11,2 11,2 11,-1 11,-3 11,-2 11,-1 11,2 11,3 12,4 11,-1 11,-1 11,-7 11,-19 11,-30 11,-16 11,-13 11,-10 11,-4 12,11 11,11 11,6 11,-4 11,0 11,1 11,10 11,11 11,10 11,11 12,13 11,21 11,29 11,20 11,-15 11,-7 11,5 11,-8 11,-10 11,2 11,10 12,10 11,8 11,6 11,3 11,1 11,3 11,7 11,11 11,15 11,22 12,22 11,17 11,-16 11,-20 11,-11 11,-5 11,-2 11,11 11,21 12,18 11,-12 11,-15 11,-12 11,-11 11,-13 11,-12 11,-11 11,-1 11,2 12,4 11,3 11,-1 11,-4 11,11 11,18 11,33 11,0 11,-26 12,-8 11,-1 11,-3 11,-4 11,6 11,4 11,10 11,26 11,5 11,2 12,5 11,-3 11,-6 11,-8 11,-11 11,-15 11,-15 11,2 11,9 11,10 12,6 11,5 11,-2 11,-20 11,-22 11,23 11,32 11,-5 11,-19 11,-4 11,7 12,7 11,6 11,2 11,0 11,-5 11,-10 11,-8 11,0 11,12 11,14 12,-5 11,-8 11,15 11,6 11,-26 11,-27 11,-3 11,4 11,8 11,11 12,12 11,11 11,7 11,5 11,-1 11,-4 11,-3 11,-22 11,-27 11,-9 12,-8 11,-10 11,-11 11,-7 11,2 11,13 11,16 11,36 11,18 11,11V1704H125Z"/><path d="M125,1343l11,4 11,8 11,8 11,-3 11,-3 11,-3 11,-3 11,7 12,7 11,7 11,5 11,-4 11,-4 11,-6 11,-6 11,-8 11,-7 11,1 12,11 11,13 11,6 11,-4 11,-4 11,-6 11,3 11,3 11,0 11,-1 11,-1 12,1 11,2 11,2 11,1 11,-1 11,-2 11,-2 11,-1 11,2 11,3 12,4 11,-1 11,-1 11,-8 11,-18 11,-30 11,-15 11,-13 11,-10 11,-5 12,10 11,11 11,6 11,-4 11,1 11,1 11,10 11,11 11,10 11,12 11,12 12,20 11,30 11,20 11,-15 11,-7 11,5 11,-8 11,-10 11,2 11,10 12,9 11,9 11,5 11,3 11,2 11,3 11,7 11,11 11,15 11,22 12,22 11,16 11,-16 11,-19 11,-11 11,-4 11,-2 11,10 11,21 11,17 12,-11 11,-15 11,-12 11,-11 11,-13 11,-12 11,-11 11,-1 11,2 12,4 11,2 11,0 11,-4 11,11 11,18 11,33 11,0 11,-26 11,-7 12,-2 11,-3 11,-5 11,7 11,4 11,10 11,27 11,4 11,3 11,4 12,-4 11,-5 11,-8 11,-11 11,-15 11,-15 11,2 11,10 11,9 11,6 12,5 11,-3 11,-19 11,-23 11,24 11,32 11,-5 11,-19 11,-4 11,7 12,7 11,5 11,3 11,0 11,-5 11,-10 11,-8 11,1 11,11 11,14 12,-5 11,-8 11,15 11,5 11,-25 11,-26 11,-4 11,4 11,8 11,11 12,12 11,11 11,7 11,4 11,0 11,-4 11,-2 11,-23 11,-27 11,-9 12,-8 11,-10 11,-12 11,-6 11,2 11,13 11,16 11,37 11,17 11,11V1704H125Z"/><path d="M125,1345l11,4 11,9 11,8 11,-3 11,-3 11,-4 12,-2 11,7 11,7 11,8 11,6 11,-5 11,-4 12,-5 11,-6 11,-8 11,-8 11,0 11,12 11,13 11,6 12,-4 11,-5 11,-6 11,4 11,2 11,1 11,-1 12,0 11,1 11,1 11,3 11,2 11,-1 11,-2 11,-2 12,-1 11,2 11,2 11,4 11,-2 11,-3 11,-8 12,-20 11,-30 11,-15 11,-13 11,-10 11,-4 11,12 11,11 12,6 11,-4 11,0 11,2 11,10 11,11 11,10 12,11 11,13 11,21 11,30 11,21 11,-15 11,-6 11,6 12,-9 11,-10 11,1 11,10 11,9 11,8 11,6 12,3 11,2 11,3 11,8 11,10 11,15 11,22 11,22 12,17 11,-17 11,-20 11,-11 11,-4 11,-2 11,10 11,21 11,18 12,-13 11,-15 11,-12 11,-11 11,-13 11,-11 11,-11 11,-1 11,2 11,4 12,2 11,0 11,-4 11,12 11,19 11,34 11,0 11,-27 12,-8 11,-2 11,-3 11,-5 11,7 11,4 11,12 11,27 12,5 11,2 11,4 11,-4 11,-6 11,-8 11,-12 11,-14 12,-15 11,3 11,9 11,10 11,5 11,5 11,-3 11,-20 12,-23 11,25 11,33 11,-5 11,-18 11,-5 11,7 11,7 12,6 11,2 11,1 11,-5 11,-10 11,-7 11,0 11,12 12,14 11,-6 11,-8 11,15 11,6 11,-26 11,-26 11,-4 12,5 11,8 11,11 11,12 11,10 11,8 11,5 11,-1 12,-3 11,-2 11,-23 11,-28 11,-9 11,-9 11,-11 12,-12 11,-6 11,2 11,15 11,16 11,38 11,18 11,10V1704H125Z"/><path d="M125,1345l11,4 11,9 11,8 11,-3 11,-3 11,-4 12,-2 11,7 11,7 11,8 11,6 11,-5 11,-4 11,-5 12,-6 11,-8 11,-8 11,1 11,11 11,13 11,6 12,-4 11,-5 11,-6 11,4 11,3 11,0 11,-1 11,0 12,1 11,1 11,3 11,1 11,0 11,-2 11,-2 12,0 11,1 11,2 11,4 11,-2 11,-3 11,-9 11,-19 12,-30 11,-15 11,-13 11,-10 11,-3 11,10 11,12 12,6 11,-5 11,1 11,2 11,10 11,11 11,11 11,11 12,12 11,20 11,31 11,21 11,-15 11,-6 11,6 12,-8 11,-11 11,1 11,10 11,9 11,8 11,6 11,3 12,3 11,3 11,7 11,11 11,14 11,22 11,22 12,17 11,-17 11,-19 11,-11 12,-4 11,-2 11,11 11,21 11,18 12,-13 11,-15 11,-12 11,-10 12,-12 11,-12 11,-10 11,-1 12,2 11,4 11,2 11,0 12,-3 11,12 11,20 11,35 11,0 11,-28 12,-8 11,-2 11,-4 11,-5 11,7 11,5 11,12 12,28 11,5 11,2 11,4 11,-4 11,-7 12,-8 11,-12 11,-14 11,-15 11,3 11,10 11,9 12,5 11,5 11,-3 11,-20 11,-24 11,26 12,34 11,-4 11,-19 11,-5 11,7 11,7 11,6 12,3 11,0 11,-4 11,-9 11,-8 11,0 12,12 11,14 11,-6 11,-9 11,16 11,6 12,-26 11,-26 11,-3 11,5 11,8 11,11 11,11 12,11 11,8 11,5 11,0 11,-3 11,-2 12,-24 11,-28 11,-10 11,-10 11,-11 11,-12 11,-6 12,3 11,15 11,17 11,39 11,18 11,10V1704H125Z"/><path d="M125,1347l11,5 11,8 11,9 11,-3 11,-3 12,-4 11,-3 11,8 11,8 11,7 11,7 12,-4 11,-5 11,-5 11,-6 11,-8 11,-8 12,0 11,12 11,13 11,6 11,-5 11,-5 12,-6 11,4 11,3 11,1 11,-1 12,0 11,1 11,2 11,3 11,2 11,0 12,-2 11,-2 11,0 11,1 11,2 11,3 12,-3 11,-4 11,-11 11,-20 11,-29 11,-15 12,-13 11,-10 11,-3 11,11 11,13 11,6 12,-5 11,0 11,2 11,11 11,11 11,10 12,11 11,13 11,21 11,31 11,22 11,-15 12,-5 11,6 11,-8 11,-11 11,0 11,10 12,9 11,7 11,6 11,4 11,3 11,3 12,7 11,11 11,15 11,22 11,21 11,17 12,-17 11,-21 11,-11 11,-4 11,-2 11,10 11,21 11,18 11,-14 12,-16 11,-11 11,-11 11,-12 11,-12 11,-9 11,-2 11,3 11,3 11,2 11,0 12,-3 11,12 11,20 11,35 11,0 11,-27 11,-9 12,-2 11,-4 11,-5 11,7 11,5 11,12 12,28 11,5 11,2 11,4 11,-5 11,-6 12,-9 11,-11 11,-14 11,-15 11,3 11,10 11,10 12,4 11,5 11,-4 11,-20 11,-23 11,26 12,34 11,-4 11,-19 11,-5 11,7 11,7 11,5 12,3 11,1 11,-4 11,-9 11,-8 11,1 12,12 11,13 11,-6 11,-9 11,15 11,7 11,-26 12,-26 11,-3 11,5 11,8 11,11 11,11 12,11 11,8 11,5 11,0 11,-3 11,-1 11,-24 12,-29 11,-10 11,-10 11,-12 11,-11 11,-6 12,3 11,15 11,18 11,38 11,18 11,10V1704H125Z"/><path d="M125,1347l11,5 11,8 11,9 11,-3 11,-3 12,-4 11,-3 11,8 11,8 11,7 11,7 12,-5 11,-4 11,-5 11,-6 11,-8 11,-8 12,0 11,12 11,13 11,6 11,-5 11,-5 12,-6 11,4 11,3 11,1 11,0 11,-1 12,1 11,2 11,3 11,1 11,1 11,-2 12,-2 11,0 11,1 11,2 11,3 12,-4 11,-4 11,-10 11,-20 11,-29 11,-15 12,-13 11,-10 11,-3 11,11 11,12 11,6 12,-5 11,1 11,2 11,11 11,12 11,10 12,11 11,12 11,20 11,32 11,22 11,-15 12,-5 11,7 11,-9 11,-11 11,0 11,10 12,8 11,8 11,6 11,4 11,3 11,3 12,8 11,11 11,14 11,22 11,21 12,17 11,-17 11,-20 11,-10 11,-4 12,-2 11,10 11,21 11,17 12,-13 11,-16 11,-11 11,-10 12,-12 11,-11 11,-10 11,-1 11,2 12,3 11,3 11,0 11,-3 12,13 11,20 11,37 11,0 11,-28 12,-9 11,-3 11,-4 11,-5 11,7 11,6 12,12 11,29 11,5 11,2 11,4 12,-5 11,-7 11,-9 11,-12 11,-14 11,-14 12,3 11,11 11,9 11,4 11,4 12,-3 11,-21 11,-23 11,27 11,35 11,-4 12,-19 11,-5 11,7 11,6 11,6 12,3 11,1 11,-3 11,-9 11,-8 11,1 12,12 11,13 11,-6 11,-10 11,16 12,7 11,-26 11,-26 11,-3 11,6 11,8 12,10 11,12 11,10 11,8 11,6 12,1 11,-3 11,-1 11,-25 11,-29 12,-11 11,-10 11,-13 11,-11 11,-6 11,3 12,16 11,19 11,39 11,18 11,10V1704H125Z"/><path d="M125,1349l11,5 11,9 11,9 11,-3 12,-4 11,-3 11,-3 11,8 11,8 12,8 11,7 11,-4 11,-5 11,-5 12,-6 11,-8 11,-8 11,0 11,12 12,13 11,5 11,-5 11,-5 11,-6 12,4 11,3 11,2 11,0 12,0 11,1 11,1 11,3 11,3 12,0 11,-1 11,-2 11,0 11,1 12,1 11,3 11,-5 11,-5 11,-12 12,-21 11,-29 11,-14 11,-13 11,-10 12,-3 11,12 11,13 11,6 11,-5 12,0 11,2 11,12 11,11 11,10 12,11 11,12 11,22 11,32 12,23 11,-15 11,-5 11,8 11,-9 12,-12 11,0 11,9 11,9 11,7 12,7 11,4 11,3 11,4 11,7 12,11 11,14 11,22 11,22 11,17 12,-18 11,-21 11,-11 11,-4 12,-2 11,11 11,21 11,17 12,-13 11,-17 11,-11 11,-11 11,-11 12,-11 11,-9 11,-1 11,2 12,3 11,2 11,1 11,-3 11,13 12,22 11,37 11,0 11,-28 12,-10 11,-3 11,-4 11,-5 11,7 12,6 11,13 11,30 11,5 11,2 12,3 11,-5 11,-7 11,-10 11,-11 12,-14 11,-15 11,4 11,11 12,9 11,4 11,4 11,-4 11,-21 12,-23 11,27 11,36 11,-3 11,-19 12,-5 11,6 11,7 11,6 12,3 11,2 11,-4 11,-8 11,-8 12,1 11,12 11,14 11,-8 11,-10 12,17 11,7 11,-26 11,-26 11,-3 12,6 11,8 11,11 11,11 12,11 11,8 11,6 11,1 11,-2 12,-1 11,-25 11,-31 11,-11 11,-11 12,-13 11,-12 11,-5 11,4 11,17 12,18 11,41 11,18 11,10V1704H125Z"/><path d="M124,1349l12,5 11,9 11,9 11,-3 12,-4 11,-3 11,-3 11,8 11,8 12,8 11,7 11,-4 11,-5 11,-5 12,-6 11,-8 11,-8 11,0 11,12 12,13 11,5 11,-5 11,-5 11,-6 12,4 11,3 11,2 11,0 11,0 12,1 11,1 11,3 11,2 12,1 11,-1 11,-2 11,0 11,2 12,1 11,2 11,-5 11,-5 11,-12 12,-22 11,-28 11,-14 11,-13 11,-10 12,-3 11,12 11,13 11,6 11,-5 12,0 11,2 11,12 11,12 11,10 12,11 11,11 11,21 11,33 11,23 12,-15 11,-4 11,7 11,-8 12,-12 11,-1 11,9 11,9 11,7 12,6 11,4 11,4 11,4 11,8 12,10 11,14 11,22 11,21 11,17 12,-18 11,-20 11,-10 11,-4 12,-2 11,10 11,21 11,17 11,-14 12,-16 11,-12 11,-10 11,-11 12,-10 11,-10 11,-1 11,2 12,3 11,2 11,0 11,-2 11,13 12,22 11,37 11,1 11,-29 11,-9 12,-4 11,-4 11,-6 11,8 12,6 11,14 11,29 11,6 11,1 12,3 11,-5 11,-8 11,-9 11,-12 12,-13 11,-15 11,5 11,10 12,10 11,3 11,4 11,-4 11,-21 12,-24 11,28 11,36 11,-3 11,-19 12,-5 11,6 11,7 11,5 11,4 12,1 11,-3 11,-8 11,-7 12,1 11,11 11,14 11,-8 11,-10 12,16 11,8 11,-26 11,-26 11,-2 12,5 11,8 11,11 11,11 11,10 12,9 11,6 11,1 11,-2 12,-1 11,-25 11,-30 11,-12 11,-11 12,-13 11,-12 11,-5 11,4 11,17 12,19 11,40 11,19 11,9V1704H124Z"/><path d="M124,1351l12,5 11,10 11,9 11,-3 12,-4 11,-3 11,-3 11,8 12,9 11,8 11,7 11,-4 12,-5 11,-5 11,-6 11,-7 12,-8 11,-1 11,12 11,13 12,5 11,-5 11,-6 11,-6 12,4 11,4 11,2 11,0 11,0 12,1 11,2 11,3 11,2 12,2 11,-2 11,-1 11,0 12,1 11,1 11,2 11,-6 12,-7 11,-13 11,-23 11,-28 12,-14 11,-12 11,-10 11,-3 12,13 11,13 11,7 11,-6 12,0 11,3 11,12 11,12 12,10 11,10 11,12 11,21 12,34 11,24 11,-15 11,-4 12,9 11,-9 11,-13 11,-1 11,9 12,8 11,7 11,7 11,4 12,4 11,4 11,8 11,11 12,13 11,22 11,22 11,17 12,-19 11,-21 11,-11 11,-3 12,-3 11,11 11,21 11,17 11,-15 12,-16 11,-12 11,-10 11,-11 12,-10 11,-9 11,-1 11,2 11,3 12,2 11,0 11,-2 11,14 12,22 11,38 11,1 11,-29 12,-10 11,-4 11,-5 11,-5 11,8 12,6 11,14 11,31 11,6 12,1 11,3 11,-6 11,-8 12,-10 11,-11 11,-14 11,-14 12,5 11,11 11,9 11,3 12,3 11,-4 11,-21 11,-24 12,28 11,38 11,-3 11,-19 11,-5 12,6 11,6 11,6 11,4 12,1 11,-3 11,-8 11,-6 12,0 11,12 11,13 11,-8 12,-10 11,17 11,7 11,-25 12,-26 11,-2 11,6 11,8 11,10 12,11 11,10 11,9 11,7 12,1 11,-1 11,-1 11,-26 12,-31 11,-12 11,-12 11,-13 12,-12 11,-5 11,4 11,18 12,20 11,41 11,18 11,10V1704H124Z"/><path d="M124,1351l12,5 11,10 11,9 11,-3 12,-4 11,-3 11,-3 11,8 12,9 11,8 11,7 11,-4 12,-5 11,-5 11,-6 11,-7 12,-8 11,-1 11,12 11,13 12,5 11,-5 11,-6 11,-6 11,4 12,4 11,2 11,0 11,0 12,1 11,2 11,3 11,2 12,1 11,-1 11,-1 11,0 12,2 11,0 11,2 11,-6 12,-7 11,-13 11,-23 11,-28 12,-13 11,-13 11,-10 11,-3 12,13 11,13 11,6 11,-5 12,0 11,3 11,12 11,12 12,10 11,11 11,11 11,21 11,33 12,24 11,-14 11,-4 11,9 12,-9 11,-12 11,-1 11,8 12,8 11,7 11,6 11,5 12,4 11,5 11,7 11,11 12,13 11,22 11,22 12,17 11,-19 11,-20 12,-11 11,-3 11,-2 12,11 11,21 11,17 12,-15 11,-17 11,-11 12,-9 11,-11 11,-10 12,-9 11,-1 11,3 12,2 11,2 12,0 11,-1 11,14 11,23 12,39 11,1 11,-30 12,-10 11,-4 11,-5 11,-6 12,9 11,7 11,14 11,31 12,6 11,2 11,2 11,-6 12,-9 11,-9 11,-12 12,-14 11,-14 11,5 11,12 12,9 11,3 11,3 11,-5 12,-22 11,-23 11,29 11,38 12,-2 11,-20 11,-5 12,6 11,7 11,5 11,4 12,2 11,-2 11,-8 11,-7 12,1 11,12 11,13 11,-8 12,-11 11,17 11,8 12,-26 11,-26 11,-2 11,7 12,8 11,10 11,11 11,11 12,8 11,7 11,2 12,-1 11,-1 11,-26 11,-32 12,-13 11,-12 11,-14 11,-12 12,-5 11,5 11,19 11,20 12,43 11,18 11,9V1704H124Z"/><path d="M124,1354l12,5 11,9 11,10 11,-3 12,-4 11,-4 11,-3 12,9 11,9 11,9 11,7 12,-4 11,-5 11,-5 12,-6 11,-7 11,-8 11,-1 12,12 11,13 11,4 12,-5 11,-6 11,-6 11,4 12,4 11,3 11,0 11,1 12,1 11,1 11,3 12,3 11,2 11,-1 11,-1 12,0 11,1 11,0 12,2 11,-7 11,-9 11,-14 12,-24 11,-28 11,-13 12,-12 11,-10 11,-2 11,13 12,14 11,6 11,-6 11,0 12,3 11,13 11,12 12,10 11,10 11,12 11,21 12,35 11,25 11,-15 12,-3 11,10 11,-9 11,-14 12,-2 11,9 11,7 12,7 11,7 11,5 11,4 12,5 11,8 11,10 11,14 12,21 11,22 11,17 11,-20 12,-21 11,-11 11,-3 11,-2 12,10 11,21 11,17 11,-16 12,-17 11,-12 11,-9 11,-11 11,-9 12,-9 11,-1 11,2 11,2 11,2 12,0 11,-2 11,15 11,24 12,39 11,0 11,-29 12,-11 11,-4 11,-5 11,-6 12,8 11,7 11,15 11,32 12,6 11,1 11,2 11,-7 12,-8 11,-10 11,-11 12,-14 11,-14 11,6 11,11 12,9 11,3 11,3 11,-5 12,-22 11,-24 11,30 11,38 12,-2 11,-19 11,-5 12,5 11,7 11,5 11,4 12,2 11,-2 11,-8 11,-6 12,1 11,11 11,13 11,-8 12,-12 11,17 11,9 12,-26 11,-26 11,-1 11,6 12,8 11,10 11,11 11,10 12,9 11,7 11,2 11,-1 12,0 11,-26 11,-32 12,-14 11,-12 11,-14 11,-12 12,-5 11,5 11,19 11,21 12,42 11,18 11,9V1704H124Z"/><path d="M124,1354l12,5 11,9 11,10 11,-3 12,-4 11,-4 11,-3 12,9 11,9 11,9 11,7 12,-4 11,-5 11,-5 12,-6 11,-7 11,-8 11,-1 12,12 11,13 11,4 11,-5 12,-7 11,-5 11,4 12,4 11,3 11,1 11,0 12,1 11,1 11,3 12,3 11,2 11,-1 11,-1 12,1 11,1 11,0 12,1 11,-7 11,-9 11,-15 12,-23 11,-28 11,-13 11,-12 12,-10 11,-2 11,13 12,13 11,6 11,-5 11,0 12,3 11,13 11,12 12,10 11,11 11,11 11,21 12,34 11,25 11,-14 12,-3 11,10 11,-9 11,-14 12,-1 11,7 11,8 11,7 12,6 11,6 11,4 12,5 11,8 11,11 11,13 12,21 11,21 11,18 12,-20 11,-20 11,-11 12,-3 11,-2 11,11 12,21 11,16 11,-15 12,-18 11,-11 12,-9 11,-10 11,-9 12,-9 11,-1 11,2 12,2 11,2 11,0 12,-1 11,15 11,25 12,39 11,1 11,-30 12,-11 11,-5 11,-5 11,-6 12,9 11,7 11,16 12,32 11,6 11,1 11,2 12,-7 11,-9 11,-10 12,-12 11,-13 11,-13 12,5 11,12 11,9 11,2 12,3 11,-5 11,-23 12,-23 11,30 11,39 11,-1 12,-20 11,-5 11,6 12,6 11,5 11,4 12,3 11,-2 11,-8 11,-6 12,1 11,12 11,13 12,-9 11,-12 11,17 12,9 11,-26 11,-25 11,-2 12,7 11,8 11,10 12,10 11,11 11,9 11,7 12,3 11,-1 11,0 12,-26 11,-33 11,-14 12,-13 11,-15 11,-12 11,-5 12,6 11,20 11,21 12,43 11,19 11,9V1704H124Z"/><path d="M124,1356l12,5 11,10 11,10 12,-3 11,-4 11,-4 12,-3 11,9 11,9 11,9 12,8 11,-4 11,-5 12,-5 11,-6 11,-7 12,-8 11,-1 11,12 12,13 11,4 11,-6 12,-7 11,-5 11,4 12,4 11,4 11,1 11,0 12,1 11,1 11,4 12,3 11,2 11,0 12,-1 11,0 11,1 12,0 11,0 11,-8 12,-10 11,-16 11,-24 12,-27 11,-13 11,-12 11,-11 12,-1 11,14 11,14 12,6 11,-6 11,0 12,3 11,14 11,12 12,10 11,10 11,11 12,22 11,35 11,26 12,-14 11,-3 11,11 12,-9 11,-14 11,-3 11,8 12,7 11,7 11,7 12,5 11,5 11,5 12,8 11,11 11,13 12,21 11,22 11,17 12,-20 11,-22 11,-10 12,-3 11,-2 11,10 12,21 11,17 11,-16 12,-18 11,-12 11,-8 12,-10 11,-9 11,-8 12,-1 11,1 12,3 11,1 11,1 12,-1 11,15 11,25 12,41 11,1 11,-31 12,-11 11,-5 11,-6 12,-6 11,9 11,8 11,16 12,33 11,6 11,1 12,2 11,-7 11,-10 12,-10 11,-12 11,-13 12,-13 11,6 11,11 12,9 11,3 11,2 12,-5 11,-23 11,-24 12,31 11,40 11,-1 12,-20 11,-5 11,6 12,6 11,5 11,4 12,3 11,-2 11,-7 12,-6 11,1 11,12 11,13 12,-10 11,-12 11,18 12,9 11,-25 11,-26 12,-1 11,6 11,9 12,10 11,10 11,10 12,10 11,8 11,3 12,-1 11,0 11,-27 12,-34 11,-14 11,-14 12,-14 11,-13 11,-5 12,7 11,20 11,22 12,44 11,19 11,9V1704H124Z"/><path d="M124,1356l12,5 11,10 11,10 12,-3 11,-4 11,-4 11,-3 12,9 11,9 11,9 12,8 11,-4 11,-5 12,-5 11,-6 11,-7 12,-8 11,-1 11,12 12,13 11,4 11,-6 12,-7 11,-6 11,5 11,5 12,3 11,1 11,0 12,1 11,1 11,3 12,4 11,2 11,0 12,-1 11,1 11,1 12,-1 11,0 11,-8 12,-10 11,-16 11,-24 12,-27 11,-13 11,-12 11,-10 12,-2 11,14 11,14 12,6 11,-7 11,1 12,3 11,14 11,12 12,10 11,10 11,11 12,22 11,35 11,26 12,-14 11,-2 11,11 11,-10 12,-14 11,-2 11,7 12,7 11,7 11,7 12,5 11,5 11,6 12,8 11,10 11,13 12,21 11,21 11,18 12,-20 11,-22 11,-10 12,-3 11,-2 11,11 12,20 11,17 11,-17 12,-18 11,-11 11,-9 12,-9 11,-9 11,-8 12,-1 11,2 12,1 11,2 11,0 12,-1 11,16 11,25 12,41 11,1 11,-30 12,-12 11,-5 11,-6 11,-6 12,9 11,8 11,16 12,34 11,6 11,1 12,1 11,-8 11,-9 12,-10 11,-12 11,-13 12,-13 11,6 11,12 12,9 11,2 11,2 12,-6 11,-23 11,-24 12,32 11,40 11,-1 12,-19 11,-6 11,6 12,5 11,6 11,4 12,3 11,-2 11,-6 11,-6 12,1 11,12 11,12 12,-10 11,-12 11,17 12,10 11,-26 11,-25 12,-1 11,7 11,8 12,10 11,10 11,10 12,9 11,8 11,4 12,-1 11,1 11,-27 12,-34 11,-15 11,-14 12,-15 11,-12 11,-5 12,7 11,21 11,21 12,45 11,18 11,9V1704H124Z"/><path d="M124,1358l12,5 11,11 11,10 12,-3 11,-5 11,-3 12,-4 11,10 11,10 12,9 11,9 11,-5 12,-5 11,-5 12,-5 11,-8 11,-8 12,-1 11,12 11,13 12,3 11,-6 11,-7 12,-6 11,5 11,5 12,4 11,1 11,0 12,1 11,2 12,3 11,4 11,2 12,0 11,0 11,0 12,1 11,-1 11,0 12,-9 11,-11 11,-18 12,-26 11,-26 11,-12 12,-12 11,-11 12,-1 11,15 11,14 12,6 11,-6 11,0 12,4 11,13 11,13 12,10 11,10 11,11 12,22 11,36 11,27 12,-14 11,-2 12,12 11,-10 11,-15 12,-3 11,8 11,7 12,6 11,7 11,6 12,5 11,6 11,8 12,10 11,13 12,21 11,22 11,17 12,-21 11,-22 11,-10 12,-3 11,-2 11,10 12,21 11,16 11,-17 12,-18 11,-12 11,-8 12,-9 11,-9 11,-8 12,-1 11,2 11,1 12,2 11,0 11,0 12,16 11,26 11,42 12,1 11,-31 12,-12 11,-6 11,-6 12,-6 11,9 11,9 12,16 11,34 11,7 12,0 11,2 11,-9 12,-9 11,-11 11,-12 12,-12 11,-13 12,6 11,12 11,9 12,2 11,1 11,-5 12,-24 11,-24 11,32 12,42 11,-1 11,-20 12,-5 11,5 11,6 12,5 11,4 11,4 12,-1 11,-7 12,-5 11,1 11,11 12,13 11,-10 11,-13 12,18 11,10 11,-26 12,-25 11,-1 11,7 12,8 11,10 11,10 12,10 11,10 12,8 11,4 11,0 12,0 11,-27 11,-35 12,-15 11,-15 11,-15 12,-13 11,-4 11,7 12,22 11,22 11,45 12,19 11,8V1704H124Z"/><path d="M124,1358l12,5 11,11 11,10 12,-3 11,-5 11,-3 12,-4 11,10 11,10 12,9 11,8 11,-4 12,-5 11,-5 11,-5 12,-8 11,-8 12,-1 11,12 11,13 12,3 11,-6 11,-7 12,-6 11,5 11,5 12,4 11,1 11,1 12,0 11,1 11,4 12,3 11,3 12,0 11,0 11,1 12,1 11,-1 11,-1 12,-9 11,-12 11,-17 12,-26 11,-26 11,-12 12,-12 11,-10 12,-2 11,15 11,14 12,6 11,-7 11,1 12,4 11,14 11,12 12,10 11,10 11,11 12,21 11,36 11,28 12,-14 11,-2 12,12 11,-9 11,-15 12,-3 11,7 11,6 12,7 11,7 11,6 12,5 11,6 11,9 12,10 11,12 11,21 12,21 11,18 12,-21 11,-22 12,-9 11,-3 12,-2 11,11 12,20 11,17 11,-18 12,-18 11,-11 12,-8 11,-9 12,-8 11,-8 12,-1 11,2 12,1 11,2 12,0 11,0 12,17 11,26 11,43 12,1 11,-32 12,-12 11,-6 11,-7 12,-6 11,10 11,9 12,17 11,35 12,6 11,1 11,1 12,-9 11,-10 11,-11 12,-12 11,-12 12,-13 11,7 11,12 12,9 11,1 12,2 11,-6 11,-24 12,-24 11,32 11,43 12,0 11,-20 12,-6 11,6 11,5 12,5 11,5 11,3 12,0 11,-6 12,-6 11,1 11,12 12,12 11,-10 11,-13 12,18 11,10 12,-25 11,-26 11,0 12,7 11,8 12,10 11,9 11,11 12,9 11,9 11,4 12,1 11,0 12,-27 11,-36 11,-16 12,-15 11,-15 11,-13 12,-4 11,7 12,23 11,23 11,45 12,19 11,9V1704H124Z"/><path d="M124,1360l12,5 11,11 11,11 12,-4 11,-4 11,-4 12,-3 11,10 12,10 11,10 11,9 12,-5 11,-5 12,-5 11,-5 11,-8 12,-8 11,-2 12,13 11,12 11,4 12,-7 11,-7 12,-6 11,5 11,5 12,5 11,1 11,1 12,1 11,1 12,3 11,4 11,4 12,0 11,0 12,0 11,1 11,-1 12,-1 11,-10 12,-13 11,-19 11,-27 12,-26 11,-12 11,-11 12,-11 11,-1 12,15 11,16 11,6 12,-7 11,0 12,4 11,14 11,13 12,10 11,10 12,11 11,21 11,37 12,29 11,-14 12,-2 11,14 11,-10 12,-16 11,-4 11,7 12,7 11,6 12,7 11,6 11,6 12,6 11,9 12,10 11,12 11,21 12,21 11,18 11,-22 12,-22 11,-11 11,-2 12,-2 11,10 12,21 11,16 11,-19 12,-19 11,-11 11,-8 12,-8 11,-9 11,-7 12,-1 11,1 11,1 12,1 11,1 11,0 12,17 11,26 11,43 12,1 11,-31 12,-13 11,-6 11,-7 12,-6 11,10 11,9 12,17 11,35 12,7 11,0 11,1 12,-9 11,-10 11,-11 12,-12 11,-12 12,-13 11,7 11,13 12,8 11,1 11,2 12,-7 11,-23 12,-24 11,32 11,43 12,0 11,-20 12,-5 11,5 11,5 12,5 11,4 11,4 12,0 11,-6 12,-6 11,2 11,11 12,12 11,-11 11,-13 12,18 11,11 12,-26 11,-25 11,0 12,7 11,8 11,10 12,9 11,10 12,10 11,9 11,4 12,1 11,1 12,-28 11,-36 11,-16 12,-15 11,-16 11,-13 12,-4 11,8 12,23 11,23 11,46 12,19 11,8V1704H124Z"/><path d="M124,1360l12,5 11,11 11,11 12,-4 11,-4 11,-4 12,-3 11,10 12,10 11,10 11,8 12,-4 11,-5 12,-5 11,-5 11,-8 12,-8 11,-2 12,13 11,12 11,4 12,-7 11,-7 11,-6 12,5 11,5 12,5 11,1 11,1 12,1 11,1 12,3 11,4 11,4 12,0 11,0 12,1 11,1 11,-2 12,-2 11,-10 12,-13 11,-19 11,-26 12,-26 11,-11 11,-12 12,-10 11,-1 12,14 11,15 11,6 12,-7 11,1 12,4 11,15 11,13 12,9 11,10 12,10 11,22 11,37 12,28 11,-14 11,0 12,13 11,-10 12,-16 11,-3 11,6 12,6 11,7 12,6 11,7 11,6 12,7 11,8 12,10 11,12 11,21 12,21 11,18 12,-22 11,-22 12,-10 11,-2 12,-2 11,10 11,21 12,16 11,-18 12,-19 11,-12 12,-7 11,-8 12,-8 11,-8 12,-1 11,1 12,2 11,1 12,0 11,0 11,18 12,27 11,44 12,1 11,-32 12,-13 11,-7 11,-7 12,-6 11,10 12,10 11,18 11,35 12,7 11,0 12,1 11,-10 11,-10 12,-11 11,-12 12,-12 11,-13 11,8 12,12 11,9 12,1 11,1 12,-7 11,-24 11,-24 12,33 11,44 12,0 11,-20 11,-5 12,5 11,5 12,5 11,4 11,4 12,0 11,-5 12,-6 11,2 11,11 12,12 11,-11 12,-14 11,19 11,11 12,-26 11,-25 12,0 11,8 12,8 11,9 11,9 12,11 11,9 12,9 11,5 11,1 12,1 11,-28 12,-36 11,-17 11,-16 12,-16 11,-13 12,-4 11,9 11,23 12,24 11,46 12,19 11,8V1704H124Z"/><path d="M124,1362l12,6 11,11 11,11 12,-4 11,-4 12,-4 11,-3 11,10 12,10 11,10 12,9 11,-4 12,-5 11,-5 11,-5 12,-8 11,-8 12,-2 11,13 12,12 11,3 11,-7 12,-7 11,-6 12,5 11,5 12,6 11,1 11,1 12,1 11,1 12,4 11,4 12,4 11,0 11,1 12,0 11,1 12,-2 11,-2 12,-11 11,-14 11,-21 12,-27 11,-26 12,-11 11,-11 12,-11 11,0 11,15 12,16 11,6 12,-8 11,1 12,4 11,15 11,13 12,10 11,10 12,10 11,22 12,38 11,29 11,-14 12,0 11,14 12,-10 11,-16 12,-5 11,7 11,6 12,6 11,7 12,6 11,7 12,7 11,8 11,11 12,11 11,21 12,21 11,18 12,-23 11,-22 12,-10 11,-3 11,-2 12,11 11,20 12,16 11,-19 12,-20 11,-11 12,-8 11,-7 12,-8 11,-7 12,-1 11,1 12,1 11,1 11,0 12,1 11,18 12,28 11,44 12,1 11,-32 12,-14 11,-7 11,-7 12,-6 11,10 12,10 11,18 12,36 11,7 11,0 12,1 11,-10 12,-11 11,-11 12,-12 11,-12 12,-12 11,8 11,12 12,9 11,0 12,1 11,-7 12,-24 11,-24 11,34 12,44 11,1 12,-20 11,-6 12,5 11,5 11,5 12,4 11,5 12,0 11,-5 12,-5 11,1 12,12 11,11 11,-11 12,-14 11,18 12,11 11,-25 12,-25 11,1 11,7 12,8 11,9 12,10 11,10 12,10 11,9 12,5 11,2 11,1 12,-28 11,-37 12,-18 11,-16 12,-16 11,-14 11,-3 12,8 11,24 12,25 11,47 12,19 11,8V1704H124Z"/><path d="M124,1362l11,6 12,11 11,11 12,-4 11,-4 12,-4 11,-3 11,10 12,10 11,10 12,9 11,-4 12,-5 11,-5 11,-5 12,-8 11,-8 12,-2 11,13 12,12 11,3 11,-7 12,-7 11,-6 12,5 11,6 12,5 11,2 11,0 12,1 11,1 12,3 11,5 12,4 11,0 11,1 12,1 11,1 12,-3 11,-2 12,-11 11,-15 11,-20 12,-27 11,-26 12,-11 11,-11 12,-10 11,-1 11,15 12,15 11,6 12,-7 11,1 12,4 11,15 11,14 12,9 11,10 12,10 11,22 12,37 11,30 11,-14 12,0 11,14 12,-9 11,-17 11,-4 12,5 11,6 12,6 11,7 12,7 11,7 11,7 12,9 11,10 12,12 11,20 12,21 11,17 12,-22 11,-22 11,-10 12,-2 11,-2 12,10 11,20 12,16 11,-20 12,-19 11,-11 12,-8 11,-7 12,-8 11,-7 12,-1 11,1 11,1 12,0 11,1 12,0 11,19 12,28 11,44 12,2 11,-33 12,-13 11,-8 11,-7 12,-7 11,11 12,10 11,19 12,36 11,7 11,0 12,0 11,-10 12,-11 11,-12 12,-11 11,-12 11,-12 12,8 11,13 12,8 11,0 12,1 11,-7 12,-24 11,-25 11,35 12,45 11,0 12,-20 11,-6 12,5 11,5 11,4 12,5 11,4 12,1 11,-5 12,-5 11,1 12,12 11,12 11,-13 12,-14 11,19 12,11 11,-25 12,-25 11,1 11,8 12,7 11,9 12,9 11,10 12,10 11,10 11,5 12,2 11,1 12,-28 11,-37 12,-18 11,-16 12,-17 11,-13 11,-3 12,8 11,25 12,24 11,47 12,19 11,8V1704H124Z"/><path d="M124,1364l11,6 12,11 11,12 12,-4 11,-4 12,-4 11,-4 12,11 11,10 12,11 11,9 12,-5 11,-5 11,-5 12,-4 11,-8 12,-8 11,-2 12,12 11,13 12,3 11,-8 12,-7 11,-7 12,6 11,6 12,5 11,3 11,0 12,1 11,1 12,4 11,4 12,5 11,1 12,1 11,0 12,1 11,-3 12,-2 11,-12 11,-16 12,-22 11,-28 12,-25 11,-11 12,-11 11,-11 12,0 11,16 12,16 11,6 12,-8 11,1 12,4 11,16 11,13 12,10 11,10 12,10 11,22 12,38 11,31 12,-14 11,0 12,16 11,-10 12,-18 11,-5 11,6 12,6 11,6 12,7 11,7 12,7 11,7 12,9 11,10 12,12 11,20 12,21 11,17 11,-23 12,-23 11,-10 12,-2 11,-2 12,10 11,20 12,15 11,-20 12,-20 11,-11 12,-7 11,-8 12,-7 11,-7 11,-1 12,0 11,1 12,1 11,0 12,1 11,18 12,29 11,45 12,1 11,-32 12,-14 11,-8 11,-7 12,-7 11,11 12,10 11,19 12,37 11,7 12,0 11,0 12,-11 11,-11 12,-12 11,-11 11,-12 12,-11 11,8 12,13 11,8 12,0 11,0 12,-7 11,-25 12,-24 11,35 12,46 11,0 12,-19 11,-7 11,5 12,4 11,5 12,5 11,4 12,1 11,-5 12,-4 11,1 12,12 11,11 12,-13 11,-14 11,19 12,11 11,-24 12,-25 11,1 12,8 11,7 12,9 11,9 12,10 11,10 12,10 11,5 12,2 11,2 11,-28 12,-38 11,-18 12,-17 11,-17 12,-13 11,-3 12,9 11,25 12,24 11,48 12,19 11,7V1704H124Z"/></g><line x1="31" y1="339.3" x2="545" y2="339.3" stroke="#c4c0a8" stroke-width="0.8"/>
<line x1="501.6" y1="333" x2="544" y2="339.2" stroke="#5050ff" stroke-width="0.6"/>
<line x1="33.2" y1="265" x2="33.2" y2="284" stroke="#4646ff" stroke-width="0.9"/></g></svg>
<div class="a" style="left:33.2px;top:288.7px;width:10.0px;height:5.8px;background:rgba(225,225,235,.78)"></div><div class="t" style="left:38.2px;top:291px;font-size:4.8px;color:#222;transform:translateX(-50%);">60</div>
<div class="a" style="left:33.2px;top:296.3px;width:10.0px;height:5.8px;background:rgba(225,225,235,.78)"></div><div class="t" style="left:38.2px;top:299px;font-size:4.8px;color:#222;transform:translateX(-50%);">120</div>
<div class="a" style="left:33.2px;top:304.1px;width:10.0px;height:5.8px;background:rgba(225,225,235,.78)"></div><div class="t" style="left:38.2px;top:307px;font-size:4.8px;color:#222;transform:translateX(-50%);">180</div>
<div class="a" style="left:33.2px;top:312.1px;width:10.0px;height:5.8px;background:rgba(225,225,235,.78)"></div><div class="t" style="left:38.2px;top:315px;font-size:4.8px;color:#222;transform:translateX(-50%);">240</div>
<div class="a" style="left:33.2px;top:320.1px;width:10.0px;height:5.8px;background:rgba(225,225,235,.78)"></div><div class="t" style="left:38.2px;top:323px;font-size:4.8px;color:#222;transform:translateX(-50%);">300</div>
<div class="a" style="left:480.2px;top:296.4px;width:10.0px;height:5.8px;background:rgba(225,225,235,.78)"></div><div class="t" style="left:485.2px;top:299px;font-size:4.8px;color:#222;transform:translateX(-50%);">120</div>
<div class="a" style="left:498.0px;top:303.5px;width:10.0px;height:5.8px;background:rgba(225,225,235,.78)"></div><div class="t" style="left:503.0px;top:306px;font-size:4.8px;color:#222;transform:translateX(-50%);">180</div>
<div class="a" style="left:516.0px;top:312.1px;width:10.0px;height:5.8px;background:rgba(225,225,235,.78)"></div><div class="t" style="left:521.0px;top:315px;font-size:4.8px;color:#222;transform:translateX(-50%);">240</div>
<div class="a" style="left:533.5px;top:320.2px;width:10.0px;height:5.8px;background:rgba(225,225,235,.78)"></div><div class="t" style="left:538.5px;top:323px;font-size:4.8px;color:#222;transform:translateX(-50%);">300</div>
<div class="a" style="left:524.7px;top:265.5px;width:19.0px;height:5.3px;background:#fff;border:0.5px solid #c8c8c8"></div>
<div class="t" style="left:534.2px;top:268px;font-size:4.7px;color:#222;transform:translateX(-50%);">300ms</div>
<div class="t" style="left:29.3px;top:263px;font-size:5.0px;color:#333;transform:translateX(-100%);">90</div>
<div class="t" style="left:29.3px;top:279px;font-size:5.0px;color:#333;transform:translateX(-100%);">80</div>
<div class="t" style="left:29.3px;top:295px;font-size:5.0px;color:#333;transform:translateX(-100%);">70</div>
<div class="t" style="left:29.3px;top:311px;font-size:5.0px;color:#333;transform:translateX(-100%);">60</div>
<div class="t" style="left:29.3px;top:327px;font-size:5.0px;color:#333;transform:translateX(-100%);">50</div>
<div class="t" style="left:29.3px;top:343px;font-size:5.0px;color:#333;transform:translateX(-100%);">40</div>
<div class="t" style="left:29.3px;top:359px;font-size:5.0px;color:#333;transform:translateX(-100%);">30</div>
<div class="t" style="left:29.3px;top:375px;font-size:5.0px;color:#333;transform:translateX(-100%);">20</div>
<div class="t" style="left:29.3px;top:391px;font-size:5.0px;color:#333;transform:translateX(-100%);">10</div>
<div class="t" style="left:29.3px;top:407px;font-size:5.0px;color:#333;transform:translateX(-100%);">0</div>
<div class="t" style="left:29.3px;top:423px;font-size:5.0px;color:#333;transform:translateX(-100%);">-10</div>
<div class="t" style="left:24.0px;top:260px;font-size:4.2px;color:#333;">dB</div>
<div class="t" style="left:88.5px;top:428px;font-size:5.0px;color:#333;transform:translateX(-50%);">40</div>
<div class="t" style="left:132.7px;top:428px;font-size:5.0px;color:#333;transform:translateX(-50%);">50</div>
<div class="t" style="left:168.8px;top:428px;font-size:5.0px;color:#333;transform:translateX(-50%);">60</div>
<div class="t" style="left:199.3px;top:428px;font-size:5.0px;color:#333;transform:translateX(-50%);">70</div>
<div class="t" style="left:225.7px;top:428px;font-size:5.0px;color:#333;transform:translateX(-50%);">80</div>
<div class="t" style="left:249.1px;top:428px;font-size:5.0px;color:#333;transform:translateX(-50%);">90</div>
<div class="t" style="left:269.9px;top:428px;font-size:5.0px;color:#333;transform:translateX(-50%);">100</div>
<div class="t" style="left:407.2px;top:428px;font-size:5.0px;color:#333;transform:translateX(-50%);">200</div>
<div class="t" style="left:487.5px;top:428px;font-size:5.0px;color:#333;transform:translateX(-50%);">300</div>
<div class="t" style="left:551.0px;top:428px;font-size:5.0px;color:#333;transform:translateX(-100%);">400Hz</div>
<div class="a" style="left:23.5px;top:427.0px;width:12.5px;height:6.0px;background:#fff;border:0.6px solid #5b5bff"></div>
<div class="t" style="left:29.8px;top:430px;font-size:4.6px;color:#3a3aff;transform:translateX(-50%);">30.00</div>
<div class="a" style="left:18.5px;top:336.4px;width:13.0px;height:6.0px;background:#fff;border:0.6px solid #5b5bff"></div>
<div class="t" style="left:25.0px;top:339px;font-size:4.8px;color:#3a3aff;transform:translateX(-50%);">41.6</div>
<div class="a" style="left:2.0px;top:264.6px;width:7.0px;height:160.1px;background:#fff;border:1px solid #b0b0b0"></div><div class="a" style="left:2.0px;top:291.5px;width:7.0px;height:46.2px;background:linear-gradient(90deg,#d8d8d8,#e6e6e6,#d0d0d0);border:1px solid #b8b8b8"></div><div class="a" style="left:2.0px;top:264.6px;width:7.0px;height:7.0px;background:linear-gradient(#f4f4f4,#d8d8d8);border:1px solid #a8a8a8"></div><div class="a" style="left:2.0px;top:417.7px;width:7.0px;height:7.0px;background:linear-gradient(#f4f4f4,#d8d8d8);border:1px solid #a8a8a8"></div><svg class="a" style="left:2px;top:264.6px" width="7" height="160.09999999999997"><path d="M2.0,4.3 L5.0,4.3 L3.5,2.6Z M2.0,155.79999999999995 L5.0,155.79999999999995 L3.5,157.49999999999997Z" fill="#333"/></svg>
<div class="a" style="left:31.5px;top:434.5px;width:513.0px;height:6.5px;background:#fff;border:1px solid #b0b0b0"></div><div class="a" style="left:179.0px;top:434.5px;width:134.0px;height:6.5px;background:linear-gradient(#d8d8d8,#e6e6e6,#d0d0d0);border:1px solid #b8b8b8"></div><div class="a" style="left:31.5px;top:434.5px;width:7.0px;height:6.5px;background:linear-gradient(#f4f4f4,#d8d8d8);border:1px solid #a8a8a8"></div><svg class="a" style="left:31.5px;top:434.5px" width="7" height="6.5"><path d="M4.3,1.75 L4.3,4.75 L2.6,3.25Z" fill="#333"/></svg><div class="a" style="left:537.5px;top:434.5px;width:7.0px;height:6.5px;background:linear-gradient(#f4f4f4,#d8d8d8);border:1px solid #a8a8a8"></div><svg class="a" style="left:537.5px;top:434.5px" width="7" height="6.5"><path d="M2.7,1.75 L2.7,4.75 L4.4,3.25Z" fill="#333"/></svg>
<div class="a" style="left:138.0px;top:442.3px;width:300.0px;height:11.2px;background:#fff;border:1px solid #b8b8b8"></div>
<div class="a" style="left:142.0px;top:445.2px;width:5.4px;height:5.4px;background:linear-gradient(#fdfdfd,#f0f0f0);border:0.5px solid #c4c4c4;border-radius:1px;box-shadow:0 0.3px 0.6px rgba(0,0,0,.18)"></div>
<div class="t" style="left:150.0px;top:446px;font-size:5.0px;color:#3a3aff;">20180926_CML_LR</div>
<div class="t" style="left:248.0px;top:446px;font-size:5.0px;color:#3a3aff;">42.9 dB</div>
<div class="a" style="left:289.5px;top:444.9px;width:6.0px;height:6.0px;background:linear-gradient(#6cb3fa,#2f86f0);border:0.5px solid #2a6fd0;border-radius:1.5px"></div><svg class="a" style="left:289.5px;top:444.9px" width="6" height="6"><path d="M1.32,3.12 L2.52,4.5 L4.800000000000001,1.32" fill="none" stroke="#fff" stroke-width="0.9"/></svg>
<div class="t" style="left:298.0px;top:446px;font-size:5.0px;color:#3a3aff;">Predicted</div>
<div class="a" style="left:363.0px;top:447.4px;width:17.0px;height:1.2px;background:#7070ff"></div>
<div class="t" style="left:396.0px;top:446px;font-size:5.0px;color:#3a3aff;">42.8 dB</div>
<div class="a" style="left:556.0px;top:10.0px;width:1.0px;height:446.0px;background:#a8a8a8"></div><div class="a" style="left:557.0px;top:10.0px;width:186.0px;height:446.0px;background:linear-gradient(#e4e4e4 0px,#e4e4e4 180px,#dcdcdc 456px)"></div><div class="a" style="left:557.0px;top:10.0px;width:178.0px;height:10.5px;background:#f7f7f7"></div><svg class="a" style="left:734px;top:10.6px" width="9" height="9"><circle cx="4.8" cy="4.5" r="3.3" fill="#f4f4f4" stroke="#777" stroke-width="0.6"/><path d="M3.3,3 L6.3,6 M6.3,3 L3.3,6" stroke="#555" stroke-width="0.7"/></svg><div class="a" style="left:735.6px;top:20.6px;width:7.0px;height:435.4px;background:#fff;border:1px solid #b4b4b4"></div><div class="a" style="left:735.6px;top:20.6px;width:7.0px;height:6.3px;background:linear-gradient(#f4f4f4,#d8d8d8);border:1px solid #a8a8a8"></div><svg class="a" style="left:735.6px;top:20.6px" width="7" height="7"><path d="M2,4.3 L5,4.3 L3.5,2.5Z" fill="#333"/></svg><div class="a" style="left:735.6px;top:449.5px;width:7.0px;height:6.5px;background:linear-gradient(#f4f4f4,#d8d8d8);border:1px solid #a8a8a8"></div><svg class="a" style="left:735.6px;top:449.5px" width="7" height="7"><path d="M2,2.5 L5,2.5 L3.5,4.3Z" fill="#333"/></svg><div class="a" style="left:558.0px;top:20.6px;width:175.7px;height:10.3px;background:linear-gradient(#dadada,#c9c9c9);border-radius:2px 2px 0 0;border-bottom:0.5px solid #bbb"></div><div class="t" style="left:562.8px;top:23px;font-size:5.05px;color:#111;font-weight:bold;">Equaliser: MiniDSP</div><svg class="a" style="left:0;top:0" width="743" height="456"><circle cx="726.2" cy="25.75" r="3.2" fill="#d2d2d2" stroke="#b4b4b4" stroke-width="0.6"/><path d="M724.9000000000001,24.45 L726.2,25.75 L727.5,24.45 M724.9000000000001,26.05 L726.2,27.35 L727.5,26.05" stroke="#3a3a3a" stroke-width="0.85" fill="none"/></svg><div class="a" style="left:557.9px;top:33.7px;width:175.7px;height:142.0px;background:#e6e6e6;border:0.6px solid #c4c4c4;border-radius:2px"></div><div class="a" style="left:558.0px;top:33.7px;width:175.7px;height:11.0px;background:linear-gradient(#dadada,#c9c9c9);border-radius:2px 2px 0 0;border-bottom:0.5px solid #bbb"></div><div class="t" style="left:562.8px;top:37px;font-size:5.05px;color:#111;font-weight:bold;">Target Settings</div><svg class="a" style="left:0;top:0" width="743" height="456"><circle cx="726.2" cy="39.2" r="3.2" fill="#d2d2d2" stroke="#b4b4b4" stroke-width="0.6"/><path d="M724.9000000000001,38.900000000000006 L726.2,37.6 L727.5,38.900000000000006 M724.9000000000001,40.5 L726.2,39.2 L727.5,40.5" stroke="#3a3a3a" stroke-width="0.85" fill="none"/></svg><div class="t" style="left:562.1px;top:51px;font-size:5.15px;color:#1e1e1e;">Speaker Type:</div><div class="t" style="left:562.1px;top:61px;font-size:5.15px;color:#1e1e1e;">Crossover:</div><div class="t" style="left:562.1px;top:71px;font-size:5.15px;color:#1e1e1e;">Cutoff (Hz):</div><div class="t" style="left:562.1px;top:80px;font-size:5.15px;color:#1e1e1e;">LF Slope:</div><div class="t" style="left:562.1px;top:90px;font-size:5.15px;color:#1e1e1e;">LF Cutoff (Hz):</div><div class="t" style="left:562.1px;top:103px;font-size:5.15px;color:#1e1e1e;">LF Rise Start (Hz):</div><div class="t" style="left:562.1px;top:112px;font-size:5.15px;color:#1e1e1e;">LF Rise End (Hz):</div><div class="t" style="left:562.1px;top:122px;font-size:5.15px;color:#1e1e1e;">LF Rise Slope (dB/octave):</div><div class="t" style="left:562.1px;top:135px;font-size:5.15px;color:#1e1e1e;">HF Fall Start (Hz):</div><div class="t" style="left:562.1px;top:145px;font-size:5.15px;color:#1e1e1e;">HF Fall Slope (dB/octave):</div><div class="t" style="left:562.1px;top:158px;font-size:5.15px;color:#1e1e1e;">Target Level (dB):</div><div class="t" style="left:562.1px;top:166px;font-size:5.15px;color:#1e1e1e;">Set target level</div><div class="a" style="left:684.3px;top:49.2px;width:44.2px;height:8.8px;background:#fff;border:1px solid #aaa;box-shadow:inset 0 0.5px 0 #ddd"></div><div class="a" style="left:721.3px;top:49.2px;width:7.2px;height:8.8px;background:linear-gradient(#f0f0f0,#c8c8c8);border:1px solid #aaa"></div><svg class="a" style="left:721.3px;top:49.2px" width="7.2" height="8.8"><path d="M1.8,3.4000000000000004 L5.4,3.4000000000000004 L3.6,5.7Z" fill="#333"/></svg><div class="t" style="left:719.8px;top:51px;font-size:5.0px;color:#111;transform:translateX(-100%);">Full Range</div><div class="a" style="left:684.3px;top:77.7px;width:44.2px;height:8.8px;background:#fff;border:1px solid #aaa;box-shadow:inset 0 0.5px 0 #ddd"></div><div class="a" style="left:721.3px;top:77.7px;width:7.2px;height:8.8px;background:linear-gradient(#f0f0f0,#c8c8c8);border:1px solid #aaa"></div><svg class="a" style="left:721.3px;top:77.7px" width="7.2" height="8.8"><path d="M1.8,3.4000000000000004 L5.4,3.4000000000000004 L3.6,5.7Z" fill="#333"/></svg><div class="t" style="left:719.8px;top:80px;font-size:5.0px;color:#111;transform:translateX(-100%);">24dB/octave</div><div class="a" style="left:684.3px;top:87.7px;width:39.5px;height:8.8px;background:#fff;border:1px solid #aaa;box-shadow:inset 0 0.5px 0 #ddd"></div><div class="a" style="left:723.8px;top:87.7px;width:4.7px;height:4.4px;background:linear-gradient(#f6f6f6,#d8d8d8);border:0.5px solid #aaa"></div><div class="a" style="left:723.8px;top:92.1px;width:4.7px;height:4.4px;background:linear-gradient(#f6f6f6,#d8d8d8);border:0.5px solid #aaa"></div><svg class="a" style="left:723.8px;top:87.7px" width="4.7" height="8.8"><path d="M1.35,2.8000000000000003 L3.35,2.8000000000000003 L2.35,1.4000000000000001Z M1.35,6.000000000000001 L3.35,6.000000000000001 L2.35,7.4Z" fill="#444"/></svg><div class="t" style="left:721.8px;top:90px;font-size:5.0px;color:#111;transform:translateX(-100%);">10</div><div class="a" style="left:684.3px;top:100.5px;width:39.5px;height:8.8px;background:#fff;border:1px solid #aaa;box-shadow:inset 0 0.5px 0 #ddd"></div><div class="a" style="left:723.8px;top:100.5px;width:4.7px;height:4.4px;background:linear-gradient(#f6f6f6,#d8d8d8);border:0.5px solid #aaa"></div><div class="a" style="left:723.8px;top:104.9px;width:4.7px;height:4.4px;background:linear-gradient(#f6f6f6,#d8d8d8);border:0.5px solid #aaa"></div><svg class="a" style="left:723.8px;top:100.5px" width="4.7" height="8.8"><path d="M1.35,2.8000000000000003 L3.35,2.8000000000000003 L2.35,1.4000000000000001Z M1.35,6.000000000000001 L3.35,6.000000000000001 L2.35,7.4Z" fill="#444"/></svg><div class="t" style="left:721.8px;top:103px;font-size:5.0px;color:#111;transform:translateX(-100%);">100</div><div class="a" style="left:684.3px;top:109.9px;width:39.5px;height:8.8px;background:#fff;border:1px solid #aaa;box-shadow:inset 0 0.5px 0 #ddd"></div><div class="a" style="left:723.8px;top:109.9px;width:4.7px;height:4.4px;background:linear-gradient(#f6f6f6,#d8d8d8);border:0.5px solid #aaa"></div><div class="a" style="left:723.8px;top:114.3px;width:4.7px;height:4.4px;background:linear-gradient(#f6f6f6,#d8d8d8);border:0.5px solid #aaa"></div><svg class="a" style="left:723.8px;top:109.9px" width="4.7" height="8.8"><path d="M1.35,2.8000000000000003 L3.35,2.8000000000000003 L2.35,1.4000000000000001Z M1.35,6.000000000000001 L3.35,6.000000000000001 L2.35,7.4Z" fill="#444"/></svg><div class="t" style="left:721.8px;top:112px;font-size:5.0px;color:#111;transform:translateX(-100%);">20</div><div class="a" style="left:684.3px;top:119.9px;width:39.5px;height:8.8px;background:#fff;border:1px solid #aaa;box-shadow:inset 0 0.5px 0 #ddd"></div><div class="a" style="left:723.8px;top:119.9px;width:4.7px;height:4.4px;background:linear-gradient(#f6f6f6,#d8d8d8);border:0.5px solid #aaa"></div><div class="a" style="left:723.8px;top:124.3px;width:4.7px;height:4.4px;background:linear-gradient(#f6f6f6,#d8d8d8);border:0.5px solid #aaa"></div><svg class="a" style="left:723.8px;top:119.9px" width="4.7" height="8.8"><path d="M1.35,2.8000000000000003 L3.35,2.8000000000000003 L2.35,1.4000000000000001Z M1.35,6.000000000000001 L3.35,6.000000000000001 L2.35,7.4Z" fill="#444"/></svg><div class="t" style="left:721.8px;top:122px;font-size:5.0px;color:#111;transform:translateX(-100%);">1.8</div><div class="a" style="left:684.3px;top:132.8px;width:39.5px;height:8.8px;background:#fff;border:1px solid #aaa;box-shadow:inset 0 0.5px 0 #ddd"></div><div class="a" style="left:723.8px;top:132.8px;width:4.7px;height:4.4px;background:linear-gradient(#f6f6f6,#d8d8d8);border:0.5px solid #aaa"></div><div class="a" style="left:723.8px;top:137.2px;width:4.7px;height:4.4px;background:linear-gradient(#f6f6f6,#d8d8d8);border:0.5px solid #aaa"></div><svg class="a" style="left:723.8px;top:132.8px" width="4.7" height="8.8"><path d="M1.35,2.8000000000000003 L3.35,2.8000000000000003 L2.35,1.4000000000000001Z M1.35,6.000000000000001 L3.35,6.000000000000001 L2.35,7.4Z" fill="#444"/></svg><div class="t" style="left:721.8px;top:135px;font-size:5.0px;color:#111;transform:translateX(-100%);">1000</div><div class="a" style="left:684.3px;top:142.5px;width:39.5px;height:8.8px;background:#fff;border:1px solid #aaa;box-shadow:inset 0 0.5px 0 #ddd"></div><div class="a" style="left:723.8px;top:142.5px;width:4.7px;height:4.4px;background:linear-gradient(#f6f6f6,#d8d8d8);border:0.5px solid #aaa"></div><div class="a" style="left:723.8px;top:146.9px;width:4.7px;height:4.4px;background:linear-gradient(#f6f6f6,#d8d8d8);border:0.5px solid #aaa"></div><svg class="a" style="left:723.8px;top:142.5px" width="4.7" height="8.8"><path d="M1.35,2.8000000000000003 L3.35,2.8000000000000003 L2.35,1.4000000000000001Z M1.35,6.000000000000001 L3.35,6.000000000000001 L2.35,7.4Z" fill="#444"/></svg><div class="t" style="left:721.8px;top:145px;font-size:5.0px;color:#111;transform:translateX(-100%);">1.8</div><div class="a" style="left:684.3px;top:155.3px;width:39.5px;height:8.8px;background:#fff;border:1px solid #aaa;box-shadow:inset 0 0.5px 0 #ddd"></div><div class="a" style="left:723.8px;top:155.3px;width:4.7px;height:4.4px;background:linear-gradient(#f6f6f6,#d8d8d8);border:0.5px solid #aaa"></div><div class="a" style="left:723.8px;top:159.7px;width:4.7px;height:4.4px;background:linear-gradient(#f6f6f6,#d8d8d8);border:0.5px solid #aaa"></div><svg class="a" style="left:723.8px;top:155.3px" width="4.7" height="8.8"><path d="M1.35,2.8000000000000003 L3.35,2.8000000000000003 L2.35,1.4000000000000001Z M1.35,6.000000000000001 L3.35,6.000000000000001 L2.35,7.4Z" fill="#444"/></svg><div class="t" style="left:721.8px;top:158px;font-size:5.0px;color:#111;transform:translateX(-100%);">75.0</div><div class="a" style="left:557.9px;top:179.1px;width:175.7px;height:153.3px;background:#e6e6e6;border:0.6px solid #c4c4c4;border-radius:2px"></div><div class="a" style="left:558.0px;top:179.1px;width:175.7px;height:10.3px;background:linear-gradient(#dadada,#c9c9c9);border-radius:2px 2px 0 0;border-bottom:0.5px solid #bbb"></div><div class="t" style="left:562.8px;top:182px;font-size:5.05px;color:#111;font-weight:bold;">Filter Tasks</div><svg class="a" style="left:0;top:0" width="743" height="456"><circle cx="726.2" cy="184.25" r="3.2" fill="#d2d2d2" stroke="#b4b4b4" stroke-width="0.6"/><path d="M724.9000000000001,183.95 L726.2,182.65 L727.5,183.95 M724.9000000000001,185.55 L726.2,184.25 L727.5,185.55" stroke="#3a3a3a" stroke-width="0.85" fill="none"/></svg><div class="t" style="left:562.1px;top:196px;font-size:5.15px;color:#1e1e1e;">Match Range:</div><div class="a" style="left:614.3px;top:194.3px;width:31.5px;height:8.6px;background:#fff;border:1px solid #aaa;box-shadow:inset 0 0.5px 0 #ddd"></div><div class="a" style="left:645.8px;top:194.3px;width:4.8px;height:4.3px;background:linear-gradient(#f6f6f6,#d8d8d8);border:0.5px solid #aaa"></div><div class="a" style="left:645.8px;top:198.6px;width:4.8px;height:4.3px;background:linear-gradient(#f6f6f6,#d8d8d8);border:0.5px solid #aaa"></div><svg class="a" style="left:645.8px;top:194.3px" width="4.8" height="8.6"><path d="M1.4,2.75 L3.4,2.75 L2.4,1.3499999999999999Z M1.4,5.85 L3.4,5.85 L2.4,7.249999999999999Z" fill="#444"/></svg><div class="t" style="left:643.8px;top:196px;font-size:5.0px;color:#111;transform:translateX(-100%);">40</div><div class="t" style="left:664.8px;top:196px;font-size:5.15px;color:#1e1e1e;">to</div><div class="a" style="left:684.2px;top:194.3px;width:31.5px;height:8.6px;background:#fff;border:1px solid #aaa;box-shadow:inset 0 0.5px 0 #ddd"></div><div class="a" style="left:715.7px;top:194.3px;width:4.8px;height:4.3px;background:linear-gradient(#f6f6f6,#d8d8d8);border:0.5px solid #aaa"></div><div class="a" style="left:715.7px;top:198.6px;width:4.8px;height:4.3px;background:linear-gradient(#f6f6f6,#d8d8d8);border:0.5px solid #aaa"></div><svg class="a" style="left:715.7px;top:194.3px" width="4.8" height="8.6"><path d="M1.4,2.75 L3.4,2.75 L2.4,1.3499999999999999Z M1.4,5.85 L3.4,5.85 L2.4,7.249999999999999Z" fill="#444"/></svg><div class="t" style="left:713.7px;top:196px;font-size:5.0px;color:#111;transform:translateX(-100%);">200</div><div class="t" style="left:723.3px;top:196px;font-size:5.15px;color:#1e1e1e;">Hz</div><div class="t" style="left:562.1px;top:206px;font-size:5.15px;color:#1e1e1e;">Individual Max Boost:</div><div class="a" style="left:614.3px;top:203.7px;width:31.5px;height:8.6px;background:#fff;border:1px solid #aaa;box-shadow:inset 0 0.5px 0 #ddd"></div><div class="a" style="left:645.8px;top:203.7px;width:4.8px;height:4.3px;background:linear-gradient(#f6f6f6,#d8d8d8);border:0.5px solid #aaa"></div><div class="a" style="left:645.8px;top:208.0px;width:4.8px;height:4.3px;background:linear-gradient(#f6f6f6,#d8d8d8);border:0.5px solid #aaa"></div><svg class="a" style="left:645.8px;top:203.7px" width="4.8" height="8.6"><path d="M1.4,2.75 L3.4,2.75 L2.4,1.3499999999999999Z M1.4,5.85 L3.4,5.85 L2.4,7.249999999999999Z" fill="#444"/></svg><div class="t" style="left:643.8px;top:206px;font-size:5.0px;color:#111;transform:translateX(-100%);">9</div><div class="t" style="left:653.4px;top:206px;font-size:5.15px;color:#1e1e1e;">dB</div><div class="t" style="left:562.1px;top:216px;font-size:5.15px;color:#1e1e1e;">Overall Max Boost:</div><div class="a" style="left:614.3px;top:213.6px;width:31.5px;height:8.6px;background:#fff;border:1px solid #aaa;box-shadow:inset 0 0.5px 0 #ddd"></div><div class="a" style="left:645.8px;top:213.6px;width:4.8px;height:4.3px;background:linear-gradient(#f6f6f6,#d8d8d8);border:0.5px solid #aaa"></div><div class="a" style="left:645.8px;top:217.9px;width:4.8px;height:4.3px;background:linear-gradient(#f6f6f6,#d8d8d8);border:0.5px solid #aaa"></div><svg class="a" style="left:645.8px;top:213.6px" width="4.8" height="8.6"><path d="M1.4,2.75 L3.4,2.75 L2.4,1.3499999999999999Z M1.4,5.85 L3.4,5.85 L2.4,7.249999999999999Z" fill="#444"/></svg><div class="t" style="left:643.8px;top:216px;font-size:5.0px;color:#111;transform:translateX(-100%);">0</div><div class="t" style="left:653.4px;top:216px;font-size:5.15px;color:#1e1e1e;">dB</div><div class="t" style="left:562.1px;top:226px;font-size:5.15px;color:#1e1e1e;">Flatness Target:</div><div class="a" style="left:614.3px;top:223.6px;width:31.5px;height:8.6px;background:#fff;border:1px solid #aaa;box-shadow:inset 0 0.5px 0 #ddd"></div><div class="a" style="left:645.8px;top:223.6px;width:4.8px;height:4.3px;background:linear-gradient(#f6f6f6,#d8d8d8);border:0.5px solid #aaa"></div><div class="a" style="left:645.8px;top:227.9px;width:4.8px;height:4.3px;background:linear-gradient(#f6f6f6,#d8d8d8);border:0.5px solid #aaa"></div><svg class="a" style="left:645.8px;top:223.6px" width="4.8" height="8.6"><path d="M1.4,2.75 L3.4,2.75 L2.4,1.3499999999999999Z M1.4,5.85 L3.4,5.85 L2.4,7.249999999999999Z" fill="#444"/></svg><div class="t" style="left:643.8px;top:226px;font-size:5.0px;color:#111;transform:translateX(-100%);">3</div><div class="t" style="left:653.4px;top:226px;font-size:5.15px;color:#1e1e1e;">dB</div><div class="a" style="left:565.8px;top:238.4px;width:5.8px;height:5.8px;background:linear-gradient(#fdfdfd,#f0f0f0);border:0.5px solid #c4c4c4;border-radius:1px;box-shadow:0 0.3px 0.6px rgba(0,0,0,.18)"></div><div class="t" style="left:574.4px;top:239px;font-size:5.15px;color:#1e1e1e;">Allow narrow filters below 200 Hz</div><div class="t" style="left:562.5px;top:251px;font-size:5.15px;color:#1e1e1e;">Match response to target</div><div class="t" style="left:562.5px;top:265px;font-size:5.15px;color:#1e1e1e;">Manual optimisation controls</div><div class="t" style="left:562.5px;top:272px;font-size:5.15px;color:#1e1e1e;">Optimise gains</div><div class="t" style="left:562.5px;top:279px;font-size:5.15px;color:#1e1e1e;">Optimise gains and Qs</div><div class="t" style="left:562.5px;top:286px;font-size:5.15px;color:#1e1e1e;">Optimise gains, Qs and frequencies</div><div class="t" style="left:562.5px;top:300px;font-size:5.15px;color:#c4c4c4;">Retrieve filter settings from equaliser</div><div class="t" style="left:562.5px;top:308px;font-size:5.15px;color:#1e1e1e;">Save filter coefficients to file</div><div class="t" style="left:562.5px;top:315px;font-size:5.15px;color:#1e1e1e;">Export filter settings as text</div><div class="t" style="left:562.5px;top:322px;font-size:5.15px;color:#1e1e1e;">Reset filters for current measurement</div><div class="a" style="left:558.0px;top:335.0px;width:175.7px;height:10.6px;background:linear-gradient(#dadada,#c9c9c9);border-radius:2px 2px 0 0;border-bottom:0.5px solid #bbb"></div><div class="t" style="left:562.8px;top:338px;font-size:5.05px;color:#111;font-weight:bold;">Modal Analysis</div><svg class="a" style="left:0;top:0" width="743" height="456"><circle cx="726.2" cy="340.3" r="3.2" fill="#d2d2d2" stroke="#b4b4b4" stroke-width="0.6"/><path d="M724.9000000000001,339.0 L726.2,340.3 L727.5,339.0 M724.9000000000001,340.6 L726.2,341.90000000000003 L727.5,340.6" stroke="#3a3a3a" stroke-width="0.85" fill="none"/></svg><div class="a" style="left:558.0px;top:345.6px;width:175.7px;height:0.6px;background:#c0c0c0"></div><div class="a" style="left:558.0px;top:348.5px;width:175.7px;height:10.0px;background:linear-gradient(#dadada,#c9c9c9);border-radius:2px 2px 0 0;border-bottom:0.5px solid #bbb"></div><div class="t" style="left:562.8px;top:351px;font-size:5.05px;color:#111;font-weight:bold;">Resonances</div><svg class="a" style="left:0;top:0" width="743" height="456"><circle cx="726.2" cy="353.5" r="3.2" fill="#d2d2d2" stroke="#b4b4b4" stroke-width="0.6"/><path d="M724.9000000000001,352.2 L726.2,353.5 L727.5,352.2 M724.9000000000001,353.8 L726.2,355.1 L727.5,353.8" stroke="#3a3a3a" stroke-width="0.85" fill="none"/></svg><div class="a" style="left:558.0px;top:358.5px;width:175.7px;height:0.6px;background:#c0c0c0"></div><div class="a" style="left:733.3px;top:20.6px;width:0.8px;height:435.4px;background:#b8b8b8"></div>
<div class="a" style="left:140.0px;top:97.0px;width:333.0px;height:145.0px;background:#e7e7e7;box-shadow:0 2px 9px rgba(0,0,0,.38);border-radius:3px 3px 2px 2px"></div><div class="a" style="left:140.0px;top:97.0px;width:333.0px;height:8.5px;background:linear-gradient(#f2f2f2,#e9e9e9);border-radius:3px 3px 0 0"></div><div class="a" style="left:143.8px;top:98.8px;width:4.8px;height:4.8px;border-radius:50%;background:#d0d0d0;border:0.5px solid #c4c4c4"></div><div class="a" style="left:152.6px;top:98.8px;width:4.8px;height:4.8px;border-radius:50%;background:#d0d0d0;border:0.5px solid #c4c4c4"></div><div class="a" style="left:161.4px;top:98.8px;width:4.8px;height:4.8px;border-radius:50%;background:#d0d0d0;border:0.5px solid #c4c4c4"></div><div class="t" style="left:306.0px;top:100px;font-size:5.2px;color:#b4b4b4;transform:translateX(-50%);">EQ Filters</div><div class="t" style="left:141.0px;top:112px;font-size:5.05px;color:#3a3aff;font-weight:bold;">20180926_CML_LR</div><svg class="a" style="left:199px;top:109px" width="9" height="8"><path d="M0.5,1.5 h3 l1,1 h4 v5 h-8z" fill="#7ab0e8" stroke="#5a8fd0" stroke-width="0.5"/><rect x="0.5" y="3.3" width="8" height="4.2" fill="#a0c8f0" stroke="#5a8fd0" stroke-width="0.4"/></svg><svg class="a" style="left:212px;top:108.5px" width="9" height="9"><rect x="0.5" y="1.5" width="7.5" height="7" fill="#555" stroke="#333" stroke-width="0.4"/><rect x="2" y="2" width="4" height="2.5" fill="#ddd"/><path d="M3,7 L5,4 L8.5,0.5" stroke="#d8b020" stroke-width="1.3" fill="none"/></svg><svg class="a" style="left:226.5px;top:109.5px" width="7" height="7"><path d="M1,1 L6,6 M6,1 L1,6" stroke="#e02020" stroke-width="1.2"/></svg><div class="a" style="left:240.2px;top:108.4px;width:50.4px;height:9.3px;background:#fff;border:1px solid #aaa;box-shadow:inset 0 0.5px 0 #ddd"></div><div class="a" style="left:283.4px;top:108.4px;width:7.2px;height:9.3px;background:linear-gradient(#f0f0f0,#c8c8c8);border:1px solid #aaa"></div><svg class="a" style="left:283.4px;top:108.4px" width="7.2" height="9.3"><path d="M1.8,3.6500000000000004 L5.4,3.6500000000000004 L3.6,5.95Z" fill="#333"/></svg><div class="t" style="left:242.2px;top:111px;font-size:5.0px;color:#111;">Sort Ascending</div><div class="a" style="left:295.3px;top:108.4px;width:28.9px;height:9.3px;background:#fff;border:1px solid #aaa;box-shadow:inset 0 0.5px 0 #ddd"></div><div class="a" style="left:317.3px;top:108.4px;width:6.9px;height:9.3px;background:linear-gradient(#f0f0f0,#c8c8c8);border:1px solid #aaa"></div><svg class="a" style="left:317.3px;top:108.4px" width="6.9" height="9.3"><path d="M1.6500000000000001,3.6500000000000004 L5.25,3.6500000000000004 L3.45,5.95Z" fill="#333"/></svg><div class="t" style="left:297.3px;top:111px;font-size:5.0px;color:#111;">by Freq</div><svg class="a" style="left:330.5px;top:109px" width="7" height="8"><path d="M2,7.5 V1 M0.6,2.6 L2,0.6 L3.4,2.6 M5,0.5 V7 M3.6,5.4 L5,7.4 L6.4,5.4" stroke="#111" stroke-width="0.9" fill="none"/></svg><div class="a" style="left:346.5px;top:110.0px;width:5.6px;height:5.6px;background:linear-gradient(#fdfdfd,#f0f0f0);border:0.5px solid #c4c4c4;border-radius:1px;box-shadow:0 0.3px 0.6px rgba(0,0,0,.18)"></div><svg class="a" style="left:346.5px;top:110px" width="5.6" height="5.6"><path d="M1.4,3.08 L2.52,4.4799999999999995 L4.4799999999999995,0.84" fill="none" stroke="#111" stroke-width="0.85"/></svg><div class="t" style="left:354.5px;top:112px;font-size:5.05px;color:#111;">Always On Top</div><div class="t" style="left:141.9px;top:120px;font-size:5.0px;color:#222;">MiniDSP</div><div class="t" style="left:185.2px;top:120px;font-size:5.0px;color:#222;">Control</div><div class="t" style="left:226.5px;top:120px;font-size:5.0px;color:#222;transform:translateX(-50%);">Type</div><div class="t" style="left:269.6px;top:120px;font-size:5.0px;color:#222;transform:translateX(-50%);">Frequency</div><div class="t" style="left:304.5px;top:120px;font-size:5.0px;color:#222;transform:translateX(-50%);">Gain</div><div class="t" style="left:337.0px;top:120px;font-size:5.0px;color:#222;transform:translateX(-50%);">Q</div><div class="t" style="left:364.8px;top:120px;font-size:5.0px;color:#222;transform:translateX(-50%);">Hz</div><div class="t" style="left:385.0px;top:120px;font-size:5.0px;color:#222;transform:translateX(-50%);">Target T60</div><div class="t" style="left:415.5px;top:120px;font-size:5.0px;color:#222;transform:translateX(-50%);">Mode T60</div><div class="t" style="left:446.0px;top:120px;font-size:5.0px;color:#222;transform:translateX(-50%);">Filter T60</div><div class="a" style="left:145.0px;top:127.5px;width:6.0px;height:6.0px;background:linear-gradient(#fdfdfd,#f0f0f0);border:0.5px solid #c4c4c4;border-radius:1px;box-shadow:0 0.3px 0.6px rgba(0,0,0,.18)"></div><svg class="a" style="left:145px;top:127.5px" width="6" height="6"><path d="M1.5,3.3000000000000003 L2.7,4.800000000000001 L4.800000000000001,0.8999999999999999" fill="none" stroke="#111" stroke-width="0.85"/></svg><div class="a" style="left:155.0px;top:129.9px;width:25.0px;height:1.3px;background:#e87070"></div><div class="a" style="left:154.6px;top:128.5px;width:0.9px;height:4.0px;background:#e87070"></div><div class="a" style="left:182.9px;top:125.8px;width:33.5px;height:9.4px;background:#fff;border:1px solid #aaa;box-shadow:inset 0 0.5px 0 #ddd"></div><div class="a" style="left:209.8px;top:125.8px;width:6.6px;height:9.4px;background:linear-gradient(#f0f0f0,#c8c8c8);border:1px solid #aaa"></div><svg class="a" style="left:209.8px;top:125.8px" width="6.6" height="9.4"><path d="M1.4999999999999998,3.7 L5.1,3.7 L3.3,6.0Z" fill="#333"/></svg><div class="t" style="left:184.9px;top:128px;font-size:5.0px;color:#111;">Auto</div><div class="a" style="left:218.3px;top:125.8px;width:35.7px;height:9.4px;background:#fff;border:1px solid #aaa;box-shadow:inset 0 0.5px 0 #ddd"></div><div class="a" style="left:247.6px;top:125.8px;width:6.4px;height:9.4px;background:linear-gradient(#f0f0f0,#c8c8c8);border:1px solid #aaa"></div><svg class="a" style="left:247.6px;top:125.8px" width="6.4" height="9.4"><path d="M1.4000000000000001,3.7 L5.0,3.7 L3.2,6.0Z" fill="#333"/></svg><div class="t" style="left:220.3px;top:128px;font-size:5.0px;color:#111;">PK</div><div class="a" style="left:256.5px;top:126.0px;width:26.1px;height:9.2px;background:#fff;border:1px solid #aaa;box-shadow:inset 0 0.5px 0 #ddd"></div><div class="a" style="left:282.6px;top:126.0px;width:5.2px;height:4.6px;background:linear-gradient(#f6f6f6,#d8d8d8);border:0.5px solid #aaa"></div><div class="a" style="left:282.6px;top:130.6px;width:5.2px;height:4.6px;background:linear-gradient(#f6f6f6,#d8d8d8);border:0.5px solid #aaa"></div><svg class="a" style="left:282.6px;top:126.0px" width="5.2" height="9.2"><path d="M1.6,2.9 L3.6,2.9 L2.6,1.4999999999999998Z M1.6,6.3 L3.6,6.3 L2.6,7.699999999999999Z" fill="#444"/></svg><div class="t" style="left:280.6px;top:128px;font-size:5.0px;color:#111;transform:translateX(-100%);">64.30</div><div class="a" style="left:289.5px;top:126.0px;width:26.1px;height:9.2px;background:#fff;border:1px solid #aaa;box-shadow:inset 0 0.5px 0 #ddd"></div><div class="a" style="left:315.6px;top:126.0px;width:5.2px;height:4.6px;background:linear-gradient(#f6f6f6,#d8d8d8);border:0.5px solid #aaa"></div><div class="a" style="left:315.6px;top:130.6px;width:5.2px;height:4.6px;background:linear-gradient(#f6f6f6,#d8d8d8);border:0.5px solid #aaa"></div><svg class="a" style="left:315.6px;top:126.0px" width="5.2" height="9.2"><path d="M1.6,2.9 L3.6,2.9 L2.6,1.4999999999999998Z M1.6,6.3 L3.6,6.3 L2.6,7.699999999999999Z" fill="#444"/></svg><div class="t" style="left:313.6px;top:128px;font-size:5.0px;color:#111;transform:translateX(-100%);">-7.0</div><div class="a" style="left:322.7px;top:126.0px;width:26.4px;height:9.2px;background:#fff;border:1px solid #aaa;box-shadow:inset 0 0.5px 0 #ddd"></div><div class="a" style="left:349.1px;top:126.0px;width:5.2px;height:4.6px;background:linear-gradient(#f6f6f6,#d8d8d8);border:0.5px solid #aaa"></div><div class="a" style="left:349.1px;top:130.6px;width:5.2px;height:4.6px;background:linear-gradient(#f6f6f6,#d8d8d8);border:0.5px solid #aaa"></div><svg class="a" style="left:349.1px;top:126.0px" width="5.2" height="9.2"><path d="M1.6,2.9 L3.6,2.9 L2.6,1.4999999999999998Z M1.6,6.3 L3.6,6.3 L2.6,7.699999999999999Z" fill="#444"/></svg><div class="t" style="left:347.1px;top:128px;font-size:5.0px;color:#111;transform:translateX(-100%);">5.000</div><div class="t" style="left:365.0px;top:129px;font-size:5.0px;color:#3a3aff;transform:translateX(-50%);">12.9</div><div class="t" style="left:415.5px;top:129px;font-size:5.0px;color:#3a3aff;transform:translateX(-50%);">256</div><div class="t" style="left:446.0px;top:129px;font-size:5.0px;color:#3a3aff;transform:translateX(-50%);">114</div><div class="a" style="left:145.0px;top:138.1px;width:6.0px;height:6.0px;background:linear-gradient(#fdfdfd,#f0f0f0);border:0.5px solid #c4c4c4;border-radius:1px;box-shadow:0 0.3px 0.6px rgba(0,0,0,.18)"></div><svg class="a" style="left:145px;top:138.06px" width="6" height="6"><path d="M1.5,3.3000000000000003 L2.7,4.800000000000001 L4.800000000000001,0.8999999999999999" fill="none" stroke="#111" stroke-width="0.85"/></svg><div class="a" style="left:155.0px;top:140.5px;width:25.0px;height:1.3px;background:#60d060"></div><div class="a" style="left:154.6px;top:139.1px;width:0.9px;height:4.0px;background:#60d060"></div><div class="a" style="left:182.9px;top:136.4px;width:33.5px;height:9.4px;background:#fff;border:1px solid #aaa;box-shadow:inset 0 0.5px 0 #ddd"></div><div class="a" style="left:209.8px;top:136.4px;width:6.6px;height:9.4px;background:linear-gradient(#f0f0f0,#c8c8c8);border:1px solid #aaa"></div><svg class="a" style="left:209.8px;top:136.4px" width="6.6" height="9.4"><path d="M1.4999999999999998,3.7 L5.1,3.7 L3.3,6.0Z" fill="#333"/></svg><div class="t" style="left:184.9px;top:139px;font-size:5.0px;color:#111;">Auto</div><div class="a" style="left:218.3px;top:136.4px;width:35.7px;height:9.4px;background:#fff;border:1px solid #aaa;box-shadow:inset 0 0.5px 0 #ddd"></div><div class="a" style="left:247.6px;top:136.4px;width:6.4px;height:9.4px;background:linear-gradient(#f0f0f0,#c8c8c8);border:1px solid #aaa"></div><svg class="a" style="left:247.6px;top:136.4px" width="6.4" height="9.4"><path d="M1.4000000000000001,3.7 L5.0,3.7 L3.2,6.0Z" fill="#333"/></svg><div class="t" style="left:220.3px;top:139px;font-size:5.0px;color:#111;">PK</div><div class="a" style="left:256.5px;top:136.6px;width:26.1px;height:9.2px;background:#fff;border:1px solid #aaa;box-shadow:inset 0 0.5px 0 #ddd"></div><div class="a" style="left:282.6px;top:136.6px;width:5.2px;height:4.6px;background:linear-gradient(#f6f6f6,#d8d8d8);border:0.5px solid #aaa"></div><div class="a" style="left:282.6px;top:141.2px;width:5.2px;height:4.6px;background:linear-gradient(#f6f6f6,#d8d8d8);border:0.5px solid #aaa"></div><svg class="a" style="left:282.6px;top:136.6px" width="5.2" height="9.2"><path d="M1.6,2.9 L3.6,2.9 L2.6,1.4999999999999998Z M1.6,6.3 L3.6,6.3 L2.6,7.699999999999999Z" fill="#444"/></svg><div class="t" style="left:280.6px;top:139px;font-size:5.0px;color:#111;transform:translateX(-100%);">53.80</div><div class="a" style="left:289.5px;top:136.6px;width:26.1px;height:9.2px;background:#fff;border:1px solid #aaa;box-shadow:inset 0 0.5px 0 #ddd"></div><div class="a" style="left:315.6px;top:136.6px;width:5.2px;height:4.6px;background:linear-gradient(#f6f6f6,#d8d8d8);border:0.5px solid #aaa"></div><div class="a" style="left:315.6px;top:141.2px;width:5.2px;height:4.6px;background:linear-gradient(#f6f6f6,#d8d8d8);border:0.5px solid #aaa"></div><svg class="a" style="left:315.6px;top:136.6px" width="5.2" height="9.2"><path d="M1.6,2.9 L3.6,2.9 L2.6,1.4999999999999998Z M1.6,6.3 L3.6,6.3 L2.6,7.699999999999999Z" fill="#444"/></svg><div class="t" style="left:313.6px;top:139px;font-size:5.0px;color:#111;transform:translateX(-100%);">-4.9</div><div class="a" style="left:322.7px;top:136.6px;width:26.4px;height:9.2px;background:#fff;border:1px solid #aaa;box-shadow:inset 0 0.5px 0 #ddd"></div><div class="a" style="left:349.1px;top:136.6px;width:5.2px;height:4.6px;background:linear-gradient(#f6f6f6,#d8d8d8);border:0.5px solid #aaa"></div><div class="a" style="left:349.1px;top:141.2px;width:5.2px;height:4.6px;background:linear-gradient(#f6f6f6,#d8d8d8);border:0.5px solid #aaa"></div><svg class="a" style="left:349.1px;top:136.6px" width="5.2" height="9.2"><path d="M1.6,2.9 L3.6,2.9 L2.6,1.4999999999999998Z M1.6,6.3 L3.6,6.3 L2.6,7.699999999999999Z" fill="#444"/></svg><div class="t" style="left:347.1px;top:139px;font-size:5.0px;color:#111;transform:translateX(-100%);">5.000</div><div class="t" style="left:365.0px;top:140px;font-size:5.0px;color:#3a3aff;transform:translateX(-50%);">10.8</div><div class="t" style="left:415.5px;top:140px;font-size:5.0px;color:#3a3aff;transform:translateX(-50%);">271</div><div class="t" style="left:446.0px;top:140px;font-size:5.0px;color:#3a3aff;transform:translateX(-50%);">154</div><div class="a" style="left:145.0px;top:148.6px;width:6.0px;height:6.0px;background:linear-gradient(#fdfdfd,#f0f0f0);border:0.5px solid #c4c4c4;border-radius:1px;box-shadow:0 0.3px 0.6px rgba(0,0,0,.18)"></div><svg class="a" style="left:145px;top:148.62px" width="6" height="6"><path d="M1.5,3.3000000000000003 L2.7,4.800000000000001 L4.800000000000001,0.8999999999999999" fill="none" stroke="#111" stroke-width="0.85"/></svg><div class="a" style="left:155.0px;top:151.0px;width:25.0px;height:1.3px;background:#8080e0"></div><div class="a" style="left:154.6px;top:149.6px;width:0.9px;height:4.0px;background:#8080e0"></div><div class="a" style="left:182.9px;top:146.9px;width:33.5px;height:9.4px;background:#fff;border:1px solid #aaa;box-shadow:inset 0 0.5px 0 #ddd"></div><div class="a" style="left:209.8px;top:146.9px;width:6.6px;height:9.4px;background:linear-gradient(#f0f0f0,#c8c8c8);border:1px solid #aaa"></div><svg class="a" style="left:209.8px;top:146.9px" width="6.6" height="9.4"><path d="M1.4999999999999998,3.7 L5.1,3.7 L3.3,6.0Z" fill="#333"/></svg><div class="t" style="left:184.9px;top:149px;font-size:5.0px;color:#111;">Auto</div><div class="a" style="left:218.3px;top:146.9px;width:35.7px;height:9.4px;background:#fff;border:1px solid #aaa;box-shadow:inset 0 0.5px 0 #ddd"></div><div class="a" style="left:247.6px;top:146.9px;width:6.4px;height:9.4px;background:linear-gradient(#f0f0f0,#c8c8c8);border:1px solid #aaa"></div><svg class="a" style="left:247.6px;top:146.9px" width="6.4" height="9.4"><path d="M1.4000000000000001,3.7 L5.0,3.7 L3.2,6.0Z" fill="#333"/></svg><div class="t" style="left:220.3px;top:149px;font-size:5.0px;color:#111;">PK</div><div class="a" style="left:256.5px;top:147.1px;width:26.1px;height:9.2px;background:#fff;border:1px solid #aaa;box-shadow:inset 0 0.5px 0 #ddd"></div><div class="a" style="left:282.6px;top:147.1px;width:5.2px;height:4.6px;background:linear-gradient(#f6f6f6,#d8d8d8);border:0.5px solid #aaa"></div><div class="a" style="left:282.6px;top:151.7px;width:5.2px;height:4.6px;background:linear-gradient(#f6f6f6,#d8d8d8);border:0.5px solid #aaa"></div><svg class="a" style="left:282.6px;top:147.1px" width="5.2" height="9.2"><path d="M1.6,2.9 L3.6,2.9 L2.6,1.4999999999999998Z M1.6,6.3 L3.6,6.3 L2.6,7.699999999999999Z" fill="#444"/></svg><div class="t" style="left:280.6px;top:150px;font-size:5.0px;color:#111;transform:translateX(-100%);">151.0</div><div class="a" style="left:289.5px;top:147.1px;width:26.1px;height:9.2px;background:#fff;border:1px solid #aaa;box-shadow:inset 0 0.5px 0 #ddd"></div><div class="a" style="left:315.6px;top:147.1px;width:5.2px;height:4.6px;background:linear-gradient(#f6f6f6,#d8d8d8);border:0.5px solid #aaa"></div><div class="a" style="left:315.6px;top:151.7px;width:5.2px;height:4.6px;background:linear-gradient(#f6f6f6,#d8d8d8);border:0.5px solid #aaa"></div><svg class="a" style="left:315.6px;top:147.1px" width="5.2" height="9.2"><path d="M1.6,2.9 L3.6,2.9 L2.6,1.4999999999999998Z M1.6,6.3 L3.6,6.3 L2.6,7.699999999999999Z" fill="#444"/></svg><div class="t" style="left:313.6px;top:150px;font-size:5.0px;color:#111;transform:translateX(-100%);">-4.4</div><div class="a" style="left:322.7px;top:147.1px;width:26.4px;height:9.2px;background:#fff;border:1px solid #aaa;box-shadow:inset 0 0.5px 0 #ddd"></div><div class="a" style="left:349.1px;top:147.1px;width:5.2px;height:4.6px;background:linear-gradient(#f6f6f6,#d8d8d8);border:0.5px solid #aaa"></div><div class="a" style="left:349.1px;top:151.7px;width:5.2px;height:4.6px;background:linear-gradient(#f6f6f6,#d8d8d8);border:0.5px solid #aaa"></div><svg class="a" style="left:349.1px;top:147.1px" width="5.2" height="9.2"><path d="M1.6,2.9 L3.6,2.9 L2.6,1.4999999999999998Z M1.6,6.3 L3.6,6.3 L2.6,7.699999999999999Z" fill="#444"/></svg><div class="t" style="left:347.1px;top:150px;font-size:5.0px;color:#111;transform:translateX(-100%);">5.000</div><div class="t" style="left:365.0px;top:150px;font-size:5.0px;color:#3a3aff;transform:translateX(-50%);">30.2</div><div class="t" style="left:415.5px;top:150px;font-size:5.0px;color:#3a3aff;transform:translateX(-50%);">94</div><div class="t" style="left:446.0px;top:150px;font-size:5.0px;color:#3a3aff;transform:translateX(-50%);">57</div><div class="a" style="left:145.0px;top:159.2px;width:6.0px;height:6.0px;background:linear-gradient(#fdfdfd,#f0f0f0);border:0.5px solid #c4c4c4;border-radius:1px;box-shadow:0 0.3px 0.6px rgba(0,0,0,.18)"></div><svg class="a" style="left:145px;top:159.18px" width="6" height="6"><path d="M1.5,3.3000000000000003 L2.7,4.800000000000001 L4.800000000000001,0.8999999999999999" fill="none" stroke="#111" stroke-width="0.85"/></svg><div class="a" style="left:155.0px;top:161.6px;width:25.0px;height:1.3px;background:#e0d860"></div><div class="a" style="left:154.6px;top:160.2px;width:0.9px;height:4.0px;background:#e0d860"></div><div class="a" style="left:182.9px;top:157.5px;width:33.5px;height:9.4px;background:#fff;border:1px solid #aaa;box-shadow:inset 0 0.5px 0 #ddd"></div><div class="a" style="left:209.8px;top:157.5px;width:6.6px;height:9.4px;background:linear-gradient(#f0f0f0,#c8c8c8);border:1px solid #aaa"></div><svg class="a" style="left:209.8px;top:157.5px" width="6.6" height="9.4"><path d="M1.4999999999999998,3.7 L5.1,3.7 L3.3,6.0Z" fill="#333"/></svg><div class="t" style="left:184.9px;top:160px;font-size:5.0px;color:#111;">Auto</div><div class="a" style="left:218.3px;top:157.5px;width:35.7px;height:9.4px;background:#fff;border:1px solid #aaa;box-shadow:inset 0 0.5px 0 #ddd"></div><div class="a" style="left:247.6px;top:157.5px;width:6.4px;height:9.4px;background:linear-gradient(#f0f0f0,#c8c8c8);border:1px solid #aaa"></div><svg class="a" style="left:247.6px;top:157.5px" width="6.4" height="9.4"><path d="M1.4000000000000001,3.7 L5.0,3.7 L3.2,6.0Z" fill="#333"/></svg><div class="t" style="left:220.3px;top:160px;font-size:5.0px;color:#111;">None</div><div class="a" style="left:145.0px;top:169.7px;width:6.0px;height:6.0px;background:linear-gradient(#fdfdfd,#f0f0f0);border:0.5px solid #c4c4c4;border-radius:1px;box-shadow:0 0.3px 0.6px rgba(0,0,0,.18)"></div><svg class="a" style="left:145px;top:169.74px" width="6" height="6"><path d="M1.5,3.3000000000000003 L2.7,4.800000000000001 L4.800000000000001,0.8999999999999999" fill="none" stroke="#111" stroke-width="0.85"/></svg><div class="a" style="left:155.0px;top:172.1px;width:25.0px;height:1.3px;background:#70d8e0"></div><div class="a" style="left:154.6px;top:170.7px;width:0.9px;height:4.0px;background:#70d8e0"></div><div class="a" style="left:182.9px;top:168.0px;width:33.5px;height:9.4px;background:#fff;border:1px solid #aaa;box-shadow:inset 0 0.5px 0 #ddd"></div><div class="a" style="left:209.8px;top:168.0px;width:6.6px;height:9.4px;background:linear-gradient(#f0f0f0,#c8c8c8);border:1px solid #aaa"></div><svg class="a" style="left:209.8px;top:168.0px" width="6.6" height="9.4"><path d="M1.4999999999999998,3.7 L5.1,3.7 L3.3,6.0Z" fill="#333"/></svg><div class="t" style="left:184.9px;top:171px;font-size:5.0px;color:#111;">Auto</div><div class="a" style="left:218.3px;top:168.0px;width:35.7px;height:9.4px;background:#fff;border:1px solid #aaa;box-shadow:inset 0 0.5px 0 #ddd"></div><div class="a" style="left:247.6px;top:168.0px;width:6.4px;height:9.4px;background:linear-gradient(#f0f0f0,#c8c8c8);border:1px solid #aaa"></div><svg class="a" style="left:247.6px;top:168.0px" width="6.4" height="9.4"><path d="M1.4000000000000001,3.7 L5.0,3.7 L3.2,6.0Z" fill="#333"/></svg><div class="t" style="left:220.3px;top:171px;font-size:5.0px;color:#111;">None</div><div class="a" style="left:145.0px;top:180.3px;width:6.0px;height:6.0px;background:linear-gradient(#fdfdfd,#f0f0f0);border:0.5px solid #c4c4c4;border-radius:1px;box-shadow:0 0.3px 0.6px rgba(0,0,0,.18)"></div><svg class="a" style="left:145px;top:180.3px" width="6" height="6"><path d="M1.5,3.3000000000000003 L2.7,4.800000000000001 L4.800000000000001,0.8999999999999999" fill="none" stroke="#111" stroke-width="0.85"/></svg><div class="a" style="left:155.0px;top:182.7px;width:25.0px;height:1.3px;background:#e070e0"></div><div class="a" style="left:154.6px;top:181.3px;width:0.9px;height:4.0px;background:#e070e0"></div><div class="a" style="left:182.9px;top:178.6px;width:33.5px;height:9.4px;background:#fff;border:1px solid #aaa;box-shadow:inset 0 0.5px 0 #ddd"></div><div class="a" style="left:209.8px;top:178.6px;width:6.6px;height:9.4px;background:linear-gradient(#f0f0f0,#c8c8c8);border:1px solid #aaa"></div><svg class="a" style="left:209.8px;top:178.6px" width="6.6" height="9.4"><path d="M1.4999999999999998,3.7 L5.1,3.7 L3.3,6.0Z" fill="#333"/></svg><div class="t" style="left:184.9px;top:181px;font-size:5.0px;color:#111;">Auto</div><div class="a" style="left:218.3px;top:178.6px;width:35.7px;height:9.4px;background:#fff;border:1px solid #aaa;box-shadow:inset 0 0.5px 0 #ddd"></div><div class="a" style="left:247.6px;top:178.6px;width:6.4px;height:9.4px;background:linear-gradient(#f0f0f0,#c8c8c8);border:1px solid #aaa"></div><svg class="a" style="left:247.6px;top:178.6px" width="6.4" height="9.4"><path d="M1.4000000000000001,3.7 L5.0,3.7 L3.2,6.0Z" fill="#333"/></svg><div class="t" style="left:220.3px;top:181px;font-size:5.0px;color:#111;">None</div>
</body></html>
